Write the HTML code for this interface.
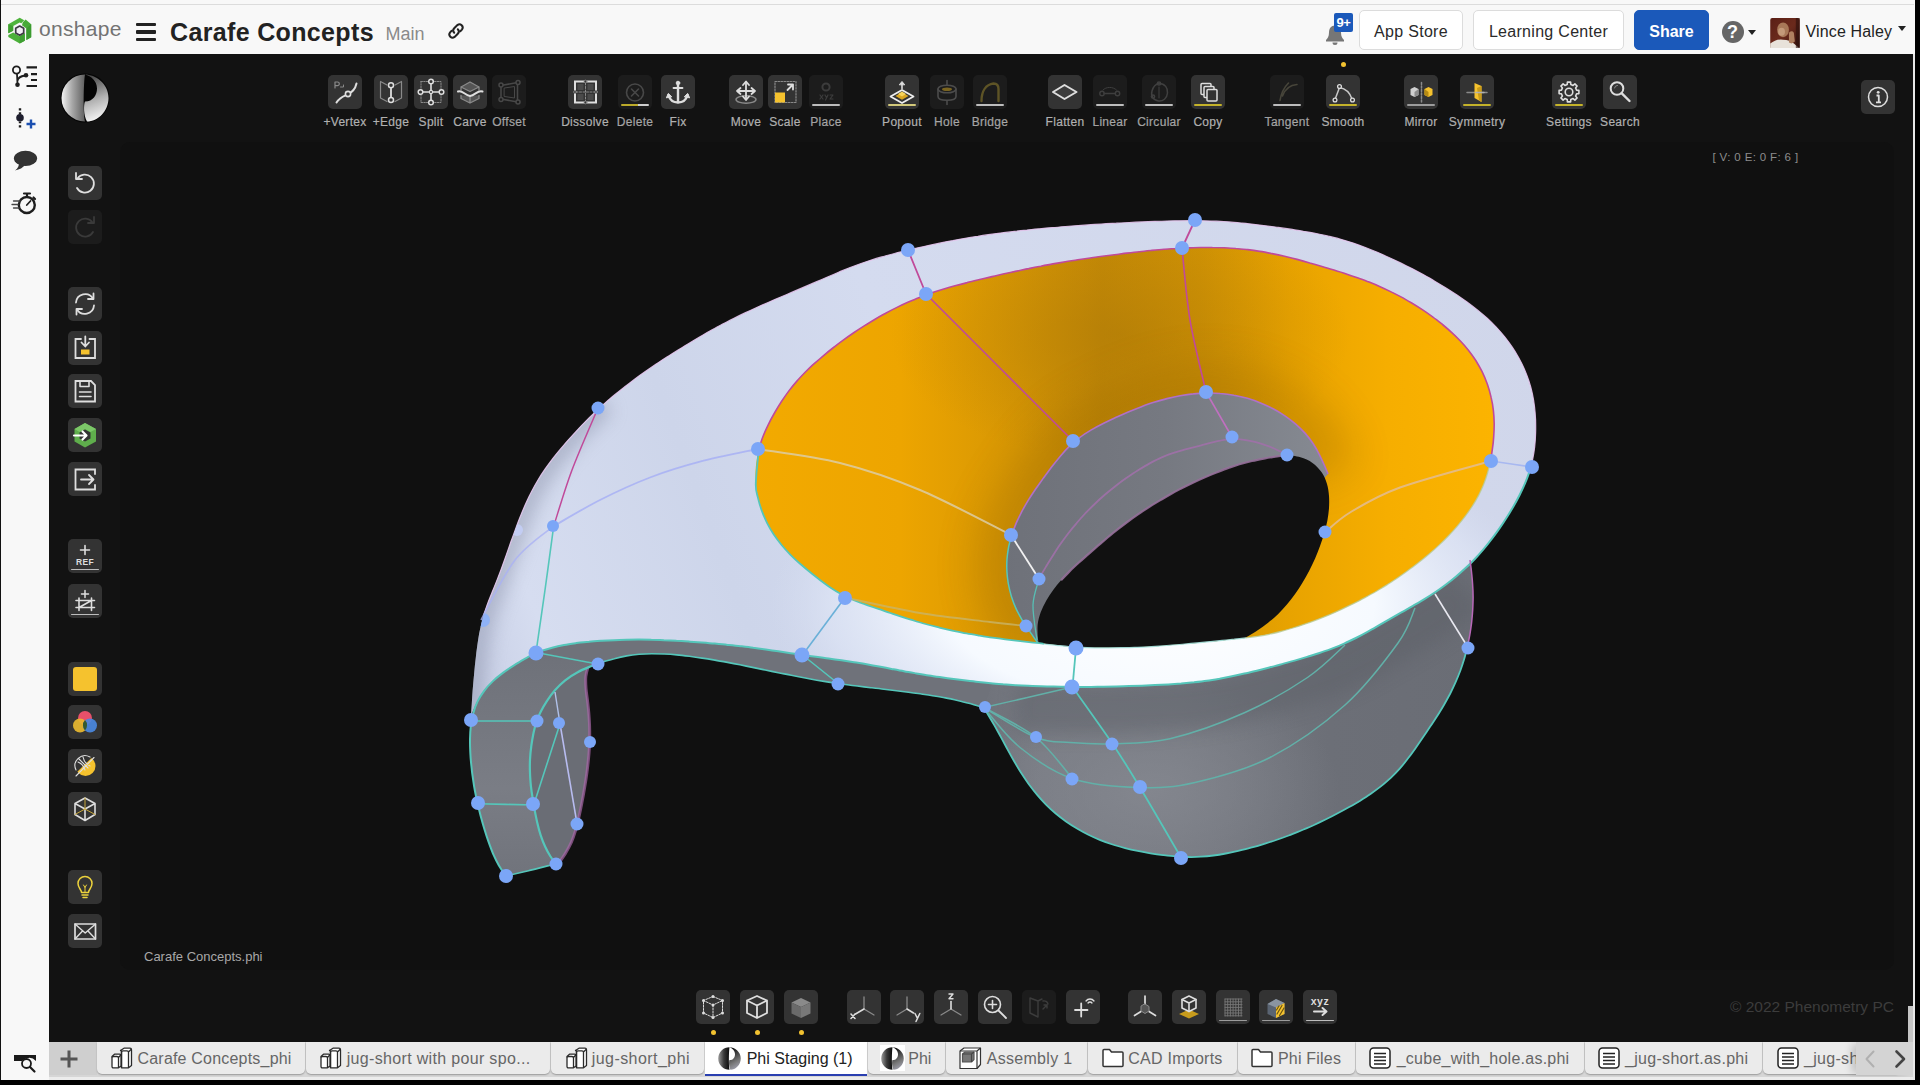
<!DOCTYPE html>
<html lang="en"><head><meta charset="utf-8"><title>Carafe Concepts | Phi Staging (1)</title>
<style>
*{box-sizing:border-box;margin:0;padding:0}
html,body{width:1920px;height:1085px;overflow:hidden;background:#000;font-family:"Liberation Sans",sans-serif}
#app{position:absolute;left:0;top:0;width:1915px;height:1080px;background:#f8f8f8;overflow:hidden}
#header{position:absolute;left:0;top:0;width:1914px;height:54px;background:#f8f8f8}
#header .topline{position:absolute;left:0;top:4px;width:1914px;height:1px;background:#dcdcdc}
#header .abs{position:absolute}
.title{position:absolute;left:170px;top:16.500px;font-weight:bold;font-size:25px;line-height:30px;color:#222;white-space:nowrap;letter-spacing:0.35px}
.branch{position:absolute;left:385.500px;top:21px;font-size:18px;line-height:26px;color:#8a8a8a;white-space:nowrap}
.hbtn{position:absolute;top:10px;height:40px;border:1px solid #dcdcdc;border-radius:5px;background:#fff;color:#2a2a2a;font-size:16px;line-height:42px;text-align:center;white-space:nowrap;letter-spacing:0.3px}
.hbtn.share{background:#1b59ba;border-color:#1b59ba;color:#fff;font-weight:bold;font-size:16px;letter-spacing:0}
.uname{position:absolute;left:1805.500px;top:20px;letter-spacing:0.150px;font-size:16px;line-height:24px;color:#222;white-space:nowrap}
#sidebar{position:absolute;left:0;top:54px;width:49px;height:1026px;background:#f8f8f8}
#canvas{position:absolute;left:49px;top:54px;width:1864px;height:988px;background:#121212;overflow:hidden}
#viewport{position:absolute;left:71px;top:88px;width:1774px;height:828px;background:#101010;border-radius:10px}
#rline{z-index:20;position:absolute;left:1913px;top:54px;width:2px;height:1026px;background:#e8e8e8}
#lline{z-index:20;position:absolute;left:0;top:0;width:1px;height:1080px;background:#111}
#rstrip{z-index:20;position:absolute;left:1908px;top:1006px;width:5px;height:36px;background:#c6c6c6}
.tb{position:absolute;width:34px;height:34px;border-radius:5px;background:#333}
.tb.dim{background:#1c1c1c}
.tb svg{position:absolute;left:0;top:0;width:34px;height:34px;overflow:visible}
.tl{position:absolute;top:61px;font-size:12px;line-height:14px;color:#b0b0b0;-webkit-text-stroke:0.2px #b0b0b0;white-space:nowrap;transform:translateX(-50%);text-align:center;letter-spacing:0.3px}
.ul{position:absolute;height:1.600px;width:28px;border-radius:1px;margin-top:0.400px}
.dot{position:absolute;width:5px;height:5px;border-radius:50%;background:#f2c230}
.vef{position:absolute;left:1663.5px;top:96px;font-size:11.5px;line-height:14px;color:#8c8c8c;white-space:nowrap;letter-spacing:0.36px}
.fname{position:absolute;left:95px;top:896px;font-size:13px;line-height:14px;color:#a8a8a8;white-space:nowrap}
.copy{position:absolute;left:1681px;top:945px;font-size:15.5px;line-height:16px;color:#3c3c3c;white-space:nowrap}
#tabs{position:absolute;left:49px;top:1042px;width:1864px;height:38px;background:#d6d6d6;overflow:hidden}
.addtab{position:absolute;left:0;top:0;width:48px;height:33px;background:#cfcfcf}
.tab{position:absolute;top:0;height:32px;background:#ebebeb;border-radius:0 0 5px 5px;box-shadow:0 1px 1.500px rgba(0,0,0,.28)}
.tab.active{background:#fff;border-radius:0;height:34px;border-bottom:2.500px solid #2a3fb0;box-shadow:none}
.ti{position:absolute;overflow:visible}
.tt{position:absolute;top:6px;font-size:16px;line-height:22px;color:#666;white-space:nowrap}
.tt.act{color:#222}
.tabnav{position:absolute;left:1807px;top:0;width:57px;height:33px;background:#d4d4d4;box-shadow:-6px 0 8px -2px rgba(0,0,0,.18)}
.tabfoot1{position:absolute;left:0;top:33px;width:1864px;height:2px;background:#cdcdcd;display:none}
.tabfoot2{position:absolute;left:0;top:35px;width:1864px;height:3px;background:#ececec}

</style></head>
<body>
<div id="app">
<div id="header">
<div class="topline"></div>
<svg class="abs" style="left:6px;top:15px" width="28" height="30" viewBox="6 15 28 30">
<path d="M8.300 33.300 V24.200 L19.700 17.700 L24.200 20.200 L21.300 23.300 L19.700 22.400 L13.200 26.100 V30.700 Z" fill="#4fb43c"/>
<path d="M8.300 33.300 V24.200 L13.200 26.100 V30.700Z" fill="#3f9f30"/>
<path d="M22.800 22.200 L25.600 19.600 L31.200 24.200 V37.200 L26.400 40 V28.400 L22 25.200 Z" fill="#48aa38"/>
<path d="M26.400 28.400 L31.200 24.200 V37.200 L26.400 40Z" fill="#3c9a30"/>
<path d="M8.300 35 L13.200 32.400 L19.700 36.200 L24.800 33.300 V40.800 L19.700 43.400 L8.300 37 Z" fill="#4cb03a"/>
<path d="M19.700 36.200 L24.800 33.300 V40.800 L19.700 43.400Z" fill="#3f9f32"/>
<path d="M19.700 26 L23.700 28.300 V32.900 L19.700 35.200 L15.700 32.900 V28.300 Z" fill="#f4eef6" stroke="#3e3a44" stroke-width="1.700" stroke-linejoin="round"/>
</svg>
<div class="abs" style="left:39px;top:14px;font-size:21px;line-height:30px;color:#737373;letter-spacing:0.3px;white-space:nowrap">onshape</div>
<div class="abs" style="left:136px;top:23px;width:20px;height:3.400px;background:#222;border-radius:1px"></div>
<div class="abs" style="left:136px;top:30.300px;width:20px;height:3.400px;background:#222;border-radius:1px"></div>
<div class="abs" style="left:136px;top:37.500px;width:20px;height:3.400px;background:#222;border-radius:1px"></div>
<div class="title">Carafe Concepts</div>
<div class="branch">Main</div>
<svg class="abs" style="left:446px;top:21px" width="20" height="20" viewBox="0 0 20 20" fill="none" stroke="#222" stroke-width="2" stroke-linecap="round">
<path d="M8.2 11.8 a3.2 3.2 0 0 1 0 -4.5 l3.2 -3.2 a3.2 3.2 0 0 1 4.5 4.5 l-1.6 1.6"/>
<path d="M11.8 8.2 a3.2 3.2 0 0 1 0 4.5 l-3.2 3.2 a3.2 3.2 0 0 1 -4.5 -4.5 l1.6 -1.6"/>
</svg>
<svg class="abs" style="left:1324px;top:24px" width="24" height="22" viewBox="0 0 24 22"><path d="M11 1.5 c-4 0-6 3-6 7 c0 4-1.5 6-3 7.5 v1.5 h18 v-1.5 c-1.500-1.500-3-3.500-3-7.500 c0-4-2-7-6-7z M8.500 18.500 a2.500 2.500 0 0 0 5 0z" fill="#767676"/></svg>
<div class="abs" style="left:1334px;top:13px;width:19px;height:19px;background:#1b59ba;border-radius:2px;color:#fff;font-weight:bold;font-size:13px;line-height:19px;text-align:center;letter-spacing:-0.5px">9+</div>
<div class="hbtn" style="left:1359px;width:104px">App Store</div>
<div class="hbtn" style="left:1473px;width:151px">Learning Center</div>
<div class="hbtn share" style="left:1634px;width:75px">Share</div>
<div class="abs" style="left:1721.500px;top:21px;width:22px;height:22px;border-radius:50%;background:#666;color:#fff;font-weight:bold;font-size:18px;line-height:22px;text-align:center">?</div>
<div class="abs" style="left:1748px;top:30px;width:0;height:0;border-left:4.5px solid transparent;border-right:4.5px solid transparent;border-top:5px solid #222"></div>
<svg class="abs" style="left:1769.500px;top:17.500px" width="30" height="30.500" viewBox="0 0 30 31">
<defs><linearGradient id="avg" x1="0" y1="0" x2="1" y2="1"><stop offset="0" stop-color="#5a1f16"/><stop offset="0.5" stop-color="#6b2a1c"/><stop offset="1" stop-color="#3a1510"/></linearGradient></defs>
<rect width="30" height="31" rx="2" fill="url(#avg)"/>
<ellipse cx="13" cy="12" rx="6" ry="7.5" fill="#a87858"/>
<ellipse cx="11.500" cy="14" rx="3.500" ry="4" fill="#c49a7a"/>
<path d="M0 31 L0 26 Q6 21 13 22 Q20 22 24 26 L30 31Z" fill="#e8e2da"/>
<path d="M19 15 q3 -3 5 0 l1 9 q-3 3 -6 1z" fill="#b08060"/>
<rect x="26" y="0" width="4" height="31" fill="#2a0f0c" opacity=".6"/>
</svg>
<div class="uname">Vince Haley</div>
<div class="abs" style="left:1898px;top:26px;width:0;height:0;border-left:4.5px solid transparent;border-right:4.5px solid transparent;border-top:5px solid #222"></div>
</div>
<div id="rline"></div><div id="lline"></div><div id="rstrip"></div>

<div id="sidebar">
<svg style="position:absolute;left:0;top:0" width="49" height="180" viewBox="0 54 49 180" fill="none" stroke="#1e1e1e" stroke-linecap="round">
<circle cx="16.500" cy="70" r="3.600" stroke-width="1.800"/>
<path d="M17 74 L17.500 84 M17.500 81 Q18 76.500 25 75.500" stroke-width="1.800"/>
<circle cx="17.500" cy="84.800" r="2.300" fill="#1e1e1e" stroke="none"/>
<circle cx="26" cy="75.300" r="2.300" fill="#1e1e1e" stroke="none"/>
<path d="M26.500 67.300 H37 M31 74.100 H37 M31 80 H37 M26.500 86 H37" stroke-width="2.200" stroke-linecap="butt"/>
<path d="M20 108.300 V110.500 M20 112.200 V114.200 M20 121.400 V123.200 M20 125.200 V127.400" stroke-width="2.400" stroke-linecap="butt"/>
<circle cx="20" cy="117.800" r="3.800" fill="#1e1e2e" stroke="none"/>
<path d="M26.500 124 H35.500 M31 119.500 V128.500" stroke="#1b4fb0" stroke-width="2.400" stroke-linecap="butt"/>
<ellipse cx="25.500" cy="158.300" rx="11.600" ry="7.600" fill="#333" stroke="none"/>
<path d="M19 163 Q19 168 15 170.500 Q22 169 25 165Z" fill="#333" stroke="none"/>
<circle cx="26.800" cy="205" r="8" stroke-width="2.400"/>
<path d="M24 193.500 H30 M27 194 V197 M33.500 197.500 L35 199" stroke-width="2.200"/>
<path d="M26.800 205 L30.500 201" stroke-width="1.800"/>
<path d="M13.500 201 H20 M12 204.500 H18 M13.500 208 H19" stroke-width="1.300" stroke="#444"/>
</svg>
<svg style="position:absolute;left:12px;top:996px" width="28" height="24" viewBox="12 1050 28 24" fill="none" stroke="#1a1a1a">
<path d="M14 1055 H36 V1061 Q30 1054.500 22 1061 H14Z" fill="#1a1a1a" stroke="none"/>
<circle cx="26.500" cy="1063.500" r="4.500" stroke-width="1.800" fill="#f8f8f8"/>
<path d="M30 1067 L34.500 1071.500" stroke-width="2.200" stroke-linecap="round"/>
</svg>
</div>

<div id="canvas">
<div id="viewport"></div>
<svg id="model" style="position:absolute;left:0;top:0" width="1864" height="988" viewBox="49 54 1864 988">
<defs>
<linearGradient id="gRim" gradientUnits="userSpaceOnUse" x1="470" y1="700" x2="1540" y2="300"><stop offset="0" stop-color="#c6cde4"/><stop offset="0.080" stop-color="#d6ddf0"/><stop offset="0.250" stop-color="#cdd5ea"/><stop offset="0.450" stop-color="#d4dbef"/><stop offset="1" stop-color="#d0d6ea"/></linearGradient>
<radialGradient id="gBand" gradientUnits="userSpaceOnUse" cx="1160" cy="605" r="390" gradientTransform="translate(1160 605) scale(1 0.45) translate(-1160 -605)"><stop offset="0" stop-color="#ffffff"/><stop offset="0.550" stop-color="#f6faff"/><stop offset="0.850" stop-color="#dfe6f6" stop-opacity="0.600"/><stop offset="1" stop-color="#d6ddf0" stop-opacity="0"/></radialGradient>
<linearGradient id="gOr" gradientUnits="userSpaceOnUse" x1="750" y1="0" x2="1500" y2="0"><stop offset="0" stop-color="#f3aa00"/><stop offset="0.200" stop-color="#eda500"/><stop offset="0.360" stop-color="#d69604"/><stop offset="0.470" stop-color="#c58a06"/><stop offset="0.600" stop-color="#d19304"/><stop offset="0.720" stop-color="#e8a300"/><stop offset="0.850" stop-color="#f6ae00"/><stop offset="1" stop-color="#fcb400"/></linearGradient>
<radialGradient id="gOrD" gradientUnits="userSpaceOnUse" cx="1120" cy="335" r="230" gradientTransform="translate(1120 335) scale(1 0.55) translate(-1120 -335)"><stop offset="0" stop-color="#a87608" stop-opacity="0.500"/><stop offset="1" stop-color="#b07c08" stop-opacity="0"/></radialGradient>
<linearGradient id="gNeck" gradientUnits="userSpaceOnUse" x1="1000" y1="0" x2="1330" y2="0"><stop offset="0" stop-color="#6e7179"/><stop offset="0.500" stop-color="#767981"/><stop offset="1" stop-color="#868a92"/></linearGradient>
<linearGradient id="gBody" gradientUnits="userSpaceOnUse" x1="980" y1="0" x2="1480" y2="0"><stop offset="0" stop-color="#6f727a"/><stop offset="0.120" stop-color="#787b83"/><stop offset="0.400" stop-color="#767981"/><stop offset="0.700" stop-color="#6c6f77"/><stop offset="1" stop-color="#6a6d75"/></linearGradient>
<linearGradient id="gHand" gradientUnits="userSpaceOnUse" x1="0" y1="650" x2="0" y2="880"><stop offset="0" stop-color="#6e7179"/><stop offset="0.600" stop-color="#7a7d85"/><stop offset="1" stop-color="#70737b"/></linearGradient>
<filter id="blur8" filterUnits="userSpaceOnUse" x="300" y="100" width="1400" height="900"><feGaussianBlur stdDeviation="9"/></filter>
<clipPath id="cRim"><path d="M471.0 716.0 C471.1 713.9 471.5 707.7 471.8 703.5 C472.0 699.4 472.3 695.1 472.6 690.9 C473.0 686.7 473.3 682.5 473.7 678.3 C474.1 674.1 474.5 669.9 474.9 665.6 C475.4 661.4 475.8 657.2 476.3 652.9 C476.9 648.6 477.4 644.2 478.1 639.9 C478.8 635.7 479.5 631.3 480.5 627.2 C481.4 623.0 482.5 618.9 483.7 614.9 C484.9 610.9 486.4 607.0 487.8 603.1 C489.3 599.2 490.9 595.4 492.4 591.5 C494.0 587.6 495.6 583.7 497.2 579.6 C498.8 575.6 500.3 571.5 501.9 567.3 C503.4 563.1 504.9 558.9 506.4 554.6 C507.9 550.4 509.4 546.1 510.9 541.8 C512.5 537.5 514.0 533.2 515.6 528.9 C517.2 524.6 518.8 520.3 520.5 516.1 C522.2 511.9 523.9 507.6 525.8 503.5 C527.6 499.4 529.5 495.4 531.6 491.5 C533.6 487.6 535.7 483.8 538.0 480.0 C540.2 476.3 542.6 472.7 545.0 469.2 C547.4 465.7 550.0 462.3 552.5 458.9 C555.1 455.6 557.7 452.4 560.4 449.2 C563.1 445.9 565.8 442.8 568.6 439.6 C571.4 436.5 574.2 433.4 577.1 430.3 C580.0 427.2 582.9 424.1 585.9 421.1 C588.9 418.1 591.9 415.1 595.0 412.2 C598.1 409.2 601.3 406.4 604.4 403.6 C607.6 400.8 610.8 398.0 614.1 395.3 C617.4 392.6 620.8 389.9 624.2 387.2 C627.6 384.6 631.1 381.9 634.6 379.3 C638.1 376.7 641.7 374.1 645.3 371.6 C648.9 369.1 652.6 366.6 656.2 364.1 C659.9 361.6 663.6 359.2 667.3 356.8 C671.1 354.4 674.8 352.0 678.5 349.7 C682.2 347.4 685.9 345.1 689.6 342.9 C693.2 340.7 696.8 338.6 700.4 336.5 C704.0 334.4 707.5 332.3 711.2 330.3 C714.8 328.3 718.4 326.3 722.2 324.3 C725.9 322.4 729.7 320.4 733.5 318.5 C737.3 316.6 741.2 314.7 745.0 312.9 C748.9 311.1 752.8 309.3 756.7 307.5 C760.7 305.7 764.7 304.0 768.7 302.2 C772.7 300.5 776.8 298.7 780.8 297.0 C784.8 295.3 788.8 293.6 792.8 291.9 C796.7 290.2 800.6 288.6 804.5 286.9 C808.4 285.2 812.2 283.6 816.1 281.9 C819.9 280.3 823.7 278.6 827.5 277.0 C831.3 275.4 835.0 273.8 838.6 272.2 C842.3 270.7 845.9 269.2 849.5 267.8 C853.1 266.4 856.6 265.1 860.3 263.8 C863.9 262.5 867.5 261.3 871.3 260.1 C875.0 258.9 878.8 257.8 882.7 256.7 C886.5 255.5 890.5 254.5 894.5 253.5 C898.4 252.4 902.4 251.5 906.3 250.5 C910.2 249.6 914.1 248.7 917.9 247.8 C921.7 247.0 925.4 246.2 929.2 245.3 C933.1 244.5 936.9 243.7 940.8 242.9 C944.7 242.1 948.8 241.3 952.9 240.6 C956.9 239.8 961.1 239.0 965.3 238.3 C969.5 237.6 973.7 236.9 977.9 236.3 C982.0 235.6 986.1 235.0 990.2 234.4 C994.3 233.9 998.3 233.3 1002.4 232.8 C1006.4 232.3 1010.4 231.9 1014.5 231.4 C1018.6 230.9 1022.7 230.5 1026.9 230.1 C1031.0 229.6 1035.3 229.2 1039.5 228.8 C1043.8 228.4 1048.1 228.0 1052.4 227.6 C1056.6 227.3 1061.0 226.9 1065.3 226.5 C1069.6 226.2 1073.9 225.9 1078.1 225.6 C1082.4 225.3 1086.6 225.0 1090.9 224.7 C1095.1 224.4 1099.3 224.1 1103.5 223.9 C1107.8 223.6 1112.0 223.4 1116.3 223.2 C1120.5 222.9 1124.8 222.7 1129.1 222.5 C1133.4 222.3 1137.7 222.1 1142.0 221.9 C1146.3 221.7 1150.5 221.6 1154.6 221.4 C1158.8 221.3 1162.9 221.2 1166.9 221.0 C1171.0 220.9 1174.9 220.9 1178.9 220.8 C1182.9 220.7 1186.9 220.7 1191.0 220.7 C1195.1 220.7 1199.3 220.7 1203.5 220.8 C1207.8 220.9 1212.1 221.0 1216.4 221.2 C1220.6 221.4 1224.8 221.6 1228.9 221.9 C1233.0 222.2 1237.1 222.6 1241.2 223.0 C1245.2 223.4 1249.3 223.8 1253.4 224.3 C1257.5 224.8 1261.6 225.3 1265.7 225.8 C1269.8 226.3 1274.0 226.9 1278.2 227.4 C1282.3 228.0 1286.5 228.6 1290.7 229.2 C1295.0 229.9 1299.2 230.5 1303.4 231.3 C1307.6 232.0 1311.9 232.7 1316.0 233.5 C1320.2 234.4 1324.3 235.2 1328.4 236.2 C1332.6 237.1 1336.7 238.2 1340.8 239.3 C1344.9 240.5 1349.1 241.8 1353.2 243.1 C1357.3 244.5 1361.4 246.0 1365.4 247.5 C1369.4 249.1 1373.4 250.7 1377.3 252.3 C1381.2 254.0 1385.1 255.7 1388.9 257.5 C1392.7 259.2 1396.6 261.0 1400.4 262.9 C1404.2 264.8 1408.1 266.7 1411.9 268.6 C1415.7 270.6 1419.5 272.6 1423.2 274.6 C1427.0 276.7 1430.6 278.7 1434.3 280.9 C1438.0 283.0 1441.6 285.2 1445.2 287.4 C1448.9 289.7 1452.5 292.0 1456.2 294.4 C1459.8 296.9 1463.5 299.4 1467.0 301.9 C1470.5 304.5 1474.0 307.1 1477.4 309.9 C1480.7 312.6 1484.0 315.4 1487.2 318.2 C1490.3 321.1 1493.3 324.1 1496.2 327.1 C1499.1 330.2 1501.8 333.3 1504.5 336.6 C1507.1 339.9 1509.6 343.2 1511.9 346.7 C1514.3 350.2 1516.5 353.8 1518.6 357.5 C1520.6 361.2 1522.6 365.0 1524.3 368.9 C1526.0 372.8 1527.6 376.9 1528.9 381.0 C1530.3 385.1 1531.4 389.3 1532.3 393.5 C1533.2 397.8 1534.0 402.1 1534.5 406.5 C1535.0 410.9 1535.4 415.4 1535.6 419.8 C1535.7 424.3 1535.8 428.8 1535.6 433.3 C1535.5 437.8 1535.2 442.3 1534.7 446.7 C1534.2 451.1 1533.5 455.5 1532.6 459.7 C1531.7 464.0 1530.6 468.1 1529.3 472.1 C1528.0 476.1 1526.5 480.0 1524.8 483.9 C1523.2 487.7 1521.4 491.4 1519.5 495.2 C1517.6 498.9 1515.6 502.7 1513.4 506.4 C1511.3 510.1 1509.1 513.8 1506.7 517.5 C1504.4 521.2 1501.9 525.0 1499.3 528.6 C1496.8 532.2 1494.1 535.9 1491.4 539.4 C1488.7 542.9 1486.0 546.3 1483.2 549.6 C1480.4 552.9 1477.6 556.1 1474.6 559.2 C1471.7 562.3 1468.7 565.3 1465.6 568.1 C1462.5 571.0 1459.3 573.8 1456.1 576.5 C1452.8 579.3 1449.5 581.9 1446.0 584.5 C1442.6 587.1 1439.1 589.6 1435.5 592.0 C1431.9 594.4 1428.2 596.8 1424.4 599.1 C1420.7 601.4 1416.8 603.6 1413.0 605.8 C1409.1 608.1 1405.2 610.2 1401.4 612.4 C1397.6 614.6 1393.8 616.8 1390.1 618.9 C1386.3 621.1 1382.6 623.3 1378.8 625.4 C1375.0 627.6 1371.3 629.8 1367.5 631.8 C1363.7 633.9 1359.8 636.0 1355.9 638.0 C1352.0 639.9 1348.1 641.8 1344.1 643.6 C1340.1 645.4 1336.0 647.0 1331.9 648.6 C1327.8 650.1 1323.7 651.6 1319.5 653.0 C1315.4 654.4 1311.2 655.6 1307.1 656.9 C1302.9 658.2 1298.8 659.4 1294.6 660.6 C1290.4 661.8 1286.2 663.0 1282.0 664.1 C1277.8 665.3 1273.6 666.4 1269.4 667.5 C1265.2 668.6 1260.9 669.7 1256.8 670.7 C1252.6 671.7 1248.5 672.7 1244.4 673.6 C1240.2 674.6 1236.2 675.5 1232.0 676.3 C1227.9 677.1 1223.8 677.9 1219.6 678.7 C1215.4 679.4 1211.2 680.1 1206.9 680.7 C1202.7 681.3 1198.4 681.8 1194.1 682.3 C1189.8 682.7 1185.5 683.1 1181.2 683.5 C1176.8 683.8 1172.5 684.1 1168.1 684.4 C1163.7 684.6 1159.3 684.9 1154.9 685.1 C1150.5 685.3 1146.1 685.5 1141.8 685.7 C1137.4 685.8 1133.1 686.0 1128.9 686.1 C1124.6 686.3 1120.4 686.4 1116.2 686.5 C1112.0 686.6 1107.8 686.7 1103.6 686.8 C1099.5 686.8 1095.3 686.9 1091.2 686.9 C1087.0 686.9 1082.8 686.9 1078.6 686.9 C1074.5 686.9 1070.2 686.9 1066.0 686.8 C1061.8 686.8 1057.6 686.7 1053.3 686.6 C1049.1 686.5 1044.9 686.4 1040.7 686.3 C1036.4 686.1 1032.3 686.0 1028.1 685.8 C1023.9 685.6 1019.8 685.4 1015.6 685.2 C1011.5 684.9 1007.3 684.6 1003.1 684.3 C999.0 684.0 994.8 683.7 990.7 683.3 C986.5 682.9 982.4 682.5 978.3 682.0 C974.2 681.6 970.1 681.1 966.0 680.6 C961.9 680.1 957.8 679.6 953.7 679.1 C949.5 678.5 945.4 677.9 941.2 677.3 C937.1 676.7 932.9 676.1 928.8 675.4 C924.6 674.8 920.5 674.1 916.3 673.4 C912.2 672.7 908.0 672.0 903.9 671.2 C899.8 670.5 895.7 669.7 891.5 668.9 C887.4 668.2 883.2 667.4 879.1 666.6 C874.9 665.8 870.8 665.1 866.6 664.3 C862.4 663.6 858.2 662.9 854.0 662.3 C849.8 661.6 845.6 661.0 841.4 660.3 C837.1 659.7 832.9 659.1 828.6 658.5 C824.4 658.0 820.1 657.4 815.8 656.8 C811.6 656.2 807.3 655.6 803.1 655.0 C798.9 654.4 794.8 653.8 790.6 653.2 C786.5 652.6 782.4 651.9 778.3 651.3 C774.1 650.7 770.0 650.1 765.8 649.5 C761.7 648.9 757.4 648.3 753.2 647.8 C749.0 647.2 744.7 646.7 740.5 646.2 C736.2 645.7 731.9 645.3 727.7 644.9 C723.4 644.4 719.1 644.0 714.8 643.6 C710.5 643.3 706.2 642.9 701.9 642.5 C697.6 642.2 693.3 641.9 689.0 641.6 C684.8 641.3 680.6 641.0 676.4 640.8 C672.2 640.5 668.1 640.3 663.9 640.2 C659.7 640.0 655.5 639.8 651.3 639.8 C647.2 639.7 643.0 639.6 638.9 639.6 C634.8 639.6 630.8 639.7 626.7 639.8 C622.6 639.9 618.5 640.0 614.4 640.2 C610.2 640.4 606.0 640.6 601.8 640.8 C597.6 641.1 593.3 641.4 589.1 641.8 C584.8 642.1 580.6 642.6 576.4 643.1 C572.3 643.7 568.1 644.3 564.1 645.1 C560.0 645.9 556.0 646.8 552.2 647.8 C548.4 648.8 543.9 650.1 541.2 650.9 C538.5 651.7 536.9 652.2 536.0 652.5 C534.3 653.4 529.7 656.0 526.1 658.1 C522.5 660.2 518.2 662.6 514.3 665.0 C510.4 667.5 506.4 670.1 502.7 672.9 C499.1 675.6 495.7 678.4 492.5 681.5 C489.3 684.5 486.5 687.5 483.8 691.1 C481.1 694.7 478.7 698.9 476.5 703.0 C474.4 707.2 471.9 713.8 471.0 716.0Z"/></clipPath>
<clipPath id="cBody"><path d="M1470.0 560.0 C1470.2 562.0 1471.1 567.8 1471.5 571.9 C1471.9 575.9 1472.4 580.1 1472.6 584.3 C1472.9 588.5 1473.1 592.9 1473.1 597.2 C1473.1 601.5 1472.9 605.8 1472.7 610.0 C1472.4 614.2 1472.1 618.4 1471.6 622.6 C1471.1 626.7 1470.5 630.8 1469.8 634.9 C1469.1 639.0 1468.3 643.0 1467.4 647.0 C1466.5 651.0 1465.4 655.0 1464.2 658.9 C1463.0 662.9 1461.7 666.8 1460.3 670.7 C1458.8 674.6 1457.2 678.6 1455.5 682.4 C1453.8 686.3 1451.9 690.2 1450.0 694.0 C1448.0 697.7 1445.9 701.5 1443.8 705.2 C1441.7 708.8 1439.4 712.4 1437.2 716.0 C1434.9 719.6 1432.5 723.1 1430.2 726.6 C1427.8 730.2 1425.4 733.7 1423.0 737.3 C1420.5 740.9 1418.0 744.6 1415.5 748.2 C1413.0 751.8 1410.4 755.4 1407.7 758.8 C1405.1 762.3 1402.3 765.7 1399.5 768.9 C1396.6 772.1 1393.6 775.2 1390.5 778.1 C1387.4 781.0 1384.1 783.7 1380.8 786.4 C1377.5 789.0 1374.0 791.5 1370.5 793.9 C1367.0 796.3 1363.4 798.6 1359.8 800.9 C1356.1 803.1 1352.4 805.2 1348.7 807.3 C1344.9 809.5 1341.1 811.5 1337.2 813.5 C1333.4 815.6 1329.5 817.6 1325.5 819.5 C1321.5 821.4 1317.5 823.3 1313.5 825.2 C1309.4 827.0 1305.3 828.8 1301.2 830.5 C1297.0 832.2 1292.9 833.9 1288.7 835.5 C1284.5 837.1 1280.4 838.6 1276.2 840.0 C1272.0 841.5 1267.7 842.8 1263.5 844.1 C1259.3 845.4 1255.1 846.6 1250.8 847.7 C1246.6 848.9 1242.4 849.9 1238.2 850.9 C1234.1 851.8 1229.9 852.7 1225.8 853.5 C1221.6 854.3 1217.5 855.0 1213.4 855.5 C1209.2 856.0 1205.1 856.4 1200.9 856.7 C1196.7 857.0 1192.5 857.1 1188.4 857.0 C1184.2 857.0 1180.0 856.7 1175.8 856.4 C1171.6 856.1 1167.4 855.6 1163.1 855.1 C1158.9 854.6 1154.7 854.0 1150.4 853.3 C1146.2 852.6 1142.0 851.8 1137.7 850.9 C1133.5 850.1 1129.3 849.2 1125.1 848.1 C1120.9 847.0 1116.7 845.9 1112.6 844.5 C1108.5 843.2 1104.3 841.7 1100.3 840.1 C1096.3 838.4 1092.3 836.6 1088.4 834.7 C1084.5 832.8 1080.7 830.7 1077.0 828.5 C1073.3 826.3 1069.6 823.9 1066.0 821.4 C1062.5 818.9 1059.0 816.3 1055.7 813.5 C1052.3 810.7 1049.1 807.7 1046.0 804.6 C1043.0 801.5 1040.0 798.3 1037.2 794.9 C1034.4 791.6 1031.7 788.1 1029.0 784.5 C1026.4 780.9 1023.9 777.1 1021.4 773.3 C1019.0 769.5 1016.6 765.5 1014.3 761.5 C1011.9 757.5 1009.7 753.5 1007.5 749.4 C1005.3 745.3 1003.1 741.1 1000.9 737.1 C998.6 733.0 996.4 728.9 994.1 724.9 C991.8 721.0 988.9 716.1 987.2 713.2 C985.5 710.3 984.3 708.5 983.7 707.5 L990 670 L1300 600 Z"/></clipPath>
<radialGradient id="gBodyL" gradientUnits="userSpaceOnUse" cx="1150" cy="790" r="190" gradientTransform="translate(1150 790) scale(1 0.6) translate(-1150 -790)"><stop offset="0" stop-color="#868991" stop-opacity="0.800"/><stop offset="1" stop-color="#868991" stop-opacity="0"/></radialGradient>
<clipPath id="cOr"><path d="M758.8 449.5 C759.7 446.3 761.3 440.9 762.9 436.8 C764.4 432.7 766.3 428.7 768.2 424.8 C770.1 420.8 772.3 416.8 774.5 413.0 C776.7 409.1 779.1 405.2 781.5 401.5 C783.9 397.9 786.4 394.3 788.9 390.9 C791.5 387.5 794.1 384.3 796.9 381.1 C799.6 378.0 802.5 375.0 805.4 372.0 C808.4 369.1 811.4 366.2 814.5 363.4 C817.6 360.7 820.7 358.0 823.9 355.3 C827.0 352.7 830.2 350.1 833.5 347.5 C836.8 344.9 840.2 342.4 843.6 339.9 C847.0 337.4 850.6 334.9 854.1 332.5 C857.6 330.1 861.1 327.8 864.6 325.6 C868.1 323.4 871.6 321.3 875.1 319.2 C878.6 317.1 882.1 315.2 885.7 313.2 C889.2 311.3 892.8 309.4 896.5 307.6 C900.2 305.8 904.0 304.0 907.8 302.3 C911.7 300.6 915.6 298.9 919.5 297.4 C923.4 295.9 927.3 294.4 931.2 293.1 C935.1 291.7 939.0 290.5 943.0 289.3 C946.9 288.1 950.9 286.9 955.0 285.8 C959.0 284.7 963.1 283.6 967.2 282.6 C971.3 281.5 975.5 280.5 979.6 279.5 C983.8 278.5 987.9 277.6 992.0 276.6 C996.1 275.7 1000.2 274.7 1004.2 273.8 C1008.3 272.9 1012.4 272.0 1016.5 271.1 C1020.5 270.3 1024.6 269.4 1028.7 268.6 C1032.7 267.7 1036.7 266.9 1040.8 266.2 C1044.8 265.4 1048.8 264.6 1052.9 263.9 C1057.0 263.2 1061.2 262.5 1065.3 261.8 C1069.4 261.1 1073.7 260.5 1077.8 259.8 C1082.0 259.2 1086.1 258.6 1090.2 258.0 C1094.2 257.4 1098.2 256.9 1102.3 256.3 C1106.4 255.8 1110.4 255.2 1114.5 254.7 C1118.6 254.2 1122.7 253.6 1126.9 253.1 C1131.1 252.6 1135.3 252.1 1139.4 251.7 C1143.6 251.2 1147.8 250.8 1151.9 250.4 C1156.0 250.0 1160.1 249.6 1164.1 249.3 C1168.2 249.0 1172.2 248.7 1176.2 248.5 C1180.3 248.2 1184.3 248.0 1188.4 247.9 C1192.4 247.7 1196.5 247.6 1200.5 247.5 C1204.5 247.5 1208.5 247.4 1212.4 247.5 C1216.3 247.5 1220.2 247.6 1224.1 247.7 C1228.0 247.9 1231.9 248.1 1235.9 248.5 C1239.8 248.8 1243.7 249.2 1247.7 249.6 C1251.7 250.1 1255.7 250.7 1259.8 251.4 C1263.8 252.0 1267.9 252.8 1272.0 253.6 C1276.1 254.4 1280.3 255.3 1284.5 256.3 C1288.6 257.3 1292.9 258.4 1297.1 259.4 C1301.3 260.5 1305.6 261.7 1309.7 262.9 C1313.9 264.0 1318.0 265.2 1322.0 266.4 C1326.1 267.6 1330.0 268.8 1333.9 270.0 C1337.8 271.2 1341.7 272.4 1345.6 273.7 C1349.5 275.0 1353.5 276.4 1357.4 277.8 C1361.3 279.2 1365.3 280.6 1369.1 282.1 C1372.9 283.6 1376.5 285.1 1380.1 286.7 C1383.7 288.3 1387.1 289.9 1390.6 291.6 C1394.0 293.3 1397.5 295.0 1401.0 296.9 C1404.5 298.8 1408.1 300.9 1411.7 303.0 C1415.2 305.1 1418.8 307.4 1422.3 309.7 C1425.8 312.0 1429.2 314.4 1432.6 316.9 C1435.9 319.3 1439.2 321.9 1442.5 324.5 C1445.7 327.1 1448.8 329.9 1451.8 332.6 C1454.9 335.4 1457.8 338.3 1460.6 341.3 C1463.4 344.2 1466.1 347.3 1468.6 350.5 C1471.1 353.7 1473.5 357.0 1475.8 360.5 C1478.0 364.1 1480.1 367.8 1482.1 371.7 C1484.0 375.6 1485.8 379.9 1487.3 384.1 C1488.8 388.4 1490.1 392.9 1491.1 397.4 C1492.2 401.8 1492.9 406.3 1493.4 410.7 C1493.9 415.2 1494.1 419.6 1494.2 423.9 C1494.2 428.2 1494.0 432.4 1493.7 436.6 C1493.5 440.8 1493.0 444.9 1492.4 448.9 C1491.9 453.0 1491.2 457.0 1490.4 461.0 C1489.6 465.0 1488.7 468.9 1487.6 472.8 C1486.5 476.7 1485.2 480.5 1483.7 484.3 C1482.2 488.0 1480.5 491.8 1478.6 495.4 C1476.7 499.1 1474.5 502.8 1472.2 506.3 C1469.9 509.8 1467.4 513.3 1464.9 516.7 C1462.3 520.1 1459.6 523.4 1456.9 526.6 C1454.1 529.8 1451.3 532.9 1448.3 536.0 C1445.4 539.1 1442.3 542.1 1439.1 545.1 C1435.9 548.1 1432.5 551.1 1429.1 554.0 C1425.7 556.9 1422.1 559.8 1418.6 562.5 C1415.1 565.3 1411.5 567.9 1408.0 570.5 C1404.5 573.1 1400.9 575.6 1397.4 578.0 C1393.8 580.4 1390.2 582.8 1386.6 585.1 C1382.9 587.4 1379.2 589.6 1375.6 591.8 C1371.9 593.9 1368.2 595.9 1364.5 597.9 C1360.8 599.9 1357.1 601.8 1353.4 603.7 C1349.6 605.6 1345.8 607.4 1342.0 609.2 C1338.1 611.0 1334.3 612.7 1330.3 614.4 C1326.3 616.1 1322.2 617.7 1318.0 619.3 C1313.9 620.9 1309.6 622.5 1305.4 623.9 C1301.2 625.4 1297.0 626.8 1292.9 628.0 C1288.7 629.3 1284.7 630.5 1280.7 631.5 C1276.7 632.6 1272.9 633.5 1269.0 634.3 C1265.1 635.1 1261.3 635.7 1257.5 636.3 C1253.7 636.9 1249.8 637.4 1246.0 637.9 C1242.1 638.3 1238.2 638.7 1234.2 639.2 C1230.3 639.6 1226.2 640.0 1222.2 640.4 C1218.1 640.8 1213.9 641.3 1209.7 641.7 C1205.5 642.1 1201.3 642.5 1197.1 642.9 C1193.0 643.3 1188.8 643.6 1184.7 644.0 C1180.5 644.4 1176.4 644.7 1172.3 645.0 C1168.1 645.4 1164.1 645.7 1159.9 646.0 C1155.8 646.3 1151.7 646.5 1147.5 646.8 C1143.3 647.0 1139.1 647.2 1134.8 647.3 C1130.5 647.5 1126.1 647.6 1121.7 647.7 C1117.2 647.8 1112.7 647.8 1108.3 647.8 C1103.8 647.9 1099.3 647.8 1094.9 647.8 C1090.5 647.7 1086.1 647.6 1081.7 647.4 C1077.4 647.2 1073.1 646.9 1068.8 646.5 C1064.5 646.2 1060.3 645.7 1056.2 645.3 C1052.0 644.8 1047.9 644.3 1043.8 643.8 C1039.6 643.3 1035.4 642.8 1031.1 642.3 C1026.9 641.8 1022.5 641.3 1018.1 640.8 C1013.8 640.3 1009.5 639.8 1005.2 639.3 C1000.9 638.7 996.7 638.2 992.4 637.6 C988.1 637.0 983.8 636.3 979.5 635.6 C975.2 634.9 970.8 634.2 966.5 633.4 C962.1 632.6 957.7 631.7 953.3 630.8 C948.9 629.8 944.5 628.8 940.2 627.8 C935.8 626.7 931.5 625.7 927.3 624.5 C923.1 623.4 919.0 622.3 915.0 621.0 C910.9 619.8 906.8 618.5 902.7 617.2 C898.6 615.8 894.5 614.4 890.4 613.0 C886.2 611.6 881.9 610.1 877.6 608.7 C873.3 607.2 868.8 605.8 864.5 604.2 C860.2 602.6 855.8 601.0 851.8 599.2 C847.7 597.4 843.8 595.5 840.1 593.5 C836.4 591.4 833.0 589.2 829.5 586.9 C826.1 584.6 822.9 582.2 819.6 579.7 C816.4 577.2 813.1 574.7 809.9 572.0 C806.6 569.4 803.3 566.6 800.1 563.8 C796.8 560.9 793.6 557.9 790.5 554.8 C787.4 551.6 784.4 548.4 781.6 545.0 C778.8 541.5 776.1 538.0 773.6 534.3 C771.2 530.6 769.0 526.7 767.0 522.8 C765.0 518.8 763.2 514.7 761.7 510.5 C760.2 506.3 758.9 502.0 757.9 497.6 C756.9 493.1 756.2 488.6 755.8 484.0 C755.4 479.4 755.3 474.6 755.6 470.0 C755.8 465.4 756.8 459.5 757.3 456.1 C757.8 452.7 757.8 452.8 758.8 449.5Z"/></clipPath>
<filter id="blur18" filterUnits="userSpaceOnUse" x="300" y="100" width="1400" height="900"><feGaussianBlur stdDeviation="20"/></filter>
</defs>
<path d="M1470.0 560.0 C1470.2 562.0 1471.1 567.8 1471.5 571.9 C1471.9 575.9 1472.4 580.1 1472.6 584.3 C1472.9 588.5 1473.1 592.9 1473.1 597.2 C1473.1 601.5 1472.9 605.8 1472.7 610.0 C1472.4 614.2 1472.1 618.4 1471.6 622.6 C1471.1 626.7 1470.5 630.8 1469.8 634.9 C1469.1 639.0 1468.3 643.0 1467.4 647.0 C1466.5 651.0 1465.4 655.0 1464.2 658.9 C1463.0 662.9 1461.7 666.8 1460.3 670.7 C1458.8 674.6 1457.2 678.6 1455.5 682.4 C1453.8 686.3 1451.9 690.2 1450.0 694.0 C1448.0 697.7 1445.9 701.5 1443.8 705.2 C1441.7 708.8 1439.4 712.4 1437.2 716.0 C1434.9 719.6 1432.5 723.1 1430.2 726.6 C1427.8 730.2 1425.4 733.7 1423.0 737.3 C1420.5 740.9 1418.0 744.6 1415.5 748.2 C1413.0 751.8 1410.4 755.4 1407.7 758.8 C1405.1 762.3 1402.3 765.7 1399.5 768.9 C1396.6 772.1 1393.6 775.2 1390.5 778.1 C1387.4 781.0 1384.1 783.7 1380.8 786.4 C1377.5 789.0 1374.0 791.5 1370.5 793.9 C1367.0 796.3 1363.4 798.6 1359.8 800.9 C1356.1 803.1 1352.4 805.2 1348.7 807.3 C1344.9 809.5 1341.1 811.5 1337.2 813.5 C1333.4 815.6 1329.5 817.6 1325.5 819.5 C1321.5 821.4 1317.5 823.3 1313.5 825.2 C1309.4 827.0 1305.3 828.8 1301.2 830.5 C1297.0 832.2 1292.9 833.9 1288.7 835.5 C1284.5 837.1 1280.4 838.6 1276.2 840.0 C1272.0 841.5 1267.7 842.8 1263.5 844.1 C1259.3 845.4 1255.1 846.6 1250.8 847.7 C1246.6 848.9 1242.4 849.9 1238.2 850.9 C1234.1 851.8 1229.9 852.7 1225.8 853.5 C1221.6 854.3 1217.5 855.0 1213.4 855.5 C1209.2 856.0 1205.1 856.4 1200.9 856.7 C1196.7 857.0 1192.5 857.1 1188.4 857.0 C1184.2 857.0 1180.0 856.7 1175.8 856.4 C1171.6 856.1 1167.4 855.6 1163.1 855.1 C1158.9 854.6 1154.7 854.0 1150.4 853.3 C1146.2 852.6 1142.0 851.8 1137.7 850.9 C1133.5 850.1 1129.3 849.2 1125.1 848.1 C1120.9 847.0 1116.7 845.9 1112.6 844.5 C1108.5 843.2 1104.3 841.7 1100.3 840.1 C1096.3 838.4 1092.3 836.6 1088.4 834.7 C1084.5 832.8 1080.7 830.7 1077.0 828.5 C1073.3 826.3 1069.6 823.9 1066.0 821.4 C1062.5 818.9 1059.0 816.3 1055.7 813.5 C1052.3 810.7 1049.1 807.7 1046.0 804.6 C1043.0 801.5 1040.0 798.3 1037.2 794.9 C1034.4 791.6 1031.7 788.1 1029.0 784.5 C1026.4 780.9 1023.9 777.1 1021.4 773.3 C1019.0 769.5 1016.6 765.5 1014.3 761.5 C1011.9 757.5 1009.7 753.5 1007.5 749.4 C1005.3 745.3 1003.1 741.1 1000.9 737.1 C998.6 733.0 996.4 728.9 994.1 724.9 C991.8 721.0 988.9 716.1 987.2 713.2 C985.5 710.3 984.3 708.5 983.7 707.5 L990 670 L1300 600 Z" fill="url(#gBody)"/>
<path d="M1470.0 560.0 C1470.2 562.0 1471.1 567.8 1471.5 571.9 C1471.9 575.9 1472.4 580.1 1472.6 584.3 C1472.9 588.5 1473.1 592.9 1473.1 597.2 C1473.1 601.5 1472.9 605.8 1472.7 610.0 C1472.4 614.2 1472.1 618.4 1471.6 622.6 C1471.1 626.7 1470.5 630.8 1469.8 634.9 C1469.1 639.0 1468.3 643.0 1467.4 647.0 C1466.5 651.0 1465.4 655.0 1464.2 658.9 C1463.0 662.9 1461.7 666.8 1460.3 670.7 C1458.8 674.6 1457.2 678.6 1455.5 682.4 C1453.8 686.3 1451.9 690.2 1450.0 694.0 C1448.0 697.7 1445.9 701.5 1443.8 705.2 C1441.7 708.8 1439.4 712.4 1437.2 716.0 C1434.9 719.6 1432.5 723.1 1430.2 726.6 C1427.8 730.2 1425.4 733.7 1423.0 737.3 C1420.5 740.9 1418.0 744.6 1415.5 748.2 C1413.0 751.8 1410.4 755.4 1407.7 758.8 C1405.1 762.3 1402.3 765.7 1399.5 768.9 C1396.6 772.1 1393.6 775.2 1390.5 778.1 C1387.4 781.0 1384.1 783.7 1380.8 786.4 C1377.5 789.0 1374.0 791.5 1370.5 793.9 C1367.0 796.3 1363.4 798.6 1359.8 800.9 C1356.1 803.1 1352.4 805.2 1348.7 807.3 C1344.9 809.5 1341.1 811.5 1337.2 813.5 C1333.4 815.6 1329.5 817.6 1325.5 819.5 C1321.5 821.4 1317.5 823.3 1313.5 825.2 C1309.4 827.0 1305.3 828.8 1301.2 830.5 C1297.0 832.2 1292.9 833.9 1288.7 835.5 C1284.5 837.1 1280.4 838.6 1276.2 840.0 C1272.0 841.5 1267.7 842.8 1263.5 844.1 C1259.3 845.4 1255.1 846.6 1250.8 847.7 C1246.6 848.9 1242.4 849.9 1238.2 850.9 C1234.1 851.8 1229.9 852.7 1225.8 853.5 C1221.6 854.3 1217.5 855.0 1213.4 855.5 C1209.2 856.0 1205.1 856.4 1200.9 856.7 C1196.7 857.0 1192.5 857.1 1188.4 857.0 C1184.2 857.0 1180.0 856.7 1175.8 856.4 C1171.6 856.1 1167.4 855.6 1163.1 855.1 C1158.9 854.6 1154.7 854.0 1150.4 853.3 C1146.2 852.6 1142.0 851.8 1137.7 850.9 C1133.5 850.1 1129.3 849.2 1125.1 848.1 C1120.9 847.0 1116.7 845.9 1112.6 844.5 C1108.5 843.2 1104.3 841.7 1100.3 840.1 C1096.3 838.4 1092.3 836.6 1088.4 834.7 C1084.5 832.8 1080.7 830.7 1077.0 828.5 C1073.3 826.3 1069.6 823.9 1066.0 821.4 C1062.5 818.9 1059.0 816.3 1055.7 813.5 C1052.3 810.7 1049.1 807.7 1046.0 804.6 C1043.0 801.5 1040.0 798.3 1037.2 794.9 C1034.4 791.6 1031.7 788.1 1029.0 784.5 C1026.4 780.9 1023.9 777.1 1021.4 773.3 C1019.0 769.5 1016.6 765.5 1014.3 761.5 C1011.9 757.5 1009.7 753.5 1007.5 749.4 C1005.3 745.3 1003.1 741.1 1000.9 737.1 C998.6 733.0 996.4 728.9 994.1 724.9 C991.8 721.0 988.9 716.1 987.2 713.2 C985.5 710.3 984.3 708.5 983.7 707.5 L990 670 L1300 600 Z" fill="url(#gBodyL)"/>
<g clip-path="url(#cBody)"><path d="M1465.6 568.1 C1464.0 569.5 1459.3 573.8 1456.1 576.5 C1452.8 579.3 1449.5 581.9 1446.0 584.5 C1442.6 587.1 1439.1 589.6 1435.5 592.0 C1431.9 594.4 1428.2 596.8 1424.4 599.1 C1420.7 601.4 1416.8 603.6 1413.0 605.8 C1409.1 608.1 1405.2 610.2 1401.4 612.4 C1397.6 614.6 1393.8 616.8 1390.1 618.9 C1386.3 621.1 1382.6 623.3 1378.8 625.4 C1375.0 627.6 1371.3 629.8 1367.5 631.8 C1363.7 633.9 1359.8 636.0 1355.9 638.0 C1352.0 639.9 1348.1 641.8 1344.1 643.6 C1340.1 645.4 1336.0 647.0 1331.9 648.6 C1327.8 650.1 1323.7 651.6 1319.5 653.0 C1315.4 654.4 1311.2 655.6 1307.1 656.9 C1302.9 658.2 1298.8 659.4 1294.6 660.6 C1290.4 661.8 1286.2 663.0 1282.0 664.1 C1277.8 665.3 1273.6 666.4 1269.4 667.5 C1265.2 668.6 1260.9 669.7 1256.8 670.7 C1252.6 671.7 1248.5 672.7 1244.4 673.6 C1240.2 674.6 1236.2 675.5 1232.0 676.3 C1227.9 677.1 1223.8 677.9 1219.6 678.7 C1215.4 679.4 1211.2 680.1 1206.9 680.7 C1202.7 681.3 1198.4 681.8 1194.1 682.3 C1189.8 682.7 1185.5 683.1 1181.2 683.5 C1176.8 683.8 1172.5 684.1 1168.1 684.4 C1163.7 684.6 1159.3 684.9 1154.9 685.1 C1150.5 685.3 1146.1 685.5 1141.8 685.7 C1137.4 685.8 1133.1 686.0 1128.9 686.1 C1124.6 686.3 1120.4 686.4 1116.2 686.5 C1112.0 686.6 1107.8 686.7 1103.6 686.8 C1099.5 686.8 1095.3 686.9 1091.2 686.9 C1087.0 686.9 1082.8 686.9 1078.6 686.9 C1074.5 686.9 1070.2 686.9 1066.0 686.8 C1061.8 686.8 1057.6 686.7 1053.3 686.6 C1049.1 686.5 1044.9 686.4 1040.7 686.3 C1036.4 686.1 1032.3 686.0 1028.1 685.8 C1023.9 685.6 1017.7 685.3 1015.6 685.2" stroke="#5c5f66" stroke-width="50" fill="none" opacity="0.450" filter="url(#blur8)" transform="translate(0 22)"/></g>
<path d="M536.0 652.5 C540.8 651.1 551.8 646.1 565.0 644.0 C578.2 641.9 598.3 640.7 615.0 640.0 C631.7 639.3 644.2 639.0 665.0 640.0 C685.8 641.0 717.1 643.5 740.0 646.0 C762.9 648.5 782.5 652.2 802.5 655.0 C822.5 657.8 842.1 660.1 860.0 663.0 C877.9 665.9 893.3 669.7 910.0 672.5 C926.7 675.3 946.3 678.2 960.0 680.0 C973.7 681.8 986.7 682.9 992.0 683.5 L983.7 707.5 C981.7 706.9 975.7 705.1 971.6 704.0 C967.4 702.9 962.9 701.7 958.6 700.7 C954.2 699.7 949.8 698.7 945.4 697.9 C941.1 697.1 936.8 696.4 932.6 695.7 C928.5 695.0 924.3 694.4 920.3 693.8 C916.3 693.3 912.4 692.8 908.5 692.2 C904.5 691.7 900.6 691.3 896.5 690.8 C892.4 690.3 888.2 689.8 884.0 689.3 C879.7 688.7 875.2 688.2 870.8 687.7 C866.3 687.1 861.8 686.6 857.3 686.0 C852.8 685.5 848.4 684.9 843.9 684.3 C839.4 683.7 834.8 683.1 830.3 682.4 C825.8 681.7 821.2 680.9 816.8 680.2 C812.4 679.4 808.3 678.6 804.0 677.8 C799.7 677.0 795.6 676.2 791.3 675.3 C787.0 674.4 782.6 673.6 778.2 672.7 C773.9 671.8 769.5 670.9 765.2 670.0 C761.0 669.1 756.8 668.3 752.5 667.4 C748.3 666.5 744.2 665.7 740.0 664.8 C735.8 664.0 731.7 663.2 727.5 662.4 C723.3 661.6 719.1 660.8 714.9 660.1 C710.7 659.4 706.4 658.7 702.1 658.1 C697.9 657.5 693.6 656.9 689.4 656.3 C685.2 655.8 681.0 655.3 676.8 654.9 C672.6 654.5 668.5 654.2 664.3 654.0 C660.1 653.8 655.8 653.7 651.7 653.7 C647.5 653.7 643.3 653.9 639.2 654.2 C635.0 654.6 630.9 655.1 626.7 655.9 C622.6 656.6 618.3 657.6 614.3 658.7 C610.3 659.7 605.6 661.2 602.8 662.0 C600.0 662.8 598.4 663.4 597.5 663.7 Z" fill="#6f727a"/>
<path d="M556.0 863.7 C555.1 862.5 552.3 859.3 550.5 856.5 C548.7 853.7 546.8 850.4 545.2 846.8 C543.6 843.3 542.0 839.2 540.7 835.3 C539.4 831.3 538.3 827.2 537.4 823.2 C536.4 819.1 535.6 815.0 534.8 810.9 C534.0 806.8 533.3 802.7 532.7 798.6 C532.0 794.4 531.4 790.3 530.9 786.1 C530.5 781.8 530.1 777.5 530.0 773.1 C529.8 768.7 529.8 764.2 530.0 759.6 C530.2 755.1 530.7 750.4 531.3 746.0 C531.9 741.6 532.7 737.0 533.5 733.0 C534.4 729.0 535.3 725.3 536.5 721.7 C537.7 718.2 539.0 715.2 540.7 711.8 C542.4 708.4 544.3 704.9 546.7 701.3 C549.1 697.7 551.8 693.8 554.9 690.3 C558.0 686.7 561.4 683.3 565.2 680.3 C569.0 677.2 573.4 674.5 577.7 672.2 C582.0 669.8 587.7 667.6 591.0 666.2 C594.3 664.8 596.4 664.1 597.5 663.7 L588.0 667.0 C587.6 668.6 586.2 673.1 585.8 676.6 C585.5 680.2 585.7 684.2 586.0 688.4 C586.3 692.5 587.1 697.1 587.6 701.4 C588.1 705.8 588.6 710.0 588.9 714.3 C589.2 718.6 589.5 722.7 589.6 727.0 C589.7 731.3 589.8 735.6 589.7 740.0 C589.6 744.3 589.4 748.7 589.0 753.1 C588.7 757.5 588.2 761.9 587.7 766.4 C587.2 770.8 586.6 775.3 585.9 779.7 C585.2 784.1 584.5 788.5 583.7 792.9 C583.0 797.2 582.1 801.6 581.3 805.8 C580.4 810.1 579.6 814.2 578.6 818.3 C577.6 822.5 576.7 826.6 575.5 830.6 C574.3 834.6 573.0 838.6 571.3 842.4 C569.6 846.2 567.5 850.0 565.3 853.6 C563.1 857.2 559.2 862.3 558.0 864.0 Z" fill="#6a6d75"/>
<path d="M588.0 667.0 C587.6 668.6 586.2 673.1 585.8 676.6 C585.5 680.2 585.7 684.2 586.0 688.4 C586.3 692.5 587.1 697.1 587.6 701.4 C588.1 705.8 588.6 710.0 588.9 714.3 C589.2 718.6 589.5 722.7 589.6 727.0 C589.7 731.3 589.8 735.6 589.7 740.0 C589.6 744.3 589.4 748.7 589.0 753.1 C588.7 757.5 588.2 761.9 587.7 766.4 C587.2 770.8 586.6 775.3 585.9 779.7 C585.2 784.1 584.5 788.5 583.7 792.9 C583.0 797.2 582.1 801.6 581.3 805.8 C580.4 810.1 579.6 814.2 578.6 818.3 C577.6 822.5 576.7 826.6 575.5 830.6 C574.3 834.6 573.0 838.6 571.3 842.4 C569.6 846.2 567.5 850.0 565.3 853.6 C563.1 857.2 559.2 862.3 558.0 864.0" stroke="#a868a8" stroke-width="3" fill="none" opacity="0.700"/>
<path d="M536.0 652.5 C534.3 653.5 529.4 656.2 525.8 658.3 C522.2 660.4 518.2 662.7 514.4 665.1 C510.5 667.6 506.5 670.2 502.9 672.9 C499.3 675.6 495.8 678.4 492.7 681.4 C489.6 684.4 486.7 687.4 484.2 690.8 C481.7 694.1 479.4 697.7 477.6 701.4 C475.7 705.2 474.3 709.3 473.2 713.5 C472.0 717.6 471.3 721.9 470.8 726.2 C470.3 730.5 470.1 734.9 470.0 739.3 C469.9 743.7 470.1 748.1 470.3 752.6 C470.5 757.0 470.9 761.6 471.4 766.0 C471.8 770.4 472.3 774.7 473.0 778.9 C473.6 783.2 474.2 787.2 475.0 791.3 C475.8 795.4 476.6 799.4 477.6 803.4 C478.5 807.5 479.5 811.6 480.6 815.8 C481.7 819.9 482.9 824.2 484.2 828.5 C485.5 832.8 486.9 837.2 488.4 841.4 C489.9 845.6 491.4 849.8 493.1 853.8 C494.9 857.8 496.8 861.7 498.9 865.4 C501.1 869.1 504.8 874.2 506.0 876.0 C509.6 875.2 519.2 873.0 527.5 871.0 C535.8 869.0 551.2 864.9 556.0 863.7 C555.1 862.5 552.3 859.3 550.5 856.5 C548.7 853.7 546.8 850.4 545.2 846.8 C543.6 843.3 542.0 839.2 540.7 835.3 C539.4 831.3 538.3 827.2 537.4 823.2 C536.4 819.1 535.6 815.0 534.8 810.9 C534.0 806.8 533.3 802.7 532.7 798.6 C532.0 794.4 531.4 790.3 530.9 786.1 C530.5 781.8 530.1 777.5 530.0 773.1 C529.8 768.7 529.8 764.2 530.0 759.6 C530.2 755.1 530.7 750.4 531.3 746.0 C531.9 741.6 532.7 737.0 533.5 733.0 C534.4 729.0 535.3 725.3 536.5 721.7 C537.7 718.2 539.0 715.2 540.7 711.8 C542.4 708.4 544.3 704.9 546.7 701.3 C549.1 697.7 551.8 693.8 554.9 690.3 C558.0 686.7 561.4 683.3 565.2 680.3 C569.0 677.2 573.4 674.5 577.7 672.2 C582.0 669.8 587.7 667.6 591.0 666.2 C594.3 664.8 596.4 664.1 597.5 663.7Z" fill="url(#gHand)"/>
<path d="M471.0 716.0 C471.1 713.9 471.5 707.7 471.8 703.5 C472.0 699.4 472.3 695.1 472.6 690.9 C473.0 686.7 473.3 682.5 473.7 678.3 C474.1 674.1 474.5 669.9 474.9 665.6 C475.4 661.4 475.8 657.2 476.3 652.9 C476.9 648.6 477.4 644.2 478.1 639.9 C478.8 635.7 479.5 631.3 480.5 627.2 C481.4 623.0 482.5 618.9 483.7 614.9 C484.9 610.9 486.4 607.0 487.8 603.1 C489.3 599.2 490.9 595.4 492.4 591.5 C494.0 587.6 495.6 583.7 497.2 579.6 C498.8 575.6 500.3 571.5 501.9 567.3 C503.4 563.1 504.9 558.9 506.4 554.6 C507.9 550.4 509.4 546.1 510.9 541.8 C512.5 537.5 514.0 533.2 515.6 528.9 C517.2 524.6 518.8 520.3 520.5 516.1 C522.2 511.9 523.9 507.6 525.8 503.5 C527.6 499.4 529.5 495.4 531.6 491.5 C533.6 487.6 535.7 483.8 538.0 480.0 C540.2 476.3 542.6 472.7 545.0 469.2 C547.4 465.7 550.0 462.3 552.5 458.9 C555.1 455.6 557.7 452.4 560.4 449.2 C563.1 445.9 565.8 442.8 568.6 439.6 C571.4 436.5 574.2 433.4 577.1 430.3 C580.0 427.2 582.9 424.1 585.9 421.1 C588.9 418.1 591.9 415.1 595.0 412.2 C598.1 409.2 601.3 406.4 604.4 403.6 C607.6 400.8 610.8 398.0 614.1 395.3 C617.4 392.6 620.8 389.9 624.2 387.2 C627.6 384.6 631.1 381.9 634.6 379.3 C638.1 376.7 641.7 374.1 645.3 371.6 C648.9 369.1 652.6 366.6 656.2 364.1 C659.9 361.6 663.6 359.2 667.3 356.8 C671.1 354.4 674.8 352.0 678.5 349.7 C682.2 347.4 685.9 345.1 689.6 342.9 C693.2 340.7 696.8 338.6 700.4 336.5 C704.0 334.4 707.5 332.3 711.2 330.3 C714.8 328.3 718.4 326.3 722.2 324.3 C725.9 322.4 729.7 320.4 733.5 318.5 C737.3 316.6 741.2 314.7 745.0 312.9 C748.9 311.1 752.8 309.3 756.7 307.5 C760.7 305.7 764.7 304.0 768.7 302.2 C772.7 300.5 776.8 298.7 780.8 297.0 C784.8 295.3 788.8 293.6 792.8 291.9 C796.7 290.2 800.6 288.6 804.5 286.9 C808.4 285.2 812.2 283.6 816.1 281.9 C819.9 280.3 823.7 278.6 827.5 277.0 C831.3 275.4 835.0 273.8 838.6 272.2 C842.3 270.7 845.9 269.2 849.5 267.8 C853.1 266.4 856.6 265.1 860.3 263.8 C863.9 262.5 867.5 261.3 871.3 260.1 C875.0 258.9 878.8 257.8 882.7 256.7 C886.5 255.5 890.5 254.5 894.5 253.5 C898.4 252.4 902.4 251.5 906.3 250.5 C910.2 249.6 914.1 248.7 917.9 247.8 C921.7 247.0 925.4 246.2 929.2 245.3 C933.1 244.5 936.9 243.7 940.8 242.9 C944.7 242.1 948.8 241.3 952.9 240.6 C956.9 239.8 961.1 239.0 965.3 238.3 C969.5 237.6 973.7 236.9 977.9 236.3 C982.0 235.6 986.1 235.0 990.2 234.4 C994.3 233.9 998.3 233.3 1002.4 232.8 C1006.4 232.3 1010.4 231.9 1014.5 231.4 C1018.6 230.9 1022.7 230.5 1026.9 230.1 C1031.0 229.6 1035.3 229.2 1039.5 228.8 C1043.8 228.4 1048.1 228.0 1052.4 227.6 C1056.6 227.3 1061.0 226.9 1065.3 226.5 C1069.6 226.2 1073.9 225.9 1078.1 225.6 C1082.4 225.3 1086.6 225.0 1090.9 224.7 C1095.1 224.4 1099.3 224.1 1103.5 223.9 C1107.8 223.6 1112.0 223.4 1116.3 223.2 C1120.5 222.9 1124.8 222.7 1129.1 222.5 C1133.4 222.3 1137.7 222.1 1142.0 221.9 C1146.3 221.7 1150.5 221.6 1154.6 221.4 C1158.8 221.3 1162.9 221.2 1166.9 221.0 C1171.0 220.9 1174.9 220.9 1178.9 220.8 C1182.9 220.7 1186.9 220.7 1191.0 220.7 C1195.1 220.7 1199.3 220.7 1203.5 220.8 C1207.8 220.9 1212.1 221.0 1216.4 221.2 C1220.6 221.4 1224.8 221.6 1228.9 221.9 C1233.0 222.2 1237.1 222.6 1241.2 223.0 C1245.2 223.4 1249.3 223.8 1253.4 224.3 C1257.5 224.8 1261.6 225.3 1265.7 225.8 C1269.8 226.3 1274.0 226.9 1278.2 227.4 C1282.3 228.0 1286.5 228.6 1290.7 229.2 C1295.0 229.9 1299.2 230.5 1303.4 231.3 C1307.6 232.0 1311.9 232.7 1316.0 233.5 C1320.2 234.4 1324.3 235.2 1328.4 236.2 C1332.6 237.1 1336.7 238.2 1340.8 239.3 C1344.9 240.5 1349.1 241.8 1353.2 243.1 C1357.3 244.5 1361.4 246.0 1365.4 247.5 C1369.4 249.1 1373.4 250.7 1377.3 252.3 C1381.2 254.0 1385.1 255.7 1388.9 257.5 C1392.7 259.2 1396.6 261.0 1400.4 262.9 C1404.2 264.8 1408.1 266.7 1411.9 268.6 C1415.7 270.6 1419.5 272.6 1423.2 274.6 C1427.0 276.7 1430.6 278.7 1434.3 280.9 C1438.0 283.0 1441.6 285.2 1445.2 287.4 C1448.9 289.7 1452.5 292.0 1456.2 294.4 C1459.8 296.9 1463.5 299.4 1467.0 301.9 C1470.5 304.5 1474.0 307.1 1477.4 309.9 C1480.7 312.6 1484.0 315.4 1487.2 318.2 C1490.3 321.1 1493.3 324.1 1496.2 327.1 C1499.1 330.2 1501.8 333.3 1504.5 336.6 C1507.1 339.9 1509.6 343.2 1511.9 346.7 C1514.3 350.2 1516.5 353.8 1518.6 357.5 C1520.6 361.2 1522.6 365.0 1524.3 368.9 C1526.0 372.8 1527.6 376.9 1528.9 381.0 C1530.3 385.1 1531.4 389.3 1532.3 393.5 C1533.2 397.8 1534.0 402.1 1534.5 406.5 C1535.0 410.9 1535.4 415.4 1535.6 419.8 C1535.7 424.3 1535.8 428.8 1535.6 433.3 C1535.5 437.8 1535.2 442.3 1534.7 446.7 C1534.2 451.1 1533.5 455.5 1532.6 459.7 C1531.7 464.0 1530.6 468.1 1529.3 472.1 C1528.0 476.1 1526.5 480.0 1524.8 483.9 C1523.2 487.7 1521.4 491.4 1519.5 495.2 C1517.6 498.9 1515.6 502.7 1513.4 506.4 C1511.3 510.1 1509.1 513.8 1506.7 517.5 C1504.4 521.2 1501.9 525.0 1499.3 528.6 C1496.8 532.2 1494.1 535.9 1491.4 539.4 C1488.7 542.9 1486.0 546.3 1483.2 549.6 C1480.4 552.9 1477.6 556.1 1474.6 559.2 C1471.7 562.3 1468.7 565.3 1465.6 568.1 C1462.5 571.0 1459.3 573.8 1456.1 576.5 C1452.8 579.3 1449.5 581.9 1446.0 584.5 C1442.6 587.1 1439.1 589.6 1435.5 592.0 C1431.9 594.4 1428.2 596.8 1424.4 599.1 C1420.7 601.4 1416.8 603.6 1413.0 605.8 C1409.1 608.1 1405.2 610.2 1401.4 612.4 C1397.6 614.6 1393.8 616.8 1390.1 618.9 C1386.3 621.1 1382.6 623.3 1378.8 625.4 C1375.0 627.6 1371.3 629.8 1367.5 631.8 C1363.7 633.9 1359.8 636.0 1355.9 638.0 C1352.0 639.9 1348.1 641.8 1344.1 643.6 C1340.1 645.4 1336.0 647.0 1331.9 648.6 C1327.8 650.1 1323.7 651.6 1319.5 653.0 C1315.4 654.4 1311.2 655.6 1307.1 656.9 C1302.9 658.2 1298.8 659.4 1294.6 660.6 C1290.4 661.8 1286.2 663.0 1282.0 664.1 C1277.8 665.3 1273.6 666.4 1269.4 667.5 C1265.2 668.6 1260.9 669.7 1256.8 670.7 C1252.6 671.7 1248.5 672.7 1244.4 673.6 C1240.2 674.6 1236.2 675.5 1232.0 676.3 C1227.9 677.1 1223.8 677.9 1219.6 678.7 C1215.4 679.4 1211.2 680.1 1206.9 680.7 C1202.7 681.3 1198.4 681.8 1194.1 682.3 C1189.8 682.7 1185.5 683.1 1181.2 683.5 C1176.8 683.8 1172.5 684.1 1168.1 684.4 C1163.7 684.6 1159.3 684.9 1154.9 685.1 C1150.5 685.3 1146.1 685.5 1141.8 685.7 C1137.4 685.8 1133.1 686.0 1128.9 686.1 C1124.6 686.3 1120.4 686.4 1116.2 686.5 C1112.0 686.6 1107.8 686.7 1103.6 686.8 C1099.5 686.8 1095.3 686.9 1091.2 686.9 C1087.0 686.9 1082.8 686.9 1078.6 686.9 C1074.5 686.9 1070.2 686.9 1066.0 686.8 C1061.8 686.8 1057.6 686.7 1053.3 686.6 C1049.1 686.5 1044.9 686.4 1040.7 686.3 C1036.4 686.1 1032.3 686.0 1028.1 685.8 C1023.9 685.6 1019.8 685.4 1015.6 685.2 C1011.5 684.9 1007.3 684.6 1003.1 684.3 C999.0 684.0 994.8 683.7 990.7 683.3 C986.5 682.9 982.4 682.5 978.3 682.0 C974.2 681.6 970.1 681.1 966.0 680.6 C961.9 680.1 957.8 679.6 953.7 679.1 C949.5 678.5 945.4 677.9 941.2 677.3 C937.1 676.7 932.9 676.1 928.8 675.4 C924.6 674.8 920.5 674.1 916.3 673.4 C912.2 672.7 908.0 672.0 903.9 671.2 C899.8 670.5 895.7 669.7 891.5 668.9 C887.4 668.2 883.2 667.4 879.1 666.6 C874.9 665.8 870.8 665.1 866.6 664.3 C862.4 663.6 858.2 662.9 854.0 662.3 C849.8 661.6 845.6 661.0 841.4 660.3 C837.1 659.7 832.9 659.1 828.6 658.5 C824.4 658.0 820.1 657.4 815.8 656.8 C811.6 656.2 807.3 655.6 803.1 655.0 C798.9 654.4 794.8 653.8 790.6 653.2 C786.5 652.6 782.4 651.9 778.3 651.3 C774.1 650.7 770.0 650.1 765.8 649.5 C761.7 648.9 757.4 648.3 753.2 647.8 C749.0 647.2 744.7 646.7 740.5 646.2 C736.2 645.7 731.9 645.3 727.7 644.9 C723.4 644.4 719.1 644.0 714.8 643.6 C710.5 643.3 706.2 642.9 701.9 642.5 C697.6 642.2 693.3 641.9 689.0 641.6 C684.8 641.3 680.6 641.0 676.4 640.8 C672.2 640.5 668.1 640.3 663.9 640.2 C659.7 640.0 655.5 639.8 651.3 639.8 C647.2 639.7 643.0 639.6 638.9 639.6 C634.8 639.6 630.8 639.7 626.7 639.8 C622.6 639.9 618.5 640.0 614.4 640.2 C610.2 640.4 606.0 640.6 601.8 640.8 C597.6 641.1 593.3 641.4 589.1 641.8 C584.8 642.1 580.6 642.6 576.4 643.1 C572.3 643.7 568.1 644.3 564.1 645.1 C560.0 645.9 556.0 646.8 552.2 647.8 C548.4 648.8 543.9 650.1 541.2 650.9 C538.5 651.7 536.9 652.2 536.0 652.5 C534.3 653.4 529.7 656.0 526.1 658.1 C522.5 660.2 518.2 662.6 514.3 665.0 C510.4 667.5 506.4 670.1 502.7 672.9 C499.1 675.6 495.7 678.4 492.5 681.5 C489.3 684.5 486.5 687.5 483.8 691.1 C481.1 694.7 478.7 698.9 476.5 703.0 C474.4 707.2 471.9 713.8 471.0 716.0Z" fill="url(#gRim)"/>
<path d="M471.0 716.0 C471.1 713.9 471.5 707.7 471.8 703.5 C472.0 699.4 472.3 695.1 472.6 690.9 C473.0 686.7 473.3 682.5 473.7 678.3 C474.1 674.1 474.5 669.9 474.9 665.6 C475.4 661.4 475.8 657.2 476.3 652.9 C476.9 648.6 477.4 644.2 478.1 639.9 C478.8 635.7 479.5 631.3 480.5 627.2 C481.4 623.0 482.5 618.9 483.7 614.9 C484.9 610.9 486.4 607.0 487.8 603.1 C489.3 599.2 490.9 595.4 492.4 591.5 C494.0 587.6 495.6 583.7 497.2 579.6 C498.8 575.6 500.3 571.5 501.9 567.3 C503.4 563.1 504.9 558.9 506.4 554.6 C507.9 550.4 509.4 546.1 510.9 541.8 C512.5 537.5 514.0 533.2 515.6 528.9 C517.2 524.6 518.8 520.3 520.5 516.1 C522.2 511.9 523.9 507.6 525.8 503.5 C527.6 499.4 529.5 495.4 531.6 491.5 C533.6 487.6 535.7 483.8 538.0 480.0 C540.2 476.3 542.6 472.7 545.0 469.2 C547.4 465.7 550.0 462.3 552.5 458.9 C555.1 455.6 557.7 452.4 560.4 449.2 C563.1 445.9 565.8 442.8 568.6 439.6 C571.4 436.5 574.2 433.4 577.1 430.3 C580.0 427.2 582.9 424.1 585.9 421.1 C588.9 418.1 591.9 415.1 595.0 412.2 C598.1 409.2 601.3 406.4 604.4 403.6 C607.6 400.8 610.8 398.0 614.1 395.3 C617.4 392.6 620.8 389.9 624.2 387.2 C627.6 384.6 631.1 381.9 634.6 379.3 C638.1 376.7 641.7 374.1 645.3 371.6 C648.9 369.1 652.6 366.6 656.2 364.1 C659.9 361.6 663.6 359.2 667.3 356.8 C671.1 354.4 674.8 352.0 678.5 349.7 C682.2 347.4 685.9 345.1 689.6 342.9 C693.2 340.7 696.8 338.6 700.4 336.5 C704.0 334.4 707.5 332.3 711.2 330.3 C714.8 328.3 718.4 326.3 722.2 324.3 C725.9 322.4 729.7 320.4 733.5 318.5 C737.3 316.6 741.2 314.7 745.0 312.9 C748.9 311.1 752.8 309.3 756.7 307.5 C760.7 305.7 764.7 304.0 768.7 302.2 C772.7 300.5 776.8 298.7 780.8 297.0 C784.8 295.3 788.8 293.6 792.8 291.9 C796.7 290.2 800.6 288.6 804.5 286.9 C808.4 285.2 812.2 283.6 816.1 281.9 C819.9 280.3 823.7 278.6 827.5 277.0 C831.3 275.4 835.0 273.8 838.6 272.2 C842.3 270.7 845.9 269.2 849.5 267.8 C853.1 266.4 856.6 265.1 860.3 263.8 C863.9 262.5 867.5 261.3 871.3 260.1 C875.0 258.9 878.8 257.8 882.7 256.7 C886.5 255.5 890.5 254.5 894.5 253.5 C898.4 252.4 902.4 251.5 906.3 250.5 C910.2 249.6 914.1 248.7 917.9 247.8 C921.7 247.0 925.4 246.2 929.2 245.3 C933.1 244.5 936.9 243.7 940.8 242.9 C944.7 242.1 948.8 241.3 952.9 240.6 C956.9 239.8 961.1 239.0 965.3 238.3 C969.5 237.6 973.7 236.9 977.9 236.3 C982.0 235.6 986.1 235.0 990.2 234.4 C994.3 233.9 998.3 233.3 1002.4 232.8 C1006.4 232.3 1010.4 231.9 1014.5 231.4 C1018.6 230.9 1022.7 230.5 1026.9 230.1 C1031.0 229.6 1035.3 229.2 1039.5 228.8 C1043.8 228.4 1048.1 228.0 1052.4 227.6 C1056.6 227.3 1061.0 226.9 1065.3 226.5 C1069.6 226.2 1073.9 225.9 1078.1 225.6 C1082.4 225.3 1086.6 225.0 1090.9 224.7 C1095.1 224.4 1099.3 224.1 1103.5 223.9 C1107.8 223.6 1112.0 223.4 1116.3 223.2 C1120.5 222.9 1124.8 222.7 1129.1 222.5 C1133.4 222.3 1137.7 222.1 1142.0 221.9 C1146.3 221.7 1150.5 221.6 1154.6 221.4 C1158.8 221.3 1162.9 221.2 1166.9 221.0 C1171.0 220.9 1174.9 220.9 1178.9 220.8 C1182.9 220.7 1186.9 220.7 1191.0 220.7 C1195.1 220.7 1199.3 220.7 1203.5 220.8 C1207.8 220.9 1212.1 221.0 1216.4 221.2 C1220.6 221.4 1224.8 221.6 1228.9 221.9 C1233.0 222.2 1237.1 222.6 1241.2 223.0 C1245.2 223.4 1249.3 223.8 1253.4 224.3 C1257.5 224.8 1261.6 225.3 1265.7 225.8 C1269.8 226.3 1274.0 226.9 1278.2 227.4 C1282.3 228.0 1286.5 228.6 1290.7 229.2 C1295.0 229.9 1299.2 230.5 1303.4 231.3 C1307.6 232.0 1311.9 232.7 1316.0 233.5 C1320.2 234.4 1324.3 235.2 1328.4 236.2 C1332.6 237.1 1336.7 238.2 1340.8 239.3 C1344.9 240.5 1349.1 241.8 1353.2 243.1 C1357.3 244.5 1361.4 246.0 1365.4 247.5 C1369.4 249.1 1373.4 250.7 1377.3 252.3 C1381.2 254.0 1385.1 255.7 1388.9 257.5 C1392.7 259.2 1396.6 261.0 1400.4 262.9 C1404.2 264.8 1408.1 266.7 1411.9 268.6 C1415.7 270.6 1419.5 272.6 1423.2 274.6 C1427.0 276.7 1430.6 278.7 1434.3 280.9 C1438.0 283.0 1441.6 285.2 1445.2 287.4 C1448.9 289.7 1452.5 292.0 1456.2 294.4 C1459.8 296.9 1463.5 299.4 1467.0 301.9 C1470.5 304.5 1474.0 307.1 1477.4 309.9 C1480.7 312.6 1484.0 315.4 1487.2 318.2 C1490.3 321.1 1493.3 324.1 1496.2 327.1 C1499.1 330.2 1501.8 333.3 1504.5 336.6 C1507.1 339.9 1509.6 343.2 1511.9 346.7 C1514.3 350.2 1516.5 353.8 1518.6 357.5 C1520.6 361.2 1522.6 365.0 1524.3 368.9 C1526.0 372.8 1527.6 376.9 1528.9 381.0 C1530.3 385.1 1531.4 389.3 1532.3 393.5 C1533.2 397.8 1534.0 402.1 1534.5 406.5 C1535.0 410.9 1535.4 415.4 1535.6 419.8 C1535.7 424.3 1535.8 428.8 1535.6 433.3 C1535.5 437.8 1535.2 442.3 1534.7 446.7 C1534.2 451.1 1533.5 455.5 1532.6 459.7 C1531.7 464.0 1530.6 468.1 1529.3 472.1 C1528.0 476.1 1526.5 480.0 1524.8 483.9 C1523.2 487.7 1521.4 491.4 1519.5 495.2 C1517.6 498.9 1515.6 502.7 1513.4 506.4 C1511.3 510.1 1509.1 513.8 1506.7 517.5 C1504.4 521.2 1501.9 525.0 1499.3 528.6 C1496.8 532.2 1494.1 535.9 1491.4 539.4 C1488.7 542.9 1486.0 546.3 1483.2 549.6 C1480.4 552.9 1477.6 556.1 1474.6 559.2 C1471.7 562.3 1468.7 565.3 1465.6 568.1 C1462.5 571.0 1459.3 573.8 1456.1 576.5 C1452.8 579.3 1449.5 581.9 1446.0 584.5 C1442.6 587.1 1439.1 589.6 1435.5 592.0 C1431.9 594.4 1428.2 596.8 1424.4 599.1 C1420.7 601.4 1416.8 603.6 1413.0 605.8 C1409.1 608.1 1405.2 610.2 1401.4 612.4 C1397.6 614.6 1393.8 616.8 1390.1 618.9 C1386.3 621.1 1382.6 623.3 1378.8 625.4 C1375.0 627.6 1371.3 629.8 1367.5 631.8 C1363.7 633.9 1359.8 636.0 1355.9 638.0 C1352.0 639.9 1348.1 641.8 1344.1 643.6 C1340.1 645.4 1336.0 647.0 1331.9 648.6 C1327.8 650.1 1323.7 651.6 1319.5 653.0 C1315.4 654.4 1311.2 655.6 1307.1 656.9 C1302.9 658.2 1298.8 659.4 1294.6 660.6 C1290.4 661.8 1286.2 663.0 1282.0 664.1 C1277.8 665.3 1273.6 666.4 1269.4 667.5 C1265.2 668.6 1260.9 669.7 1256.8 670.7 C1252.6 671.7 1248.5 672.7 1244.4 673.6 C1240.2 674.6 1236.2 675.5 1232.0 676.3 C1227.9 677.1 1223.8 677.9 1219.6 678.7 C1215.4 679.4 1211.2 680.1 1206.9 680.7 C1202.7 681.3 1198.4 681.8 1194.1 682.3 C1189.8 682.7 1185.5 683.1 1181.2 683.5 C1176.8 683.8 1172.5 684.1 1168.1 684.4 C1163.7 684.6 1159.3 684.9 1154.9 685.1 C1150.5 685.3 1146.1 685.5 1141.8 685.7 C1137.4 685.8 1133.1 686.0 1128.9 686.1 C1124.6 686.3 1120.4 686.4 1116.2 686.5 C1112.0 686.6 1107.8 686.7 1103.6 686.8 C1099.5 686.8 1095.3 686.9 1091.2 686.9 C1087.0 686.9 1082.8 686.9 1078.6 686.9 C1074.5 686.9 1070.2 686.9 1066.0 686.8 C1061.8 686.8 1057.6 686.7 1053.3 686.6 C1049.1 686.5 1044.9 686.4 1040.7 686.3 C1036.4 686.1 1032.3 686.0 1028.1 685.8 C1023.9 685.6 1019.8 685.4 1015.6 685.2 C1011.5 684.9 1007.3 684.6 1003.1 684.3 C999.0 684.0 994.8 683.7 990.7 683.3 C986.5 682.9 982.4 682.5 978.3 682.0 C974.2 681.6 970.1 681.1 966.0 680.6 C961.9 680.1 957.8 679.6 953.7 679.1 C949.5 678.5 945.4 677.9 941.2 677.3 C937.1 676.7 932.9 676.1 928.8 675.4 C924.6 674.8 920.5 674.1 916.3 673.4 C912.2 672.7 908.0 672.0 903.9 671.2 C899.8 670.5 895.7 669.7 891.5 668.9 C887.4 668.2 883.2 667.4 879.1 666.6 C874.9 665.8 870.8 665.1 866.6 664.3 C862.4 663.6 858.2 662.9 854.0 662.3 C849.8 661.6 845.6 661.0 841.4 660.3 C837.1 659.7 832.9 659.1 828.6 658.5 C824.4 658.0 820.1 657.4 815.8 656.8 C811.6 656.2 807.3 655.6 803.1 655.0 C798.9 654.4 794.8 653.8 790.6 653.2 C786.5 652.6 782.4 651.9 778.3 651.3 C774.1 650.7 770.0 650.1 765.8 649.5 C761.7 648.9 757.4 648.3 753.2 647.8 C749.0 647.2 744.7 646.7 740.5 646.2 C736.2 645.7 731.9 645.3 727.7 644.9 C723.4 644.4 719.1 644.0 714.8 643.6 C710.5 643.3 706.2 642.9 701.9 642.5 C697.6 642.2 693.3 641.9 689.0 641.6 C684.8 641.3 680.6 641.0 676.4 640.8 C672.2 640.5 668.1 640.3 663.9 640.2 C659.7 640.0 655.5 639.8 651.3 639.8 C647.2 639.7 643.0 639.6 638.9 639.6 C634.8 639.6 630.8 639.7 626.7 639.8 C622.6 639.9 618.5 640.0 614.4 640.2 C610.2 640.4 606.0 640.6 601.8 640.8 C597.6 641.1 593.3 641.4 589.1 641.8 C584.8 642.1 580.6 642.6 576.4 643.1 C572.3 643.7 568.1 644.3 564.1 645.1 C560.0 645.9 556.0 646.8 552.2 647.8 C548.4 648.8 543.9 650.1 541.2 650.9 C538.5 651.7 536.9 652.2 536.0 652.5 C534.3 653.4 529.7 656.0 526.1 658.1 C522.5 660.2 518.2 662.6 514.3 665.0 C510.4 667.5 506.4 670.1 502.7 672.9 C499.1 675.6 495.7 678.4 492.5 681.5 C489.3 684.5 486.5 687.5 483.8 691.1 C481.1 694.7 478.7 698.9 476.5 703.0 C474.4 707.2 471.9 713.8 471.0 716.0Z" fill="url(#gBand)"/>
<g clip-path="url(#cRim)"><path d="M471.0 716.0 C471.1 713.9 471.5 707.7 471.8 703.5 C472.0 699.4 472.3 695.1 472.6 690.9 C473.0 686.7 473.3 682.5 473.7 678.3 C474.1 674.1 474.5 669.9 474.9 665.6 C475.4 661.4 475.8 657.2 476.3 652.9 C476.9 648.6 477.4 644.2 478.1 639.9 C478.8 635.7 479.5 631.3 480.5 627.2 C481.4 623.0 482.5 618.9 483.7 614.9 C484.9 610.9 486.4 607.0 487.8 603.1 C489.3 599.2 490.9 595.4 492.4 591.5 C494.0 587.6 495.6 583.7 497.2 579.6 C498.8 575.6 500.3 571.5 501.9 567.3 C503.4 563.1 504.9 558.9 506.4 554.6 C507.9 550.4 509.4 546.1 510.9 541.8 C512.5 537.5 514.0 533.2 515.6 528.9 C517.2 524.6 518.8 520.3 520.5 516.1 C522.2 511.9 523.9 507.6 525.8 503.5 C527.6 499.4 529.5 495.4 531.6 491.5 C533.6 487.6 535.7 483.8 538.0 480.0 C540.2 476.3 542.6 472.7 545.0 469.2 C547.4 465.7 550.0 462.3 552.5 458.9 C555.1 455.6 557.7 452.4 560.4 449.2 C563.1 445.9 565.8 442.8 568.6 439.6 C571.4 436.5 574.2 433.4 577.1 430.3 C580.0 427.2 582.9 424.1 585.9 421.1 C588.9 418.1 591.9 415.1 595.0 412.2 C598.1 409.2 602.9 405.0 604.4 403.6" stroke="#8e94ac" stroke-width="22" fill="none" opacity="0.550" filter="url(#blur8)"/></g>
<path d="M758.8 449.5 C759.7 446.3 761.3 440.9 762.9 436.8 C764.4 432.7 766.3 428.7 768.2 424.8 C770.1 420.8 772.3 416.8 774.5 413.0 C776.7 409.1 779.1 405.2 781.5 401.5 C783.9 397.9 786.4 394.3 788.9 390.9 C791.5 387.5 794.1 384.3 796.9 381.1 C799.6 378.0 802.5 375.0 805.4 372.0 C808.4 369.1 811.4 366.2 814.5 363.4 C817.6 360.7 820.7 358.0 823.9 355.3 C827.0 352.7 830.2 350.1 833.5 347.5 C836.8 344.9 840.2 342.4 843.6 339.9 C847.0 337.4 850.6 334.9 854.1 332.5 C857.6 330.1 861.1 327.8 864.6 325.6 C868.1 323.4 871.6 321.3 875.1 319.2 C878.6 317.1 882.1 315.2 885.7 313.2 C889.2 311.3 892.8 309.4 896.5 307.6 C900.2 305.8 904.0 304.0 907.8 302.3 C911.7 300.6 915.6 298.9 919.5 297.4 C923.4 295.9 927.3 294.4 931.2 293.1 C935.1 291.7 939.0 290.5 943.0 289.3 C946.9 288.1 950.9 286.9 955.0 285.8 C959.0 284.7 963.1 283.6 967.2 282.6 C971.3 281.5 975.5 280.5 979.6 279.5 C983.8 278.5 987.9 277.6 992.0 276.6 C996.1 275.7 1000.2 274.7 1004.2 273.8 C1008.3 272.9 1012.4 272.0 1016.5 271.1 C1020.5 270.3 1024.6 269.4 1028.7 268.6 C1032.7 267.7 1036.7 266.9 1040.8 266.2 C1044.8 265.4 1048.8 264.6 1052.9 263.9 C1057.0 263.2 1061.2 262.5 1065.3 261.8 C1069.4 261.1 1073.7 260.5 1077.8 259.8 C1082.0 259.2 1086.1 258.6 1090.2 258.0 C1094.2 257.4 1098.2 256.9 1102.3 256.3 C1106.4 255.8 1110.4 255.2 1114.5 254.7 C1118.6 254.2 1122.7 253.6 1126.9 253.1 C1131.1 252.6 1135.3 252.1 1139.4 251.7 C1143.6 251.2 1147.8 250.8 1151.9 250.4 C1156.0 250.0 1160.1 249.6 1164.1 249.3 C1168.2 249.0 1172.2 248.7 1176.2 248.5 C1180.3 248.2 1184.3 248.0 1188.4 247.9 C1192.4 247.7 1196.5 247.6 1200.5 247.5 C1204.5 247.5 1208.5 247.4 1212.4 247.5 C1216.3 247.5 1220.2 247.6 1224.1 247.7 C1228.0 247.9 1231.9 248.1 1235.9 248.5 C1239.8 248.8 1243.7 249.2 1247.7 249.6 C1251.7 250.1 1255.7 250.7 1259.8 251.4 C1263.8 252.0 1267.9 252.8 1272.0 253.6 C1276.1 254.4 1280.3 255.3 1284.5 256.3 C1288.6 257.3 1292.9 258.4 1297.1 259.4 C1301.3 260.5 1305.6 261.7 1309.7 262.9 C1313.9 264.0 1318.0 265.2 1322.0 266.4 C1326.1 267.6 1330.0 268.8 1333.9 270.0 C1337.8 271.2 1341.7 272.4 1345.6 273.7 C1349.5 275.0 1353.5 276.4 1357.4 277.8 C1361.3 279.2 1365.3 280.6 1369.1 282.1 C1372.9 283.6 1376.5 285.1 1380.1 286.7 C1383.7 288.3 1387.1 289.9 1390.6 291.6 C1394.0 293.3 1397.5 295.0 1401.0 296.9 C1404.5 298.8 1408.1 300.9 1411.7 303.0 C1415.2 305.1 1418.8 307.4 1422.3 309.7 C1425.8 312.0 1429.2 314.4 1432.6 316.9 C1435.9 319.3 1439.2 321.9 1442.5 324.5 C1445.7 327.1 1448.8 329.9 1451.8 332.6 C1454.9 335.4 1457.8 338.3 1460.6 341.3 C1463.4 344.2 1466.1 347.3 1468.6 350.5 C1471.1 353.7 1473.5 357.0 1475.8 360.5 C1478.0 364.1 1480.1 367.8 1482.1 371.7 C1484.0 375.6 1485.8 379.9 1487.3 384.1 C1488.8 388.4 1490.1 392.9 1491.1 397.4 C1492.2 401.8 1492.9 406.3 1493.4 410.7 C1493.9 415.2 1494.1 419.6 1494.2 423.9 C1494.2 428.2 1494.0 432.4 1493.7 436.6 C1493.5 440.8 1493.0 444.9 1492.4 448.9 C1491.9 453.0 1491.2 457.0 1490.4 461.0 C1489.6 465.0 1488.7 468.9 1487.6 472.8 C1486.5 476.7 1485.2 480.5 1483.7 484.3 C1482.2 488.0 1480.5 491.8 1478.6 495.4 C1476.7 499.1 1474.5 502.8 1472.2 506.3 C1469.9 509.8 1467.4 513.3 1464.9 516.7 C1462.3 520.1 1459.6 523.4 1456.9 526.6 C1454.1 529.8 1451.3 532.9 1448.3 536.0 C1445.4 539.1 1442.3 542.1 1439.1 545.1 C1435.9 548.1 1432.5 551.1 1429.1 554.0 C1425.7 556.9 1422.1 559.8 1418.6 562.5 C1415.1 565.3 1411.5 567.9 1408.0 570.5 C1404.5 573.1 1400.9 575.6 1397.4 578.0 C1393.8 580.4 1390.2 582.8 1386.6 585.1 C1382.9 587.4 1379.2 589.6 1375.6 591.8 C1371.9 593.9 1368.2 595.9 1364.5 597.9 C1360.8 599.9 1357.1 601.8 1353.4 603.7 C1349.6 605.6 1345.8 607.4 1342.0 609.2 C1338.1 611.0 1334.3 612.7 1330.3 614.4 C1326.3 616.1 1322.2 617.7 1318.0 619.3 C1313.9 620.9 1309.6 622.5 1305.4 623.9 C1301.2 625.4 1297.0 626.8 1292.9 628.0 C1288.7 629.3 1284.7 630.5 1280.7 631.5 C1276.7 632.6 1272.9 633.5 1269.0 634.3 C1265.1 635.1 1261.3 635.7 1257.5 636.3 C1253.7 636.9 1249.8 637.4 1246.0 637.9 C1242.1 638.3 1238.2 638.7 1234.2 639.2 C1230.3 639.6 1226.2 640.0 1222.2 640.4 C1218.1 640.8 1213.9 641.3 1209.7 641.7 C1205.5 642.1 1201.3 642.5 1197.1 642.9 C1193.0 643.3 1188.8 643.6 1184.7 644.0 C1180.5 644.4 1176.4 644.7 1172.3 645.0 C1168.1 645.4 1164.1 645.7 1159.9 646.0 C1155.8 646.3 1151.7 646.5 1147.5 646.8 C1143.3 647.0 1139.1 647.2 1134.8 647.3 C1130.5 647.5 1126.1 647.6 1121.7 647.7 C1117.2 647.8 1112.7 647.8 1108.3 647.8 C1103.8 647.9 1099.3 647.8 1094.9 647.8 C1090.5 647.7 1086.1 647.6 1081.7 647.4 C1077.4 647.2 1073.1 646.9 1068.8 646.5 C1064.5 646.2 1060.3 645.7 1056.2 645.3 C1052.0 644.8 1047.9 644.3 1043.8 643.8 C1039.6 643.3 1035.4 642.8 1031.1 642.3 C1026.9 641.8 1022.5 641.3 1018.1 640.8 C1013.8 640.3 1009.5 639.8 1005.2 639.3 C1000.9 638.7 996.7 638.2 992.4 637.6 C988.1 637.0 983.8 636.3 979.5 635.6 C975.2 634.9 970.8 634.2 966.5 633.4 C962.1 632.6 957.7 631.7 953.3 630.8 C948.9 629.8 944.5 628.8 940.2 627.8 C935.8 626.7 931.5 625.7 927.3 624.5 C923.1 623.4 919.0 622.3 915.0 621.0 C910.9 619.8 906.8 618.5 902.7 617.2 C898.6 615.8 894.5 614.4 890.4 613.0 C886.2 611.6 881.9 610.1 877.6 608.7 C873.3 607.2 868.8 605.8 864.5 604.2 C860.2 602.6 855.8 601.0 851.8 599.2 C847.7 597.4 843.8 595.5 840.1 593.5 C836.4 591.4 833.0 589.2 829.5 586.9 C826.1 584.6 822.9 582.2 819.6 579.7 C816.4 577.2 813.1 574.7 809.9 572.0 C806.6 569.4 803.3 566.6 800.1 563.8 C796.8 560.9 793.6 557.9 790.5 554.8 C787.4 551.6 784.4 548.4 781.6 545.0 C778.8 541.5 776.1 538.0 773.6 534.3 C771.2 530.6 769.0 526.7 767.0 522.8 C765.0 518.8 763.2 514.7 761.7 510.5 C760.2 506.3 758.9 502.0 757.9 497.6 C756.9 493.1 756.2 488.6 755.8 484.0 C755.4 479.4 755.3 474.6 755.6 470.0 C755.8 465.4 756.8 459.5 757.3 456.1 C757.8 452.7 757.8 452.8 758.8 449.5Z" fill="url(#gOr)"/>
<path d="M758.8 449.5 C759.7 446.3 761.3 440.9 762.9 436.8 C764.4 432.7 766.3 428.7 768.2 424.8 C770.1 420.8 772.3 416.8 774.5 413.0 C776.7 409.1 779.1 405.2 781.5 401.5 C783.9 397.9 786.4 394.3 788.9 390.9 C791.5 387.5 794.1 384.3 796.9 381.1 C799.6 378.0 802.5 375.0 805.4 372.0 C808.4 369.1 811.4 366.2 814.5 363.4 C817.6 360.7 820.7 358.0 823.9 355.3 C827.0 352.7 830.2 350.1 833.5 347.5 C836.8 344.9 840.2 342.4 843.6 339.9 C847.0 337.4 850.6 334.9 854.1 332.5 C857.6 330.1 861.1 327.8 864.6 325.6 C868.1 323.4 871.6 321.3 875.1 319.2 C878.6 317.1 882.1 315.2 885.7 313.2 C889.2 311.3 892.8 309.4 896.5 307.6 C900.2 305.8 904.0 304.0 907.8 302.3 C911.7 300.6 915.6 298.9 919.5 297.4 C923.4 295.9 927.3 294.4 931.2 293.1 C935.1 291.7 939.0 290.5 943.0 289.3 C946.9 288.1 950.9 286.9 955.0 285.8 C959.0 284.7 963.1 283.6 967.2 282.6 C971.3 281.5 975.5 280.5 979.6 279.5 C983.8 278.5 987.9 277.6 992.0 276.6 C996.1 275.7 1000.2 274.7 1004.2 273.8 C1008.3 272.9 1012.4 272.0 1016.5 271.1 C1020.5 270.3 1024.6 269.4 1028.7 268.6 C1032.7 267.7 1036.7 266.9 1040.8 266.2 C1044.8 265.4 1048.8 264.6 1052.9 263.9 C1057.0 263.2 1061.2 262.5 1065.3 261.8 C1069.4 261.1 1073.7 260.5 1077.8 259.8 C1082.0 259.2 1086.1 258.6 1090.2 258.0 C1094.2 257.4 1098.2 256.9 1102.3 256.3 C1106.4 255.8 1110.4 255.2 1114.5 254.7 C1118.6 254.2 1122.7 253.6 1126.9 253.1 C1131.1 252.6 1135.3 252.1 1139.4 251.7 C1143.6 251.2 1147.8 250.8 1151.9 250.4 C1156.0 250.0 1160.1 249.6 1164.1 249.3 C1168.2 249.0 1172.2 248.7 1176.2 248.5 C1180.3 248.2 1184.3 248.0 1188.4 247.9 C1192.4 247.7 1196.5 247.6 1200.5 247.5 C1204.5 247.5 1208.5 247.4 1212.4 247.5 C1216.3 247.5 1220.2 247.6 1224.1 247.7 C1228.0 247.9 1231.9 248.1 1235.9 248.5 C1239.8 248.8 1243.7 249.2 1247.7 249.6 C1251.7 250.1 1255.7 250.7 1259.8 251.4 C1263.8 252.0 1267.9 252.8 1272.0 253.6 C1276.1 254.4 1280.3 255.3 1284.5 256.3 C1288.6 257.3 1292.9 258.4 1297.1 259.4 C1301.3 260.5 1305.6 261.7 1309.7 262.9 C1313.9 264.0 1318.0 265.2 1322.0 266.4 C1326.1 267.6 1330.0 268.8 1333.9 270.0 C1337.8 271.2 1341.7 272.4 1345.6 273.7 C1349.5 275.0 1353.5 276.4 1357.4 277.8 C1361.3 279.2 1365.3 280.6 1369.1 282.1 C1372.9 283.6 1376.5 285.1 1380.1 286.7 C1383.7 288.3 1387.1 289.9 1390.6 291.6 C1394.0 293.3 1397.5 295.0 1401.0 296.9 C1404.5 298.8 1408.1 300.9 1411.7 303.0 C1415.2 305.1 1418.8 307.4 1422.3 309.7 C1425.8 312.0 1429.2 314.4 1432.6 316.9 C1435.9 319.3 1439.2 321.9 1442.5 324.5 C1445.7 327.1 1448.8 329.9 1451.8 332.6 C1454.9 335.4 1457.8 338.3 1460.6 341.3 C1463.4 344.2 1466.1 347.3 1468.6 350.5 C1471.1 353.7 1473.5 357.0 1475.8 360.5 C1478.0 364.1 1480.1 367.8 1482.1 371.7 C1484.0 375.6 1485.8 379.9 1487.3 384.1 C1488.8 388.4 1490.1 392.9 1491.1 397.4 C1492.2 401.8 1492.9 406.3 1493.4 410.7 C1493.9 415.2 1494.1 419.6 1494.2 423.9 C1494.2 428.2 1494.0 432.4 1493.7 436.6 C1493.5 440.8 1493.0 444.9 1492.4 448.9 C1491.9 453.0 1491.2 457.0 1490.4 461.0 C1489.6 465.0 1488.7 468.9 1487.6 472.8 C1486.5 476.7 1485.2 480.5 1483.7 484.3 C1482.2 488.0 1480.5 491.8 1478.6 495.4 C1476.7 499.1 1474.5 502.8 1472.2 506.3 C1469.9 509.8 1467.4 513.3 1464.9 516.7 C1462.3 520.1 1459.6 523.4 1456.9 526.6 C1454.1 529.8 1451.3 532.9 1448.3 536.0 C1445.4 539.1 1442.3 542.1 1439.1 545.1 C1435.9 548.1 1432.5 551.1 1429.1 554.0 C1425.7 556.9 1422.1 559.8 1418.6 562.5 C1415.1 565.3 1411.5 567.9 1408.0 570.5 C1404.5 573.1 1400.9 575.6 1397.4 578.0 C1393.8 580.4 1390.2 582.8 1386.6 585.1 C1382.9 587.4 1379.2 589.6 1375.6 591.8 C1371.9 593.9 1368.2 595.9 1364.5 597.9 C1360.8 599.9 1357.1 601.8 1353.4 603.7 C1349.6 605.6 1345.8 607.4 1342.0 609.2 C1338.1 611.0 1334.3 612.7 1330.3 614.4 C1326.3 616.1 1322.2 617.7 1318.0 619.3 C1313.9 620.9 1309.6 622.5 1305.4 623.9 C1301.2 625.4 1297.0 626.8 1292.9 628.0 C1288.7 629.3 1284.7 630.5 1280.7 631.5 C1276.7 632.6 1272.9 633.5 1269.0 634.3 C1265.1 635.1 1261.3 635.7 1257.5 636.3 C1253.7 636.9 1249.8 637.4 1246.0 637.9 C1242.1 638.3 1238.2 638.7 1234.2 639.2 C1230.3 639.6 1226.2 640.0 1222.2 640.4 C1218.1 640.8 1213.9 641.3 1209.7 641.7 C1205.5 642.1 1201.3 642.5 1197.1 642.9 C1193.0 643.3 1188.8 643.6 1184.7 644.0 C1180.5 644.4 1176.4 644.7 1172.3 645.0 C1168.1 645.4 1164.1 645.7 1159.9 646.0 C1155.8 646.3 1151.7 646.5 1147.5 646.8 C1143.3 647.0 1139.1 647.2 1134.8 647.3 C1130.5 647.5 1126.1 647.6 1121.7 647.7 C1117.2 647.8 1112.7 647.8 1108.3 647.8 C1103.8 647.9 1099.3 647.8 1094.9 647.8 C1090.5 647.7 1086.1 647.6 1081.7 647.4 C1077.4 647.2 1073.1 646.9 1068.8 646.5 C1064.5 646.2 1060.3 645.7 1056.2 645.3 C1052.0 644.8 1047.9 644.3 1043.8 643.8 C1039.6 643.3 1035.4 642.8 1031.1 642.3 C1026.9 641.8 1022.5 641.3 1018.1 640.8 C1013.8 640.3 1009.5 639.8 1005.2 639.3 C1000.9 638.7 996.7 638.2 992.4 637.6 C988.1 637.0 983.8 636.3 979.5 635.6 C975.2 634.9 970.8 634.2 966.5 633.4 C962.1 632.6 957.7 631.7 953.3 630.8 C948.9 629.8 944.5 628.8 940.2 627.8 C935.8 626.7 931.5 625.7 927.3 624.5 C923.1 623.4 919.0 622.3 915.0 621.0 C910.9 619.8 906.8 618.5 902.7 617.2 C898.6 615.8 894.5 614.4 890.4 613.0 C886.2 611.6 881.9 610.1 877.6 608.7 C873.3 607.2 868.8 605.8 864.5 604.2 C860.2 602.6 855.8 601.0 851.8 599.2 C847.7 597.4 843.8 595.5 840.1 593.5 C836.4 591.4 833.0 589.2 829.5 586.9 C826.1 584.6 822.9 582.2 819.6 579.7 C816.4 577.2 813.1 574.7 809.9 572.0 C806.6 569.4 803.3 566.6 800.1 563.8 C796.8 560.9 793.6 557.9 790.5 554.8 C787.4 551.6 784.4 548.4 781.6 545.0 C778.8 541.5 776.1 538.0 773.6 534.3 C771.2 530.6 769.0 526.7 767.0 522.8 C765.0 518.8 763.2 514.7 761.7 510.5 C760.2 506.3 758.9 502.0 757.9 497.6 C756.9 493.1 756.2 488.6 755.8 484.0 C755.4 479.4 755.3 474.6 755.6 470.0 C755.8 465.4 756.8 459.5 757.3 456.1 C757.8 452.7 757.8 452.8 758.8 449.5Z" fill="url(#gOrD)"/>
<g clip-path="url(#cOr)"><path d="M1037.5 642.5 C1036.3 640.7 1032.5 635.5 1030.1 631.9 C1027.6 628.4 1025.1 624.9 1022.8 621.2 C1020.6 617.4 1018.3 613.5 1016.4 609.4 C1014.5 605.3 1012.8 600.7 1011.4 596.4 C1010.1 592.1 1009.1 587.8 1008.3 583.6 C1007.6 579.4 1007.1 575.3 1006.9 571.2 C1006.7 567.1 1006.7 563.1 1007.0 559.1 C1007.3 555.0 1007.9 551.0 1008.6 547.0 C1009.4 543.0 1010.5 539.0 1011.7 535.0 C1013.0 531.1 1014.5 527.1 1016.2 523.1 C1017.9 519.2 1019.9 515.2 1021.9 511.3 C1024.0 507.5 1026.2 503.7 1028.5 499.9 C1030.9 496.2 1033.3 492.5 1035.8 488.8 C1038.3 485.2 1040.9 481.6 1043.5 477.9 C1046.2 474.3 1048.9 470.6 1051.6 467.0 C1054.4 463.4 1057.2 459.8 1060.1 456.4 C1063.1 452.9 1066.1 449.5 1069.3 446.4 C1072.6 443.3 1076.0 440.3 1079.6 437.6 C1083.2 434.9 1087.0 432.5 1090.9 430.1 C1094.9 427.8 1099.0 425.6 1103.2 423.5 C1107.3 421.4 1111.5 419.5 1115.6 417.5 C1119.8 415.6 1124.0 413.8 1128.2 412.0 C1132.4 410.2 1136.7 408.5 1140.9 406.9 C1145.2 405.3 1149.5 403.7 1153.9 402.3 C1158.2 401.0 1162.5 399.7 1166.9 398.6 C1171.3 397.5 1175.7 396.5 1180.1 395.8 C1184.5 395.0 1188.9 394.3 1193.3 393.9 C1197.7 393.4 1202.1 393.2 1206.6 393.1 C1211.1 393.0 1215.7 393.1 1220.2 393.5 C1224.8 393.8 1229.4 394.3 1233.9 395.2 C1238.5 396.0 1243.0 397.0 1247.4 398.3 C1251.8 399.6 1256.2 401.1 1260.5 402.9 C1264.8 404.6 1269.0 406.6 1273.1 408.8 C1277.1 410.9 1281.1 413.3 1284.9 415.8 C1288.6 418.4 1292.3 421.1 1295.7 424.1 C1299.1 427.0 1302.3 430.1 1305.2 433.4 C1308.1 436.7 1310.8 440.2 1313.2 443.8 C1315.6 447.5 1317.7 451.3 1319.7 455.3 C1321.8 459.3 1324.0 464.5 1325.4 467.7 C1326.7 470.8 1327.6 472.9 1328.0 474.0" stroke="#8a5e06" stroke-width="60" fill="none" opacity="0.280" filter="url(#blur18)"/></g>
<path d="M1037.5 642.5 C1036.3 640.7 1032.5 635.5 1030.1 631.9 C1027.6 628.4 1025.1 624.9 1022.8 621.2 C1020.6 617.4 1018.3 613.5 1016.4 609.4 C1014.5 605.3 1012.8 600.7 1011.4 596.4 C1010.1 592.1 1009.1 587.8 1008.3 583.6 C1007.6 579.4 1007.1 575.3 1006.9 571.2 C1006.7 567.1 1006.7 563.1 1007.0 559.1 C1007.3 555.0 1007.9 551.0 1008.6 547.0 C1009.4 543.0 1010.5 539.0 1011.7 535.0 C1013.0 531.1 1014.5 527.1 1016.2 523.1 C1017.9 519.2 1019.9 515.2 1021.9 511.3 C1024.0 507.5 1026.2 503.7 1028.5 499.9 C1030.9 496.2 1033.3 492.5 1035.8 488.8 C1038.3 485.2 1040.9 481.6 1043.5 477.9 C1046.2 474.3 1048.9 470.6 1051.6 467.0 C1054.4 463.4 1057.2 459.8 1060.1 456.4 C1063.1 452.9 1066.1 449.5 1069.3 446.4 C1072.6 443.3 1076.0 440.3 1079.6 437.6 C1083.2 434.9 1087.0 432.5 1090.9 430.1 C1094.9 427.8 1099.0 425.6 1103.2 423.5 C1107.3 421.4 1111.5 419.5 1115.6 417.5 C1119.8 415.6 1124.0 413.8 1128.2 412.0 C1132.4 410.2 1136.7 408.5 1140.9 406.9 C1145.2 405.3 1149.5 403.7 1153.9 402.3 C1158.2 401.0 1162.5 399.7 1166.9 398.6 C1171.3 397.5 1175.7 396.5 1180.1 395.8 C1184.5 395.0 1188.9 394.3 1193.3 393.9 C1197.7 393.4 1202.1 393.2 1206.6 393.1 C1211.1 393.0 1215.7 393.1 1220.2 393.5 C1224.8 393.8 1229.4 394.3 1233.9 395.2 C1238.5 396.0 1243.0 397.0 1247.4 398.3 C1251.8 399.6 1256.2 401.1 1260.5 402.9 C1264.8 404.6 1269.0 406.6 1273.1 408.8 C1277.1 410.9 1281.1 413.3 1284.9 415.8 C1288.6 418.4 1292.3 421.1 1295.7 424.1 C1299.1 427.0 1302.3 430.1 1305.2 433.4 C1308.1 436.7 1310.8 440.2 1313.2 443.8 C1315.6 447.5 1317.7 451.3 1319.7 455.3 C1321.8 459.3 1324.0 464.5 1325.4 467.7 C1326.7 470.8 1327.6 472.9 1328.0 474.0 L1250 560 Z" fill="url(#gNeck)"/>
<path d="M1287.5 455.0 C1285.8 455.2 1280.8 455.9 1277.1 456.4 C1273.4 457.0 1269.2 457.6 1265.1 458.3 C1260.9 459.1 1256.2 460.0 1251.9 461.0 C1247.7 462.0 1243.4 463.1 1239.4 464.3 C1235.4 465.5 1231.7 466.8 1227.8 468.1 C1224.0 469.5 1220.2 470.9 1216.4 472.4 C1212.6 474.0 1208.7 475.6 1204.9 477.2 C1201.0 478.9 1197.2 480.6 1193.4 482.4 C1189.6 484.2 1185.8 486.1 1182.1 488.0 C1178.3 490.0 1174.6 491.9 1170.9 494.0 C1167.2 496.1 1163.5 498.2 1159.9 500.4 C1156.2 502.5 1152.6 504.8 1149.0 507.1 C1145.4 509.4 1141.8 511.7 1138.3 514.1 C1134.8 516.5 1131.3 519.0 1127.9 521.5 C1124.4 524.1 1121.0 526.7 1117.6 529.4 C1114.2 532.1 1110.9 534.8 1107.6 537.5 C1104.3 540.3 1101.2 543.0 1098.0 545.7 C1094.9 548.4 1091.9 551.0 1088.7 553.8 C1085.6 556.6 1082.3 559.4 1079.2 562.3 C1076.0 565.2 1072.8 568.1 1069.7 571.1 C1066.7 574.1 1063.8 577.0 1061.1 580.2 C1058.3 583.4 1055.6 586.6 1053.2 590.0 C1050.7 593.5 1048.3 597.1 1046.2 600.8 C1044.1 604.5 1042.2 608.3 1040.7 612.2 C1039.3 616.1 1038.2 620.2 1037.7 624.3 C1037.2 628.4 1037.7 633.7 1037.8 636.8 C1038.0 639.9 1038.6 642.0 1038.7 643.0 L1043.8 643.8 C1045.8 644.1 1052.0 644.8 1056.2 645.3 C1060.3 645.7 1064.5 646.2 1068.8 646.5 C1073.1 646.9 1077.4 647.2 1081.7 647.4 C1086.1 647.6 1090.5 647.7 1094.9 647.8 C1099.3 647.8 1103.8 647.9 1108.3 647.8 C1112.7 647.8 1117.2 647.8 1121.7 647.7 C1126.1 647.6 1130.5 647.5 1134.8 647.3 C1139.1 647.2 1143.3 647.0 1147.5 646.8 C1151.7 646.5 1155.8 646.3 1159.9 646.0 C1164.1 645.7 1168.1 645.4 1172.3 645.0 C1176.4 644.7 1180.5 644.4 1184.7 644.0 C1188.8 643.6 1193.0 643.3 1197.1 642.9 C1201.3 642.5 1205.5 642.1 1209.7 641.7 C1213.9 641.3 1218.1 640.8 1222.2 640.4 C1226.2 640.0 1230.3 639.6 1234.2 639.2 C1238.2 638.7 1244.0 638.1 1246.0 637.9 L1245.0 638.0 C1246.9 636.8 1252.8 633.4 1256.6 630.9 C1260.5 628.3 1264.5 625.6 1268.1 622.8 C1271.7 619.9 1275.0 617.0 1278.2 613.9 C1281.3 610.9 1284.1 607.8 1286.9 604.5 C1289.7 601.2 1292.3 597.8 1294.9 594.2 C1297.5 590.6 1300.0 586.8 1302.3 583.0 C1304.7 579.1 1307.0 575.0 1309.1 571.0 C1311.2 566.9 1313.2 562.6 1315.1 558.4 C1316.9 554.2 1318.7 549.8 1320.2 545.5 C1321.8 541.3 1323.2 537.0 1324.4 532.8 C1325.6 528.6 1326.6 524.5 1327.4 520.5 C1328.1 516.4 1328.7 512.4 1329.0 508.3 C1329.2 504.3 1329.3 500.2 1329.0 496.1 C1328.7 492.1 1328.2 487.9 1327.0 484.0 C1325.8 480.0 1324.3 475.9 1321.8 472.4 C1319.4 468.9 1316.1 465.5 1312.5 462.9 C1309.0 460.4 1304.5 458.6 1300.4 457.3 C1296.2 456.0 1289.6 455.4 1287.5 455.0Z" fill="#111111"/>
<path d="M483.7 614.9 C484.4 612.9 486.4 607.0 487.8 603.1 C489.3 599.2 490.9 595.4 492.4 591.5 C494.0 587.6 495.6 583.7 497.2 579.6 C498.8 575.6 500.3 571.5 501.9 567.3 C503.4 563.1 504.9 558.9 506.4 554.6 C507.9 550.4 509.4 546.1 510.9 541.8 C512.5 537.5 514.0 533.2 515.6 528.9 C517.2 524.6 518.8 520.3 520.5 516.1 C522.2 511.9 523.9 507.6 525.8 503.5 C527.6 499.4 529.5 495.4 531.6 491.5 C533.6 487.6 535.7 483.8 538.0 480.0 C540.2 476.3 542.6 472.7 545.0 469.2 C547.4 465.7 550.0 462.3 552.5 458.9 C555.1 455.6 557.7 452.4 560.4 449.2 C563.1 445.9 565.8 442.8 568.6 439.6 C571.4 436.5 574.2 433.4 577.1 430.3 C580.0 427.2 582.9 424.1 585.9 421.1 C588.9 418.1 591.9 415.1 595.0 412.2 C598.1 409.2 601.3 406.4 604.4 403.6 C607.6 400.8 610.8 398.0 614.1 395.3 C617.4 392.6 620.8 389.9 624.2 387.2 C627.6 384.6 631.1 381.9 634.6 379.3 C638.1 376.7 641.7 374.1 645.3 371.6 C648.9 369.1 652.6 366.6 656.2 364.1 C659.9 361.6 663.6 359.2 667.3 356.8 C671.1 354.4 674.8 352.0 678.5 349.7 C682.2 347.4 685.9 345.1 689.6 342.9 C693.2 340.7 696.8 338.6 700.4 336.5 C704.0 334.4 707.5 332.3 711.2 330.3 C714.8 328.3 718.4 326.3 722.2 324.3 C725.9 322.4 729.7 320.4 733.5 318.5 C737.3 316.6 741.2 314.7 745.0 312.9 C748.9 311.1 752.8 309.3 756.7 307.5 C760.7 305.7 764.7 304.0 768.7 302.2 C772.7 300.5 776.8 298.7 780.8 297.0 C784.8 295.3 788.8 293.6 792.8 291.9 C796.7 290.2 800.6 288.6 804.5 286.9 C808.4 285.2 812.2 283.6 816.1 281.9 C819.9 280.3 823.7 278.6 827.5 277.0 C831.3 275.4 835.0 273.8 838.6 272.2 C842.3 270.7 845.9 269.2 849.5 267.8 C853.1 266.4 856.6 265.1 860.3 263.8 C863.9 262.5 867.5 261.3 871.3 260.1 C875.0 258.9 878.8 257.8 882.7 256.7 C886.5 255.5 890.5 254.5 894.5 253.5 C898.4 252.4 902.4 251.5 906.3 250.5 C910.2 249.6 914.1 248.7 917.9 247.8 C921.7 247.0 925.4 246.2 929.2 245.3 C933.1 244.5 936.9 243.7 940.8 242.9 C944.7 242.1 948.8 241.3 952.9 240.6 C956.9 239.8 961.1 239.0 965.3 238.3 C969.5 237.6 973.7 236.9 977.9 236.3 C982.0 235.6 986.1 235.0 990.2 234.4 C994.3 233.9 998.3 233.3 1002.4 232.8 C1006.4 232.3 1010.4 231.9 1014.5 231.4 C1018.6 230.9 1022.7 230.5 1026.9 230.1 C1031.0 229.6 1035.3 229.2 1039.5 228.8 C1043.8 228.4 1048.1 228.0 1052.4 227.6 C1056.6 227.3 1061.0 226.9 1065.3 226.5 C1069.6 226.2 1073.9 225.9 1078.1 225.6 C1082.4 225.3 1086.6 225.0 1090.9 224.7 C1095.1 224.4 1099.3 224.1 1103.5 223.9 C1107.8 223.6 1112.0 223.4 1116.3 223.2 C1120.5 222.9 1124.8 222.7 1129.1 222.5 C1133.4 222.3 1137.7 222.1 1142.0 221.9 C1146.3 221.7 1150.5 221.6 1154.6 221.4 C1158.8 221.3 1162.9 221.2 1166.9 221.0 C1171.0 220.9 1174.9 220.9 1178.9 220.8 C1182.9 220.7 1186.9 220.7 1191.0 220.7 C1195.1 220.7 1199.3 220.7 1203.5 220.8 C1207.8 220.9 1212.1 221.0 1216.4 221.2 C1220.6 221.4 1224.8 221.6 1228.9 221.9 C1233.0 222.2 1237.1 222.6 1241.2 223.0 C1245.2 223.4 1249.3 223.8 1253.4 224.3 C1257.5 224.8 1261.6 225.3 1265.7 225.8 C1269.8 226.3 1274.0 226.9 1278.2 227.4 C1282.3 228.0 1286.5 228.6 1290.7 229.2 C1295.0 229.9 1299.2 230.5 1303.4 231.3 C1307.6 232.0 1311.9 232.7 1316.0 233.5 C1320.2 234.4 1324.3 235.2 1328.4 236.2 C1332.6 237.1 1336.7 238.2 1340.8 239.3 C1344.9 240.5 1349.1 241.8 1353.2 243.1 C1357.3 244.5 1361.4 246.0 1365.4 247.5 C1369.4 249.1 1373.4 250.7 1377.3 252.3 C1381.2 254.0 1385.1 255.7 1388.9 257.5 C1392.7 259.2 1396.6 261.0 1400.4 262.9 C1404.2 264.8 1408.1 266.7 1411.9 268.6 C1415.7 270.6 1419.5 272.6 1423.2 274.6 C1427.0 276.7 1430.6 278.7 1434.3 280.9 C1438.0 283.0 1441.6 285.2 1445.2 287.4 C1448.9 289.7 1452.5 292.0 1456.2 294.4 C1459.8 296.9 1463.5 299.4 1467.0 301.9 C1470.5 304.5 1474.0 307.1 1477.4 309.9 C1480.7 312.6 1484.0 315.4 1487.2 318.2 C1490.3 321.1 1493.3 324.1 1496.2 327.1 C1499.1 330.2 1501.8 333.3 1504.5 336.6 C1507.1 339.9 1509.6 343.2 1511.9 346.7 C1514.3 350.2 1516.5 353.8 1518.6 357.5 C1520.6 361.2 1522.6 365.0 1524.3 368.9 C1526.0 372.8 1527.6 376.9 1528.9 381.0 C1530.3 385.1 1531.4 389.3 1532.3 393.5 C1533.2 397.8 1534.0 402.1 1534.5 406.5 C1535.0 410.9 1535.4 415.4 1535.6 419.8 C1535.7 424.3 1535.8 428.8 1535.6 433.3 C1535.5 437.8 1535.2 442.3 1534.7 446.7 C1534.2 451.1 1533.5 455.5 1532.6 459.7 C1531.7 464.0 1529.9 470.1 1529.3 472.1" stroke="#e6c6ee" stroke-width="1.2" fill="none" opacity="0.9"/>
<path d="M1529.3 472.1 C1528.6 474.1 1526.5 480.0 1524.8 483.9 C1523.2 487.7 1521.4 491.4 1519.5 495.2 C1517.6 498.9 1515.6 502.7 1513.4 506.4 C1511.3 510.1 1509.1 513.8 1506.7 517.5 C1504.4 521.2 1501.9 525.0 1499.3 528.6 C1496.8 532.2 1494.1 535.9 1491.4 539.4 C1488.7 542.9 1486.0 546.3 1483.2 549.6 C1480.4 552.9 1477.6 556.1 1474.6 559.2 C1471.7 562.3 1468.7 565.3 1465.6 568.1 C1462.5 571.0 1459.3 573.8 1456.1 576.5 C1452.8 579.3 1449.5 581.9 1446.0 584.5 C1442.6 587.1 1439.1 589.6 1435.5 592.0 C1431.9 594.4 1428.2 596.8 1424.4 599.1 C1420.7 601.4 1416.8 603.6 1413.0 605.8 C1409.1 608.1 1405.2 610.2 1401.4 612.4 C1397.6 614.6 1393.8 616.8 1390.1 618.9 C1386.3 621.1 1382.6 623.3 1378.8 625.4 C1375.0 627.6 1371.3 629.8 1367.5 631.8 C1363.7 633.9 1359.8 636.0 1355.9 638.0 C1352.0 639.9 1348.1 641.8 1344.1 643.6 C1340.1 645.4 1336.0 647.0 1331.9 648.6 C1327.8 650.1 1323.7 651.6 1319.5 653.0 C1315.4 654.4 1311.2 655.6 1307.1 656.9 C1302.9 658.2 1298.8 659.4 1294.6 660.6 C1290.4 661.8 1286.2 663.0 1282.0 664.1 C1277.8 665.3 1273.6 666.4 1269.4 667.5 C1265.2 668.6 1260.9 669.7 1256.8 670.7 C1252.6 671.7 1248.5 672.7 1244.4 673.6 C1240.2 674.6 1236.2 675.5 1232.0 676.3 C1227.9 677.1 1223.8 677.9 1219.6 678.7 C1215.4 679.4 1211.2 680.1 1206.9 680.7 C1202.7 681.3 1198.4 681.8 1194.1 682.3 C1189.8 682.7 1185.5 683.1 1181.2 683.5 C1176.8 683.8 1172.5 684.1 1168.1 684.4 C1163.7 684.6 1159.3 684.9 1154.9 685.1 C1150.5 685.3 1146.1 685.5 1141.8 685.7 C1137.4 685.8 1133.1 686.0 1128.9 686.1 C1124.6 686.3 1120.4 686.4 1116.2 686.5 C1112.0 686.6 1107.8 686.7 1103.6 686.8 C1099.5 686.8 1095.3 686.9 1091.2 686.9 C1087.0 686.9 1082.8 686.9 1078.6 686.9 C1074.5 686.9 1070.2 686.9 1066.0 686.8 C1061.8 686.8 1057.6 686.7 1053.3 686.6 C1049.1 686.5 1044.9 686.4 1040.7 686.3 C1036.4 686.1 1032.3 686.0 1028.1 685.8 C1023.9 685.6 1019.8 685.4 1015.6 685.2 C1011.5 684.9 1007.3 684.6 1003.1 684.3 C999.0 684.0 994.8 683.7 990.7 683.3 C986.5 682.9 982.4 682.5 978.3 682.0 C974.2 681.6 970.1 681.1 966.0 680.6 C961.9 680.1 957.8 679.6 953.7 679.1 C949.5 678.5 945.4 677.9 941.2 677.3 C937.1 676.7 932.9 676.1 928.8 675.4 C924.6 674.8 920.5 674.1 916.3 673.4 C912.2 672.7 908.0 672.0 903.9 671.2 C899.8 670.5 895.7 669.7 891.5 668.9 C887.4 668.2 883.2 667.4 879.1 666.6 C874.9 665.8 870.8 665.1 866.6 664.3 C862.4 663.6 858.2 662.9 854.0 662.3 C849.8 661.6 845.6 661.0 841.4 660.3 C837.1 659.7 832.9 659.1 828.6 658.5 C824.4 658.0 820.1 657.4 815.8 656.8 C811.6 656.2 807.3 655.6 803.1 655.0 C798.9 654.4 794.8 653.8 790.6 653.2 C786.5 652.6 782.4 651.9 778.3 651.3 C774.1 650.7 770.0 650.1 765.8 649.5 C761.7 648.9 757.4 648.3 753.2 647.8 C749.0 647.2 744.7 646.7 740.5 646.2 C736.2 645.7 731.9 645.3 727.7 644.9 C723.4 644.4 719.1 644.0 714.8 643.6 C710.5 643.3 706.2 642.9 701.9 642.5 C697.6 642.2 693.3 641.9 689.0 641.6 C684.8 641.3 680.6 641.0 676.4 640.8 C672.2 640.5 668.1 640.3 663.9 640.2 C659.7 640.0 655.5 639.8 651.3 639.8 C647.2 639.7 643.0 639.6 638.9 639.6 C634.8 639.6 630.8 639.7 626.7 639.8 C622.6 639.9 618.5 640.0 614.4 640.2 C610.2 640.4 606.0 640.6 601.8 640.8 C597.6 641.1 593.3 641.4 589.1 641.8 C584.8 642.1 580.6 642.6 576.4 643.1 C572.3 643.7 568.1 644.3 564.1 645.1 C560.0 645.9 556.0 646.8 552.2 647.8 C548.4 648.8 543.9 650.1 541.2 650.9 C538.5 651.7 536.9 652.2 536.0 652.5" stroke="#55c6ba" stroke-width="2" fill="none" opacity="1"/>
<path d="M758.8 449.5 C759.4 447.4 761.3 440.9 762.9 436.8 C764.4 432.7 766.3 428.7 768.2 424.8 C770.1 420.8 772.3 416.8 774.5 413.0 C776.7 409.1 779.1 405.2 781.5 401.5 C783.9 397.9 786.4 394.3 788.9 390.9 C791.5 387.5 794.1 384.3 796.9 381.1 C799.6 378.0 802.5 375.0 805.4 372.0 C808.4 369.1 811.4 366.2 814.5 363.4 C817.6 360.7 820.7 358.0 823.9 355.3 C827.0 352.7 830.2 350.1 833.5 347.5 C836.8 344.9 840.2 342.4 843.6 339.9 C847.0 337.4 850.6 334.9 854.1 332.5 C857.6 330.1 861.1 327.8 864.6 325.6 C868.1 323.4 871.6 321.3 875.1 319.2 C878.6 317.1 882.1 315.2 885.7 313.2 C889.2 311.3 892.8 309.4 896.5 307.6 C900.2 305.8 904.0 304.0 907.8 302.3 C911.7 300.6 915.6 298.9 919.5 297.4 C923.4 295.9 927.3 294.4 931.2 293.1 C935.1 291.7 939.0 290.5 943.0 289.3 C946.9 288.1 950.9 286.9 955.0 285.8 C959.0 284.7 963.1 283.6 967.2 282.6 C971.3 281.5 975.5 280.5 979.6 279.5 C983.8 278.5 987.9 277.6 992.0 276.6 C996.1 275.7 1000.2 274.7 1004.2 273.8 C1008.3 272.9 1012.4 272.0 1016.5 271.1 C1020.5 270.3 1024.6 269.4 1028.7 268.6 C1032.7 267.7 1036.7 266.9 1040.8 266.2 C1044.8 265.4 1048.8 264.6 1052.9 263.9 C1057.0 263.2 1061.2 262.5 1065.3 261.8 C1069.4 261.1 1073.7 260.5 1077.8 259.8 C1082.0 259.2 1086.1 258.6 1090.2 258.0 C1094.2 257.4 1098.2 256.9 1102.3 256.3 C1106.4 255.8 1110.4 255.2 1114.5 254.7 C1118.6 254.2 1122.7 253.6 1126.9 253.1 C1131.1 252.6 1135.3 252.1 1139.4 251.7 C1143.6 251.2 1147.8 250.8 1151.9 250.4 C1156.0 250.0 1160.1 249.6 1164.1 249.3 C1168.2 249.0 1172.2 248.7 1176.2 248.5 C1180.3 248.2 1184.3 248.0 1188.4 247.9 C1192.4 247.7 1196.5 247.6 1200.5 247.5 C1204.5 247.5 1208.5 247.4 1212.4 247.5 C1216.3 247.5 1220.2 247.6 1224.1 247.7 C1228.0 247.9 1231.9 248.1 1235.9 248.5 C1239.8 248.8 1243.7 249.2 1247.7 249.6 C1251.7 250.1 1255.7 250.7 1259.8 251.4 C1263.8 252.0 1267.9 252.8 1272.0 253.6 C1276.1 254.4 1280.3 255.3 1284.5 256.3 C1288.6 257.3 1292.9 258.4 1297.1 259.4 C1301.3 260.5 1305.6 261.7 1309.7 262.9 C1313.9 264.0 1318.0 265.2 1322.0 266.4 C1326.1 267.6 1330.0 268.8 1333.9 270.0 C1337.8 271.2 1341.7 272.4 1345.6 273.7 C1349.5 275.0 1353.5 276.4 1357.4 277.8 C1361.3 279.2 1365.3 280.6 1369.1 282.1 C1372.9 283.6 1376.5 285.1 1380.1 286.7 C1383.7 288.3 1387.1 289.9 1390.6 291.6 C1394.0 293.3 1397.5 295.0 1401.0 296.9 C1404.5 298.8 1408.1 300.9 1411.7 303.0 C1415.2 305.1 1418.8 307.4 1422.3 309.7 C1425.8 312.0 1429.2 314.4 1432.6 316.9 C1435.9 319.3 1439.2 321.9 1442.5 324.5 C1445.7 327.1 1448.8 329.9 1451.8 332.6 C1454.9 335.4 1457.8 338.3 1460.6 341.3 C1463.4 344.2 1466.1 347.3 1468.6 350.5 C1471.1 353.7 1473.5 357.0 1475.8 360.5 C1478.0 364.1 1480.1 367.8 1482.1 371.7 C1484.0 375.6 1485.8 379.9 1487.3 384.1 C1488.8 388.4 1490.1 392.9 1491.1 397.4 C1492.2 401.8 1492.9 406.3 1493.4 410.7 C1493.9 415.2 1494.1 419.6 1494.2 423.9 C1494.2 428.2 1494.0 432.4 1493.7 436.6 C1493.5 440.8 1493.0 444.9 1492.4 448.9 C1491.9 453.0 1490.8 459.0 1490.4 461.0" stroke="#c04a9a" stroke-width="1.6" fill="none" opacity="1"/>
<path d="M1490.4 461.0 C1490.0 463.0 1488.7 468.9 1487.6 472.8 C1486.5 476.7 1485.2 480.5 1483.7 484.3 C1482.2 488.0 1480.5 491.8 1478.6 495.4 C1476.7 499.1 1474.5 502.8 1472.2 506.3 C1469.9 509.8 1467.4 513.3 1464.9 516.7 C1462.3 520.1 1459.6 523.4 1456.9 526.6 C1454.1 529.8 1451.3 532.9 1448.3 536.0 C1445.4 539.1 1442.3 542.1 1439.1 545.1 C1435.9 548.1 1432.5 551.1 1429.1 554.0 C1425.7 556.9 1422.1 559.8 1418.6 562.5 C1415.1 565.3 1411.5 567.9 1408.0 570.5 C1404.5 573.1 1400.9 575.6 1397.4 578.0 C1393.8 580.4 1390.2 582.8 1386.6 585.1 C1382.9 587.4 1379.2 589.6 1375.6 591.8 C1371.9 593.9 1368.2 595.9 1364.5 597.9 C1360.8 599.9 1357.1 601.8 1353.4 603.7 C1349.6 605.6 1345.8 607.4 1342.0 609.2 C1338.1 611.0 1334.3 612.7 1330.3 614.4 C1326.3 616.1 1322.2 617.7 1318.0 619.3 C1313.9 620.9 1309.6 622.5 1305.4 623.9 C1301.2 625.4 1297.0 626.8 1292.9 628.0 C1288.7 629.3 1284.7 630.5 1280.7 631.5 C1276.7 632.6 1272.9 633.5 1269.0 634.3 C1265.1 635.1 1261.3 635.7 1257.5 636.3 C1253.7 636.9 1247.9 637.6 1246.0 637.9" stroke="#b8cc98" stroke-width="1.3" fill="none" opacity="0.8"/>
<path d="M1246.0 637.9 C1244.0 638.1 1238.2 638.7 1234.2 639.2 C1230.3 639.6 1226.2 640.0 1222.2 640.4 C1218.1 640.8 1213.9 641.3 1209.7 641.7 C1205.5 642.1 1201.3 642.5 1197.1 642.9 C1193.0 643.3 1188.8 643.6 1184.7 644.0 C1180.5 644.4 1176.4 644.7 1172.3 645.0 C1168.1 645.4 1164.1 645.7 1159.9 646.0 C1155.8 646.3 1151.7 646.5 1147.5 646.8 C1143.3 647.0 1139.1 647.2 1134.8 647.3 C1130.5 647.5 1126.1 647.6 1121.7 647.7 C1117.2 647.8 1112.7 647.8 1108.3 647.8 C1103.8 647.9 1099.3 647.8 1094.9 647.8 C1090.5 647.7 1086.1 647.6 1081.7 647.4 C1077.4 647.2 1073.1 646.9 1068.8 646.5 C1064.5 646.2 1060.3 645.7 1056.2 645.3 C1052.0 644.8 1045.8 644.1 1043.8 643.8" stroke="#a8e6e2" stroke-width="1.2" fill="none" opacity="0.9"/>
<path d="M1043.8 643.8 C1041.6 643.6 1035.4 642.8 1031.1 642.3 C1026.9 641.8 1022.5 641.3 1018.1 640.8 C1013.8 640.3 1009.5 639.8 1005.2 639.3 C1000.9 638.7 996.7 638.2 992.4 637.6 C988.1 637.0 983.8 636.3 979.5 635.6 C975.2 634.9 970.8 634.2 966.5 633.4 C962.1 632.6 957.7 631.7 953.3 630.8 C948.9 629.8 944.5 628.8 940.2 627.8 C935.8 626.7 931.5 625.7 927.3 624.5 C923.1 623.4 919.0 622.3 915.0 621.0 C910.9 619.8 906.8 618.5 902.7 617.2 C898.6 615.8 894.5 614.4 890.4 613.0 C886.2 611.6 881.9 610.1 877.6 608.7 C873.3 607.2 868.8 605.8 864.5 604.2 C860.2 602.6 855.8 601.0 851.8 599.2 C847.7 597.4 843.8 595.5 840.1 593.5 C836.4 591.4 833.0 589.2 829.5 586.9 C826.1 584.6 822.9 582.2 819.6 579.7 C816.4 577.2 813.1 574.7 809.9 572.0 C806.6 569.4 803.3 566.6 800.1 563.8 C796.8 560.9 793.6 557.9 790.5 554.8 C787.4 551.6 784.4 548.4 781.6 545.0 C778.8 541.5 776.1 538.0 773.6 534.3 C771.2 530.6 769.0 526.7 767.0 522.8 C765.0 518.8 763.2 514.7 761.7 510.5 C760.2 506.3 758.9 502.0 757.9 497.6 C756.9 493.1 755.6 492.0 755.8 484.0 C755.9 476.0 758.3 455.3 758.8 449.5" stroke="#55c6ba" stroke-width="1.8" fill="none" opacity="1"/>
<path d="M1011.7 535.0 C1012.5 533.1 1014.5 527.1 1016.2 523.1 C1017.9 519.2 1019.9 515.2 1021.9 511.3 C1024.0 507.5 1026.2 503.7 1028.5 499.9 C1030.9 496.2 1033.3 492.5 1035.8 488.8 C1038.3 485.2 1040.9 481.6 1043.5 477.9 C1046.2 474.3 1048.9 470.6 1051.6 467.0 C1054.4 463.4 1057.2 459.8 1060.1 456.4 C1063.1 452.9 1066.1 449.5 1069.3 446.4 C1072.6 443.3 1076.0 440.3 1079.6 437.6 C1083.2 434.9 1087.0 432.5 1090.9 430.1 C1094.9 427.8 1099.0 425.6 1103.2 423.5 C1107.3 421.4 1111.5 419.5 1115.6 417.5 C1119.8 415.6 1124.0 413.8 1128.2 412.0 C1132.4 410.2 1136.7 408.5 1140.9 406.9 C1145.2 405.3 1149.5 403.7 1153.9 402.3 C1158.2 401.0 1162.5 399.7 1166.9 398.6 C1171.3 397.5 1175.7 396.5 1180.1 395.8 C1184.5 395.0 1188.9 394.3 1193.3 393.9 C1197.7 393.4 1202.1 393.2 1206.6 393.1 C1211.1 393.0 1215.7 393.1 1220.2 393.5 C1224.8 393.8 1229.4 394.3 1233.9 395.2 C1238.5 396.0 1243.0 397.0 1247.4 398.3 C1251.8 399.6 1256.2 401.1 1260.5 402.9 C1264.8 404.6 1269.0 406.6 1273.1 408.8 C1277.1 410.9 1281.1 413.3 1284.9 415.8 C1288.6 418.4 1292.3 421.1 1295.7 424.1 C1299.1 427.0 1302.3 430.1 1305.2 433.4 C1308.1 436.7 1310.8 440.2 1313.2 443.8 C1315.6 447.5 1317.7 451.3 1319.7 455.3 C1321.8 459.3 1324.0 464.5 1325.4 467.7 C1326.7 470.8 1327.6 472.9 1328.0 474.0" stroke="#b070c8" stroke-width="1.6" fill="none" opacity="1"/>
<path d="M1037.5 642.5 C1036.3 640.7 1032.5 635.5 1030.1 631.9 C1027.6 628.4 1025.1 624.9 1022.8 621.2 C1020.6 617.4 1018.3 613.5 1016.4 609.4 C1014.5 605.3 1012.8 600.7 1011.4 596.4 C1010.1 592.1 1009.1 587.8 1008.3 583.6 C1007.6 579.4 1007.1 575.3 1006.9 571.2 C1006.7 567.1 1006.7 563.1 1007.0 559.1 C1007.3 555.0 1007.9 551.0 1008.6 547.0 C1009.4 543.0 1011.2 537.0 1011.7 535.0" stroke="#55c6ba" stroke-width="1.5" fill="none" opacity="1"/>
<path d="M1038.7 579.0 C1039.8 577.1 1043.2 571.3 1045.6 567.4 C1047.9 563.5 1050.4 559.6 1052.8 555.8 C1055.2 552.0 1057.5 548.3 1060.1 544.6 C1062.6 541.0 1065.3 537.2 1068.0 533.7 C1070.7 530.1 1073.6 526.6 1076.5 523.3 C1079.3 519.9 1082.2 516.7 1085.2 513.5 C1088.3 510.3 1091.4 507.1 1094.7 504.0 C1097.9 500.9 1101.3 497.8 1104.8 494.8 C1108.2 491.8 1111.7 489.0 1115.3 486.2 C1118.9 483.4 1122.6 480.7 1126.3 478.1 C1130.1 475.5 1133.9 472.9 1137.7 470.5 C1141.6 468.1 1145.3 465.8 1149.2 463.6 C1153.2 461.5 1157.1 459.4 1161.2 457.6 C1165.4 455.8 1169.8 454.1 1174.2 452.7 C1178.5 451.2 1183.0 450.1 1187.4 448.9 C1191.8 447.8 1196.1 446.7 1200.4 445.6 C1204.8 444.5 1209.1 443.2 1213.5 442.2 C1217.8 441.2 1222.1 440.2 1226.6 439.7 C1231.1 439.2 1235.7 439.0 1240.4 439.3 C1245.1 439.7 1250.0 440.6 1254.8 441.8 C1259.5 442.9 1264.4 444.7 1268.9 446.4 C1273.4 448.1 1278.6 450.7 1281.7 452.1 C1284.8 453.5 1286.5 454.5 1287.5 455.0" stroke="#a070a8" stroke-width="1.8" fill="none" opacity="0.9"/>
<path d="M1287.5 455.0 C1285.8 455.2 1280.8 455.9 1277.1 456.4 C1273.4 457.0 1269.2 457.6 1265.1 458.3 C1260.9 459.1 1256.2 460.0 1251.9 461.0 C1247.7 462.0 1243.4 463.1 1239.4 464.3 C1235.4 465.5 1231.7 466.8 1227.8 468.1 C1224.0 469.5 1220.2 470.9 1216.4 472.4 C1212.6 474.0 1208.7 475.6 1204.9 477.2 C1201.0 478.9 1197.2 480.6 1193.4 482.4 C1189.6 484.2 1185.8 486.1 1182.1 488.0 C1178.3 490.0 1174.6 491.9 1170.9 494.0 C1167.2 496.1 1163.5 498.2 1159.9 500.4 C1156.2 502.5 1152.6 504.8 1149.0 507.1 C1145.4 509.4 1141.8 511.7 1138.3 514.1 C1134.8 516.5 1131.3 519.0 1127.9 521.5 C1124.4 524.1 1121.0 526.7 1117.6 529.4 C1114.2 532.1 1110.9 534.8 1107.6 537.5 C1104.3 540.3 1101.2 543.0 1098.0 545.7 C1094.9 548.4 1091.9 551.0 1088.7 553.8 C1085.6 556.6 1082.3 559.4 1079.2 562.3 C1076.0 565.2 1072.8 568.1 1069.7 571.1 C1066.7 574.1 1062.5 578.7 1061.1 580.2" stroke="#96709a" stroke-width="2.2" fill="none" opacity="0.9"/>
<path d="M908.0 250.0 C911.0 257.3 923.0 286.7 926.0 294.0" stroke="#c04a9a" stroke-width="1.8" fill="none" opacity="1"/>
<path d="M926.0 294.0 C938.3 306.3 975.5 343.5 1000.0 368.0 C1024.5 392.5 1060.8 428.8 1073.0 441.0" stroke="#c04a9a" stroke-width="1.6" fill="none" opacity="1"/>
<path d="M1195.0 220.0 C1192.8 224.7 1184.2 243.3 1182.0 248.0" stroke="#c04a9a" stroke-width="1.8" fill="none" opacity="1"/>
<path d="M1182.0 248.0 C1183.3 260.0 1186.0 296.0 1190.0 320.0 C1194.0 344.0 1203.3 380.0 1206.0 392.0" stroke="#c04a9a" stroke-width="1.6" fill="none" opacity="1"/>
<path d="M1206.0 392.0 C1210.3 399.5 1227.7 429.5 1232.0 437.0" stroke="#c070c0" stroke-width="1.6" fill="none" opacity="1"/>
<path d="M598.0 408.0 C593.7 418.3 579.4 450.3 572.0 470.0 C564.6 489.7 556.8 516.7 553.7 526.0" stroke="#c04a9a" stroke-width="1.5" fill="none" opacity="1"/>
<path d="M757.5 449.0 C747.9 451.1 717.9 456.9 700.0 461.7 C682.1 466.4 666.7 471.1 650.0 477.5 C633.3 483.9 616.0 491.9 600.0 500.0 C584.0 508.1 561.4 521.7 553.7 526.0" stroke="#aab2f4" stroke-width="1.8" fill="none" opacity="0.9"/>
<path d="M553.7 526.0 C547.2 531.7 527.1 544.3 515.0 560.0 C502.9 575.7 486.7 610.0 481.0 620.0" stroke="#aab2f4" stroke-width="1.6" fill="none" opacity="0.8"/>
<path d="M553.7 526.0 C552.2 536.7 548.0 568.9 545.0 590.0 C542.0 611.1 537.5 642.1 536.0 652.5" stroke="#55c6ba" stroke-width="1.6" fill="none" opacity="1"/>
<path d="M845.0 597.5 C837.9 607.1 809.6 645.4 802.5 655.0" stroke="#6ab0d8" stroke-width="1.6" fill="none" opacity="1"/>
<path d="M802.5 655.0 C808.5 659.8 832.7 679.2 838.7 684.0" stroke="#55c6ba" stroke-width="1.6" fill="none" opacity="1"/>
<path d="M536.0 652.5 C546.2 654.4 587.2 662.1 597.5 664.0" stroke="#55c6ba" stroke-width="1.5" fill="none" opacity="1"/>
<path d="M757.5 449.0 C771.2 451.3 812.9 456.2 840.0 463.0 C867.1 469.8 891.5 478.0 920.0 490.0 C948.5 502.0 995.8 527.5 1011.0 535.0" stroke="#dccca4" stroke-width="2" fill="none" opacity="0.85"/>
<path d="M845.0 597.5 C857.5 600.1 895.8 608.9 920.0 613.0 C944.2 617.1 972.3 619.8 990.0 622.0 C1007.7 624.2 1020.0 625.3 1026.0 626.0" stroke="#c8b468" stroke-width="1.8" fill="none" opacity="0.8"/>
<path d="M1491.0 461.0 C1475.8 465.4 1423.5 478.9 1400.0 487.5 C1376.5 496.1 1362.5 505.0 1350.0 512.5 C1337.5 520.0 1329.2 529.2 1325.0 532.5" stroke="#e2bc94" stroke-width="2" fill="none" opacity="0.85"/>
<path d="M1491.0 461.0 C1497.8 462.0 1525.2 466.0 1532.0 467.0" stroke="#a8b8f0" stroke-width="1.6" fill="none" opacity="1"/>
<path d="M1011.0 535.0 C1015.7 542.3 1034.3 571.7 1039.0 579.0" stroke="#ffffff" stroke-width="1.8" fill="none" opacity="0.9"/>
<path d="M1039.0 579.0 C1038.0 583.3 1033.3 594.8 1033.0 605.0 C1032.7 615.2 1036.3 634.2 1037.0 640.0" stroke="#55c6ba" stroke-width="1.3" fill="none" opacity="0.9"/>
<path d="M1076.0 648.0 C1075.4 654.5 1073.1 680.5 1072.5 687.0" stroke="#55c6ba" stroke-width="1.8" fill="none" opacity="1"/>
<path d="M1435.0 594.0 C1440.5 602.9 1462.5 638.6 1468.0 647.5" stroke="#e8e8f0" stroke-width="1.6" fill="none" opacity="1"/>
<path d="M1470.0 560.0 C1470.2 562.0 1471.1 567.8 1471.5 571.9 C1471.9 575.9 1472.4 580.1 1472.6 584.3 C1472.9 588.5 1473.1 592.9 1473.1 597.2 C1473.1 601.5 1472.9 605.8 1472.7 610.0 C1472.4 614.2 1472.1 618.4 1471.6 622.6 C1471.1 626.7 1470.5 630.8 1469.8 634.9 C1469.1 639.0 1467.8 645.0 1467.4 647.0" stroke="#b868b8" stroke-width="1.5" fill="none" opacity="1"/>
<path d="M1467.4 647.0 C1466.9 649.0 1465.4 655.0 1464.2 658.9 C1463.0 662.9 1461.7 666.8 1460.3 670.7 C1458.8 674.6 1457.2 678.6 1455.5 682.4 C1453.8 686.3 1451.9 690.2 1450.0 694.0 C1448.0 697.7 1445.9 701.5 1443.8 705.2 C1441.7 708.8 1439.4 712.4 1437.2 716.0 C1434.9 719.6 1432.5 723.1 1430.2 726.6 C1427.8 730.2 1425.4 733.7 1423.0 737.3 C1420.5 740.9 1418.0 744.6 1415.5 748.2 C1413.0 751.8 1410.4 755.4 1407.7 758.8 C1405.1 762.3 1402.3 765.7 1399.5 768.9 C1396.6 772.1 1393.6 775.2 1390.5 778.1 C1387.4 781.0 1384.1 783.7 1380.8 786.4 C1377.5 789.0 1374.0 791.5 1370.5 793.9 C1367.0 796.3 1363.4 798.6 1359.8 800.9 C1356.1 803.1 1352.4 805.2 1348.7 807.3 C1344.9 809.5 1341.1 811.5 1337.2 813.5 C1333.4 815.6 1329.5 817.6 1325.5 819.5 C1321.5 821.4 1317.5 823.3 1313.5 825.2 C1309.4 827.0 1305.3 828.8 1301.2 830.5 C1297.0 832.2 1292.9 833.9 1288.7 835.5 C1284.5 837.1 1280.4 838.6 1276.2 840.0 C1272.0 841.5 1267.7 842.8 1263.5 844.1 C1259.3 845.4 1255.1 846.6 1250.8 847.7 C1246.6 848.9 1242.4 849.9 1238.2 850.9 C1234.1 851.8 1229.9 852.7 1225.8 853.5 C1221.6 854.3 1217.5 855.0 1213.4 855.5 C1209.2 856.0 1205.1 856.4 1200.9 856.7 C1196.7 857.0 1192.5 857.1 1188.4 857.0 C1184.2 857.0 1180.0 856.7 1175.8 856.4 C1171.6 856.1 1167.4 855.6 1163.1 855.1 C1158.9 854.6 1154.7 854.0 1150.4 853.3 C1146.2 852.6 1142.0 851.8 1137.7 850.9 C1133.5 850.1 1129.3 849.2 1125.1 848.1 C1120.9 847.0 1116.7 845.9 1112.6 844.5 C1108.5 843.2 1104.3 841.7 1100.3 840.1 C1096.3 838.4 1092.3 836.6 1088.4 834.7 C1084.5 832.8 1080.7 830.7 1077.0 828.5 C1073.3 826.3 1069.6 823.9 1066.0 821.4 C1062.5 818.9 1059.0 816.3 1055.7 813.5 C1052.3 810.7 1049.1 807.7 1046.0 804.6 C1043.0 801.5 1040.0 798.3 1037.2 794.9 C1034.4 791.6 1031.7 788.1 1029.0 784.5 C1026.4 780.9 1023.9 777.1 1021.4 773.3 C1019.0 769.5 1016.6 765.5 1014.3 761.5 C1011.9 757.5 1009.7 753.5 1007.5 749.4 C1005.3 745.3 1003.1 741.1 1000.9 737.1 C998.6 733.0 996.4 728.9 994.1 724.9 C991.8 721.0 988.9 716.1 987.2 713.2 C985.5 710.3 984.3 708.5 983.7 707.5" stroke="#55c6ba" stroke-width="1.8" fill="none" opacity="1"/>
<path d="M983.7 707.5 C991.0 705.8 1012.7 700.9 1027.5 697.5 C1042.3 694.1 1065.0 688.8 1072.5 687.0" stroke="#62b0a8" stroke-width="1.5" fill="none" opacity="1"/>
<path d="M1072.5 687.0 C1079.2 696.5 1101.2 727.0 1112.5 743.7 C1123.8 760.5 1128.6 768.5 1140.0 787.5 C1151.4 806.5 1174.2 845.8 1181.0 857.5" stroke="#55c6ba" stroke-width="1.8" fill="none" opacity="1"/>
<path d="M983.7 707.5 C992.4 712.5 1021.2 725.6 1036.0 737.5 C1050.8 749.4 1066.4 771.8 1072.5 778.7" stroke="#62b0a8" stroke-width="1.6" fill="none" opacity="1"/>
<path d="M983.7 707.5 C992.4 712.5 1021.6 731.7 1036.0 737.5 C1050.4 743.3 1057.2 741.5 1070.0 742.5 C1082.8 743.5 1095.8 744.3 1112.5 743.7 C1129.2 743.1 1147.9 743.9 1170.0 738.7 C1192.1 733.5 1222.1 722.7 1245.0 712.5 C1267.9 702.3 1290.8 688.8 1307.5 677.5 C1324.2 666.2 1338.8 650.4 1345.0 645.0" stroke="#62b0a8" stroke-width="1.5" fill="none" opacity="1"/>
<path d="M983.7 707.5 C989.8 714.2 1005.2 735.6 1020.0 747.5 C1034.8 759.4 1052.5 772.0 1072.5 778.7 C1092.5 785.4 1119.6 786.9 1140.0 787.5 C1160.4 788.1 1173.3 787.5 1195.0 782.5 C1216.7 777.5 1245.0 770.4 1270.0 757.5 C1295.0 744.6 1323.7 724.1 1345.0 705.0 C1366.3 685.9 1386.3 659.2 1398.0 643.0 C1409.7 626.8 1412.2 613.8 1415.0 608.0" stroke="#62b0a8" stroke-width="1.5" fill="none" opacity="1"/>
<path d="M983.7 707.5 C981.7 706.9 975.7 705.1 971.6 704.0 C967.4 702.9 962.9 701.7 958.6 700.7 C954.2 699.7 949.8 698.7 945.4 697.9 C941.1 697.1 936.8 696.4 932.6 695.7 C928.5 695.0 924.3 694.4 920.3 693.8 C916.3 693.3 912.4 692.8 908.5 692.2 C904.5 691.7 900.6 691.3 896.5 690.8 C892.4 690.3 888.2 689.8 884.0 689.3 C879.7 688.7 875.2 688.2 870.8 687.7 C866.3 687.1 861.8 686.6 857.3 686.0 C852.8 685.5 848.4 684.9 843.9 684.3 C839.4 683.7 834.8 683.1 830.3 682.4 C825.8 681.7 821.2 680.9 816.8 680.2 C812.4 679.4 808.3 678.6 804.0 677.8 C799.7 677.0 795.6 676.2 791.3 675.3 C787.0 674.4 782.6 673.6 778.2 672.7 C773.9 671.8 769.5 670.9 765.2 670.0 C761.0 669.1 756.8 668.3 752.5 667.4 C748.3 666.5 744.2 665.7 740.0 664.8 C735.8 664.0 731.7 663.2 727.5 662.4 C723.3 661.6 719.1 660.8 714.9 660.1 C710.7 659.4 706.4 658.7 702.1 658.1 C697.9 657.5 693.6 656.9 689.4 656.3 C685.2 655.8 681.0 655.3 676.8 654.9 C672.6 654.5 668.5 654.2 664.3 654.0 C660.1 653.8 655.8 653.7 651.7 653.7 C647.5 653.7 643.3 653.9 639.2 654.2 C635.0 654.6 630.9 655.1 626.7 655.9 C622.6 656.6 618.3 657.6 614.3 658.7 C610.3 659.7 605.6 661.2 602.8 662.0 C600.0 662.8 598.4 663.4 597.5 663.7" stroke="#55c6ba" stroke-width="1.6" fill="none" opacity="1"/>
<path d="M536.0 652.5 C534.3 653.5 529.4 656.2 525.8 658.3 C522.2 660.4 518.2 662.7 514.4 665.1 C510.5 667.6 506.5 670.2 502.9 672.9 C499.3 675.6 495.8 678.4 492.7 681.4 C489.6 684.4 486.7 687.4 484.2 690.8 C481.7 694.1 479.4 697.7 477.6 701.4 C475.7 705.2 474.3 709.3 473.2 713.5 C472.0 717.6 471.3 721.9 470.8 726.2 C470.3 730.5 470.1 734.9 470.0 739.3 C469.9 743.7 470.1 748.1 470.3 752.6 C470.5 757.0 470.9 761.6 471.4 766.0 C471.8 770.4 472.3 774.7 473.0 778.9 C473.6 783.2 474.2 787.2 475.0 791.3 C475.8 795.4 476.6 799.4 477.6 803.4 C478.5 807.5 479.5 811.6 480.6 815.8 C481.7 819.9 482.9 824.2 484.2 828.5 C485.5 832.8 486.9 837.2 488.4 841.4 C489.9 845.6 491.4 849.8 493.1 853.8 C494.9 857.8 496.8 861.7 498.9 865.4 C501.1 869.1 504.8 874.2 506.0 876.0" stroke="#55c6ba" stroke-width="2" fill="none" opacity="1"/>
<path d="M506.0 876.0 C509.6 875.2 519.2 873.0 527.5 871.0 C535.8 869.0 551.2 864.9 556.0 863.7" stroke="#55c6ba" stroke-width="1.6" fill="none" opacity="1"/>
<path d="M556.0 863.7 C555.1 862.5 552.3 859.3 550.5 856.5 C548.7 853.7 546.8 850.4 545.2 846.8 C543.6 843.3 542.0 839.2 540.7 835.3 C539.4 831.3 538.3 827.2 537.4 823.2 C536.4 819.1 535.6 815.0 534.8 810.9 C534.0 806.8 533.3 802.7 532.7 798.6 C532.0 794.4 531.4 790.3 530.9 786.1 C530.5 781.8 530.1 777.5 530.0 773.1 C529.8 768.7 529.8 764.2 530.0 759.6 C530.2 755.1 530.7 750.4 531.3 746.0 C531.9 741.6 532.7 737.0 533.5 733.0 C534.4 729.0 535.3 725.3 536.5 721.7 C537.7 718.2 539.0 715.2 540.7 711.8 C542.4 708.4 544.3 704.9 546.7 701.3 C549.1 697.7 551.8 693.8 554.9 690.3 C558.0 686.7 561.4 683.3 565.2 680.3 C569.0 677.2 573.4 674.5 577.7 672.2 C582.0 669.8 587.7 667.6 591.0 666.2 C594.3 664.8 596.4 664.1 597.5 663.7" stroke="#55c6ba" stroke-width="2.2" fill="none" opacity="1"/>
<path d="M471.0 721.0 C481.8 721.0 525.2 721.0 536.0 721.0" stroke="#55c6ba" stroke-width="1.6" fill="none" opacity="1"/>
<path d="M477.5 803.7 C486.9 803.9 524.3 804.8 533.7 805.0" stroke="#55c6ba" stroke-width="1.6" fill="none" opacity="1"/>
<path d="M555.0 692.0 C555.8 697.3 559.2 718.4 560.0 723.7" stroke="#b0c0e8" stroke-width="1.4" fill="none" opacity="1"/>
<path d="M560.0 723.7 C555.6 737.2 538.1 791.5 533.7 805.0" stroke="#55c6ba" stroke-width="1.6" fill="none" opacity="1"/>
<path d="M560.0 723.7 C562.8 740.4 574.2 807.0 577.0 823.7" stroke="#b8bcf0" stroke-width="1.6" fill="none" opacity="1"/>
<g clip-path="url(#cRim)"><circle cx="483" cy="620" r="7" fill="#8fb2f6"/><circle cx="517" cy="530" r="6" fill="#c3cdf3"/></g>
<g fill="#7ba6f7"><circle cx="908" cy="250" r="7"/><circle cx="1195" cy="220" r="7"/><circle cx="926" cy="294" r="7"/><circle cx="1182" cy="248" r="7"/><circle cx="598" cy="408" r="6.5"/><circle cx="758" cy="449" r="7"/><circle cx="1073" cy="441" r="7"/><circle cx="1206" cy="392" r="7"/><circle cx="1232" cy="437" r="6.5"/><circle cx="1287" cy="455" r="6.5"/><circle cx="1491" cy="461" r="7"/><circle cx="1532" cy="467" r="7"/><circle cx="553" cy="526" r="6"/><circle cx="1011" cy="535" r="7"/><circle cx="1325" cy="532" r="6.5"/><circle cx="1039" cy="579" r="6.5"/><circle cx="845" cy="598" r="7"/><circle cx="1026" cy="626" r="6.5"/><circle cx="536" cy="653" r="7.5"/><circle cx="598" cy="664" r="6.5"/><circle cx="802" cy="655" r="7.5"/><circle cx="838" cy="684" r="6.5"/><circle cx="1076" cy="648" r="7.5"/><circle cx="1072" cy="687" r="7.5"/><circle cx="1468" cy="648" r="6.5"/><circle cx="985" cy="707" r="6"/><circle cx="471" cy="720" r="7"/><circle cx="537" cy="721" r="6.5"/><circle cx="559" cy="723" r="6"/><circle cx="590" cy="742" r="6"/><circle cx="1036" cy="737" r="6"/><circle cx="1112" cy="744" r="6.5"/><circle cx="1072" cy="779" r="6.5"/><circle cx="1140" cy="787" r="7"/><circle cx="478" cy="803" r="7"/><circle cx="533" cy="804" r="7"/><circle cx="577" cy="824" r="6.5"/><circle cx="1181" cy="858" r="7"/><circle cx="506" cy="876" r="7"/><circle cx="556" cy="864" r="6.5"/></g>
</svg>
<div class="tb" style="left:279px;top:20.5px"><svg viewBox="0 0 34 34" fill="none" stroke="#dedede" stroke-width="1.5" stroke-linecap="round" stroke-linejoin="round"><path d="M8.500 27.500 C12 22 15 21.500 19.500 19.500 C24 17.500 27.500 13 28.500 8.500" stroke-width="2"/><circle cx="20" cy="19" r="2.600" fill="#333" stroke-width="1.600"/><path d="M7 13 V7 H9.500 a1.800 1.800 0 0 1 0 3.600 H7" stroke="#8a8a8a" stroke-width="1.200"/><path d="M12.500 12 h3 v-2" stroke="#8a8a8a" stroke-width="1"/></svg></div>

<div class="tl" style="left:296px;top:61px">+Vertex</div>
<div class="tb" style="left:325px;top:20.5px"><svg viewBox="0 0 34 34" fill="none" stroke="#dedede" stroke-width="1.5" stroke-linecap="round" stroke-linejoin="round"><path d="M6.500 6.500 V23 L13 26.500 M27.500 6.500 V23 L21 26.500 M6.500 6.500 L13 10 M27.500 6.500 L21 10" stroke="#8a8a8a" stroke-width="1.200"/><path d="M17 12.500 V22.500" stroke-width="1.800"/><circle cx="17" cy="10.200" r="2.500" fill="#333"/><circle cx="17" cy="25" r="2.500" fill="#333"/></svg></div>

<div class="tl" style="left:342px;top:61px">+Edge</div>
<div class="tb" style="left:365px;top:20.5px"><svg viewBox="0 0 34 34" fill="none" stroke="#dedede" stroke-width="1.5" stroke-linecap="round" stroke-linejoin="round"><rect x="7" y="6.500" width="20" height="21" stroke="#8a8a8a" stroke-width="1" stroke-dasharray="1.500 1.200"/><path d="M9 17 H25 M17 9 V25" stroke-width="1.600"/><circle cx="17" cy="6.500" r="2.300" fill="#333"/><circle cx="17" cy="27.500" r="2.300" fill="#333"/><circle cx="6.500" cy="17" r="2.300" fill="#333"/><circle cx="27.500" cy="17" r="2.300" fill="#333"/><circle cx="17" cy="17" r="1.600" fill="#333" stroke-width="1.200"/></svg></div>

<div class="tl" style="left:382px;top:61px">Split</div>
<div class="tb" style="left:404px;top:20.5px"><svg viewBox="0 0 34 34" fill="none" stroke="#dedede" stroke-width="1.5" stroke-linecap="round" stroke-linejoin="round"><path d="M8 12 L17 7 L26 12 L17 16.500Z M8 12 V15 M26 12 V15 M8 20.500 V23.500 L17 28 L26 23.500 V20.500 M17 22 V28" stroke="#8a8a8a" stroke-width="1.300" fill="#555"/><path d="M5 16.500 C9 14.500 12 20.500 17 21 C22 20.500 25 14.500 29.500 16.500" stroke-width="2"/></svg></div>

<div class="tl" style="left:421px;top:61px">Carve</div>
<div class="tb dim" style="left:443px;top:20.5px"><svg viewBox="0 0 34 34" fill="none" stroke="#484848" stroke-width="1.5" stroke-linecap="round" stroke-linejoin="round"><path d="M9 10.500 L25.500 7.500 L25.500 27 L9 24Z"/><path d="M12.500 13 L22.500 11.500 L22.500 23 L12.500 21.500Z" stroke-width="1"/><circle cx="9" cy="10" r="2" fill="#1c1c1c"/><circle cx="26" cy="7.500" r="2" fill="#1c1c1c"/><circle cx="26" cy="27" r="2" fill="#1c1c1c"/><circle cx="9" cy="24.500" r="2" fill="#1c1c1c"/></svg></div>

<div class="tl" style="left:460px;top:61px;color:#a0a0a0">Offset</div>
<div class="tb" style="left:519px;top:20.5px"><svg viewBox="0 0 34 34" fill="none" stroke="#dedede" stroke-width="1.5" stroke-linecap="round" stroke-linejoin="round"><rect x="9.500" y="9" width="6" height="6" fill="#4a4a4a" stroke="none"/><rect x="19.500" y="9" width="6" height="6" fill="#4a4a4a" stroke="none"/><rect x="9.500" y="19" width="6" height="6" fill="#4a4a4a" stroke="none"/><rect x="19.500" y="19" width="6" height="6" fill="#4a4a4a" stroke="none"/><path d="M17.500 8 V26 M8 17 H27" stroke="#8a8a8a" stroke-width="1" stroke-dasharray="2 1.500"/><rect x="7" y="6.500" width="21" height="21" stroke-width="2" stroke-linejoin="miter"/><circle cx="17.500" cy="6.500" r="1.400" fill="#333" stroke="#8a8a8a" stroke-width="0.800"/><circle cx="17.500" cy="27.500" r="1.400" fill="#333" stroke="#8a8a8a" stroke-width="0.800"/><circle cx="7" cy="17" r="1.400" fill="#333" stroke="#8a8a8a" stroke-width="0.800"/><circle cx="28" cy="17" r="1.400" fill="#333" stroke="#8a8a8a" stroke-width="0.800"/></svg></div>

<div class="tl" style="left:536px;top:61px">Dissolve</div>
<div class="tb dim" style="left:569px;top:20.5px"><svg viewBox="0 0 34 34" fill="none" stroke="#484848" stroke-width="1.6" stroke-linecap="round" stroke-linejoin="round"><circle cx="17" cy="17.500" r="8.500"/><path d="M13.500 14 L20.500 21 M20.500 14 L13.500 21"/></svg></div>
<div class="ul" style="left:572px;top:50px;background:linear-gradient(90deg,#bcaa2a 0,#bcaa2a 62%,#cfcfcf 62%)"></div>
<div class="tl" style="left:586px;top:61px;color:#a0a0a0">Delete</div>
<div class="tb" style="left:612px;top:20.5px"><svg viewBox="0 0 34 34" fill="none" stroke="#dedede" stroke-width="1.5" stroke-linecap="round" stroke-linejoin="round"><path d="M17 9 V27" stroke-width="2.400"/><circle cx="17" cy="8" r="1.800" fill="#dedede" stroke-width="1"/><path d="M12.500 13 H21.500" stroke-width="1.800"/><path d="M7.500 20 C9 25.500 13 27.500 17 27.500 C21 27.500 25 25.500 26.500 20" stroke-width="2.400"/><path d="M5.500 22.500 L7.300 18.500 L10.500 21.500Z M28.500 22.500 L26.700 18.500 L23.500 21.500Z" fill="#dedede" stroke-width="1"/></svg></div>

<div class="tl" style="left:629px;top:61px">Fix</div>
<div class="tb" style="left:680px;top:20.5px"><svg viewBox="0 0 34 34" fill="none" stroke="#dedede" stroke-width="1.5" stroke-linecap="round" stroke-linejoin="round"><ellipse cx="17" cy="24.500" rx="10" ry="3.800" stroke="#8a8a8a" stroke-width="1.400"/><path d="M9 16 H25 M17 7.500 V24" stroke-width="1.800"/><path d="M14 10 L17 6.500 L20 10 M14 21.500 L17 25 L20 21.500 M11.500 13 L8 16 L11.500 19 M22.500 13 L26 16 L22.500 19" stroke-width="1.800"/></svg></div>

<div class="tl" style="left:697px;top:61px">Move</div>
<div class="tb" style="left:719px;top:20.5px"><svg viewBox="0 0 34 34" fill="none" stroke="#dedede" stroke-width="1.5" stroke-linecap="round" stroke-linejoin="round"><rect x="7" y="6.500" width="21" height="21" stroke="#8a8a8a" stroke-width="1.200" stroke-dasharray="1.600 1.400"/><rect x="7" y="17.500" width="10" height="10" fill="#f5c22e" stroke="none"/><path d="M19.500 15 L24.500 10 M20 9.500 H25 V14.500" stroke-width="1.800"/></svg></div>

<div class="tl" style="left:736px;top:61px">Scale</div>
<div class="tb dim" style="left:760px;top:20.5px"><svg viewBox="0 0 34 34" fill="none" stroke="#3c3c3c" stroke-width="1.5" stroke-linecap="round" stroke-linejoin="round"><circle cx="17" cy="12" r="3.600" stroke-width="2"/><path d="M11 20 l3 4 M14 20 l-3 4 M16 20 l1.500 2.500 M19 20 l-2.500 5 M21 20 h3 l-3 4 h3" stroke-width="1.200"/></svg></div>
<div class="ul" style="left:763px;top:50px;background:#bdbdbd"></div>
<div class="tl" style="left:777px;top:61px;color:#a0a0a0">Place</div>
<div class="tb" style="left:836px;top:20.5px"><svg viewBox="0 0 34 34" fill="none" stroke="#dedede" stroke-width="1.5" stroke-linecap="round" stroke-linejoin="round"><path d="M5.500 21.500 L17 15 L28.500 21.500 L17 28Z" stroke="#eee" stroke-width="1.800" fill="#333"/><path d="M10.500 21 L17 17.300 L23.500 21 L17 24.700Z" fill="#d9a520" stroke="none"/><path d="M13 19 L17 16.500 L21 19 L17 21.500Z" fill="#f7d35a" stroke="none"/><path d="M17 13.500 V9" stroke-width="1.600"/><path d="M14.500 9.500 L17 6.500 L19.500 9.500Z" fill="#dedede" stroke-width="1"/></svg></div>
<div class="ul" style="left:839px;top:50px;background:#d2c87a"></div>
<div class="tl" style="left:853px;top:61px">Popout</div>
<div class="tb dim" style="left:881px;top:20.5px"><svg viewBox="0 0 34 34" fill="none" stroke="#4c4c4c" stroke-width="1.6" stroke-linecap="round" stroke-linejoin="round"><ellipse cx="17" cy="14" rx="9" ry="3.800"/><path d="M8 14 V21.500 C8 26.500 26 26.500 26 21.500 V14" /><ellipse cx="17" cy="14.300" rx="5" ry="1.800" fill="#7a6420" stroke="none"/><path d="M17 5.500 V10 M17 25.500 V29.500"/></svg></div>

<div class="tl" style="left:898px;top:61px;color:#a0a0a0">Hole</div>
<div class="tb dim" style="left:924px;top:20.5px"><svg viewBox="0 0 34 34" fill="none" stroke="#dedede" stroke-width="1.5" stroke-linecap="round" stroke-linejoin="round"><path d="M8.500 26 C8.500 16 13 9.500 20.500 8.500 C24.500 8.500 25.500 11 25.500 14 V26" stroke="#5e5426" stroke-width="2.400"/></svg></div>
<div class="ul" style="left:927px;top:50px;background:#bdbdbd"></div>
<div class="tl" style="left:941px;top:61px;color:#a0a0a0">Bridge</div>
<div class="tb" style="left:999px;top:20.5px"><svg viewBox="0 0 34 34" fill="none" stroke="#dedede" stroke-width="1.5" stroke-linecap="round" stroke-linejoin="round"><path d="M5 17 L16.500 10 L28.500 17 L16.500 24Z" stroke-width="2" fill="#3c3c3c"/></svg></div>

<div class="tl" style="left:1016px;top:61px">Flatten</div>
<div class="tb dim" style="left:1044px;top:20.5px"><svg viewBox="0 0 34 34" fill="none" stroke="#3e3e3e" stroke-width="1.4" stroke-linecap="round" stroke-linejoin="round"><path d="M11 18.500 H22"/><circle cx="9" cy="18.500" r="2.200"/><circle cx="24.500" cy="18.500" r="2.200"/><path d="M10 15 C13 11.500 20 11.500 23.500 15" stroke-width="1"/></svg></div>
<div class="ul" style="left:1047px;top:50px;background:#bdbdbd"></div>
<div class="tl" style="left:1061px;top:61px;color:#a0a0a0">Linear</div>
<div class="tb dim" style="left:1093px;top:20.5px"><svg viewBox="0 0 34 34" fill="none" stroke="#404040" stroke-width="1.5" stroke-linecap="round" stroke-linejoin="round"><path d="M17 8.500 C23 8.500 26 13 25.500 18 C25 23.500 21 26.500 16.500 26 C11.500 25.500 8.500 21 10 16 C11 12.500 13.500 9 17 8.500Z"/><circle cx="17" cy="8.500" r="1.600"/><circle cx="11" cy="21.500" r="1.600"/><path d="M17 12 V23" stroke-width="1"/></svg></div>
<div class="ul" style="left:1096px;top:50px;background:#bdbdbd"></div>
<div class="tl" style="left:1110px;top:61px;color:#a0a0a0">Circular</div>
<div class="tb" style="left:1142px;top:20.5px"><svg viewBox="0 0 34 34" fill="none" stroke="#dedede" stroke-width="1.5" stroke-linecap="round" stroke-linejoin="round"><rect x="10" y="8.500" width="10" height="11" rx="1" fill="#333"/><rect x="13" y="11.500" width="10" height="11" rx="1" fill="#333"/><rect x="16" y="14.500" width="10" height="11.500" rx="1" fill="#333"/></svg></div>
<div class="ul" style="left:1145px;top:50px;background:#c4b22a"></div>
<div class="tl" style="left:1159px;top:61px">Copy</div>
<div class="tb dim" style="left:1221px;top:20.5px"><svg viewBox="0 0 34 34" fill="none" stroke="#dedede" stroke-width="1.5" stroke-linecap="round" stroke-linejoin="round"><path d="M10 25.500 C11 19 13 13.500 18.500 8 M12.500 21 C15 14 20.500 10 27 9.500" stroke="#47453a" stroke-width="1.600"/></svg></div>
<div class="ul" style="left:1224px;top:50px;background:#bdbdbd"></div>
<div class="tl" style="left:1238px;top:61px;color:#a0a0a0">Tangent</div>
<div class="tb" style="left:1277px;top:20.5px"><svg viewBox="0 0 34 34" fill="none" stroke="#dedede" stroke-width="1.5" stroke-linecap="round" stroke-linejoin="round"><path d="M9 24.500 L13.500 12.500 M13.500 12.500 C19 13.500 24 18 26 24" stroke="#c8c8c8" stroke-width="1.500"/><circle cx="13.500" cy="11.500" r="1.900" fill="#333" stroke-width="1.300"/><circle cx="9" cy="25" r="1.900" fill="#333" stroke-width="1.300"/><circle cx="26.500" cy="25" r="1.900" fill="#333" stroke-width="1.300"/></svg></div>
<div class="ul" style="left:1280px;top:50px;background:#c4b22a"></div>
<div class="tl" style="left:1294px;top:61px">Smooth</div>
<div class="tb" style="left:1355px;top:20.5px"><svg viewBox="0 0 34 34" fill="none" stroke="#dedede" stroke-width="1.5" stroke-linecap="round" stroke-linejoin="round"><path d="M17.500 7.500 V27" stroke="#8a8a8a" stroke-width="1.500" stroke-dasharray="2 1.500"/><path d="M10.500 12 L14.500 14 V20 L10.500 22 L6.500 20 V14Z" fill="#d0d0d0" stroke="none"/><path d="M10.500 17 V22 L14.500 20 V14Z" fill="#8e8e8e" stroke="none"/><path d="M24.500 12 L28.500 14 V20 L24.500 22 L20.500 20 V14Z" fill="#f5c22e" stroke="none"/><path d="M24.500 17 V22 L20.500 20 V14Z" fill="#b58a14" stroke="none"/></svg></div>
<div class="ul" style="left:1358px;top:50px;background:#9c9c9c"></div>
<div class="tl" style="left:1372px;top:61px">Mirror</div>
<div class="tb" style="left:1411px;top:20.5px"><svg viewBox="0 0 34 34" fill="none" stroke="#dedede" stroke-width="1.5" stroke-linecap="round" stroke-linejoin="round"><path d="M7 17.500 H27" stroke="#8a8a8a" stroke-width="1.500"/><path d="M14.500 8 L21.500 11 V27 L14.500 23Z" fill="#f5c22e" stroke="none"/><path d="M17 13 L21.500 11 V27 L19 25.500Z" fill="#c89a18" stroke="none"/><path d="M16 17.500 H24" stroke="#b0b0b0" stroke-width="1.500"/></svg></div>
<div class="ul" style="left:1414px;top:50px;background:#c4b22a"></div>
<div class="tl" style="left:1428px;top:61px">Symmetry</div>
<div class="tb" style="left:1503px;top:20.5px"><svg viewBox="0 0 34 34" fill="none" stroke="#dedede" stroke-width="1.5" stroke-linecap="round" stroke-linejoin="round"><path d="M26.9 15.4 L26.9 18.6 L24.6 18.8 L23.6 21.1 L25.1 22.9 L22.9 25.1 L21.1 23.6 L18.8 24.6 L18.6 26.9 L15.4 26.9 L15.2 24.6 L12.9 23.6 L11.1 25.1 L8.9 22.9 L10.4 21.1 L9.4 18.8 L7.1 18.6 L7.1 15.4 L9.4 15.2 L10.4 12.9 L8.9 11.1 L11.1 8.9 L12.9 10.4 L15.2 9.4 L15.4 7.1 L18.6 7.1 L18.8 9.4 L21.1 10.4 L22.9 8.9 L25.1 11.1 L23.6 12.9 L24.6 15.2Z" stroke-width="1.600"/><circle cx="17" cy="17" r="3.800" stroke-width="1.600"/></svg></div>
<div class="ul" style="left:1506px;top:50px;background:#c4b22a"></div>
<div class="tl" style="left:1520px;top:61px">Settings</div>
<div class="tb" style="left:1554px;top:20.5px"><svg viewBox="0 0 34 34" fill="none" stroke="#dedede" stroke-width="1.5" stroke-linecap="round" stroke-linejoin="round"><circle cx="14" cy="13.500" r="6.300" stroke-width="2"/><path d="M18.800 18.300 L26.500 26" stroke-width="2.400"/><path d="M11.500 13 a3 3 0 0 1 3 -2.600" stroke="#8a8a8a" stroke-width="1"/></svg></div>

<div class="tl" style="left:1571px;top:61px">Search</div>
<div class="dot" style="left:1291.5px;top:8.0px"></div>
<div class="tb" style="left:1812px;top:26px"><svg viewBox="0 0 34 34" fill="none" stroke="#dedede" stroke-width="1.5" stroke-linecap="round" stroke-linejoin="round"><circle cx="17" cy="17" r="9.500" stroke-width="1.500"/><path d="M15.500 15.500 H17.800 V22 M15 22.300 H20" stroke-width="1.800" stroke-linecap="butt"/><circle cx="17.200" cy="12.300" r="1.400" fill="#dedede" stroke="none"/></svg></div>
<svg style="position:absolute;left:11px;top:18.5px" width="50" height="50" viewBox="0 0 50 50">
<defs><linearGradient id="pg1" x1="0" y1="0" x2="1" y2="0"><stop offset="0" stop-color="#f4f4f4"/><stop offset="0.450" stop-color="#a8a8a8"/><stop offset="1" stop-color="#5e5e5e"/></linearGradient>
<linearGradient id="pg2" x1="0.500" y1="0" x2="0.700" y2="1"><stop offset="0" stop-color="#4a4a4a"/><stop offset="0.500" stop-color="#b0b0b0"/><stop offset="1" stop-color="#ffffff"/></linearGradient></defs>
<circle cx="25" cy="25" r="24.500" fill="#050505"/>
<path d="M25 1.500 A23.500 23.500 0 0 0 25 48.500 C23 40 23.500 10 25 1.500Z" fill="url(#pg1)"/>
<path d="M25 1.500 C35 1.500 48.500 10 48.500 25 C48.500 38 38 48.500 27 48.500 C23.500 42 23.500 32 25 28.500 C33 28.500 37 22 37 15.500 C37 8 31 3 25 1.500Z" fill="url(#pg2)"/>
</svg>
<div class="tb" style="left:19px;top:112px"><svg viewBox="0 0 34 34" fill="none" stroke="#dedede" stroke-width="1.5" stroke-linecap="round" stroke-linejoin="round"><path d="M9.500 12.500 A9 9 0 1 1 9 22" stroke-width="1.800"/><path d="M8 7 V13 H14" stroke-width="1.800"/></svg></div>
<div class="tb dim" style="left:19px;top:156px"><svg viewBox="0 0 34 34" fill="none" stroke="#3a3a3a" stroke-width="1.5" stroke-linecap="round" stroke-linejoin="round"><path d="M24.500 12.500 A9 9 0 1 0 25 22" stroke-width="1.800"/><path d="M26 7 V13 H20" stroke-width="1.800"/></svg></div>
<div class="tb" style="left:19px;top:233px"><svg viewBox="0 0 34 34" fill="none" stroke="#dedede" stroke-width="1.5" stroke-linecap="round" stroke-linejoin="round"><path d="M8 15.500 A9.200 9.200 0 0 1 25 11.500 M26 18.500 A9.200 9.200 0 0 1 9 22.500" stroke-width="1.800"/><path d="M25.500 6.500 V12 H20 M8.500 27.500 V22 H14" stroke-width="1.800"/></svg></div>
<div class="tb" style="left:19px;top:277px"><svg viewBox="0 0 34 34" fill="none" stroke="#dedede" stroke-width="1.5" stroke-linecap="round" stroke-linejoin="round"><path d="M13 8 H7.500 V27 H27 V8 H21.500" stroke-width="1.800" stroke-linejoin="miter"/><path d="M17.300 5.500 V15 M13.500 11.500 L17.300 15.500 L21 11.500" stroke-width="1.800"/><rect x="13" y="18.500" width="8.500" height="5" fill="#f5c22e" stroke="none"/></svg></div>
<div class="tb" style="left:19px;top:320px"><svg viewBox="0 0 34 34" fill="none" stroke="#dedede" stroke-width="1.5" stroke-linecap="round" stroke-linejoin="round"><path d="M7.500 7 H23 L27 11 V27.500 H7.500Z" stroke-width="1.800" stroke-linejoin="miter"/><path d="M12 7 V12.500 H21 V7" stroke-width="1.600"/><path d="M11.500 18 H23 M11.500 22.500 H23" stroke-width="1.600"/></svg></div>
<div class="tb" style="left:19px;top:364px"><svg viewBox="0 0 34 34" fill="none" stroke="#dedede" stroke-width="1.5" stroke-linecap="round" stroke-linejoin="round"><path d="M17 5 L28 11 V23.500 L17 29.500 L6.500 23.500 V11Z" fill="#5fae4c" stroke="none"/><path d="M17 5 L28 11 L22.500 14 L17 11 L11.500 14 L6.500 11Z" fill="#7cc868" stroke="none"/><path d="M17 11.500 L22.500 14.500 V20.500 L17 23.500 L11.500 20.500 V14.500Z" fill="#333" stroke="none"/><path d="M6 17.500 H18 M14.500 13.500 L18.500 17.500 L14.500 21.500" stroke="#fff" stroke-width="2.200"/></svg></div>
<div class="tb" style="left:19px;top:408px"><svg viewBox="0 0 34 34" fill="none" stroke="#dedede" stroke-width="1.5" stroke-linecap="round" stroke-linejoin="round"><path d="M27 12 V7.500 H7.500 V27.500 H27 V23" stroke-width="1.800" stroke-linejoin="miter"/><path d="M13 17.500 H25 M21 13 L25.500 17.500 L21 22" stroke-width="1.800"/></svg></div>
<div class="tb" style="left:19px;top:485px"><svg viewBox="0 0 34 34" fill="none" stroke="#dedede" stroke-width="1.5" stroke-linecap="round" stroke-linejoin="round"><path d="M12.500 11 H21.500 M17 6.500 V15.500" stroke-width="1.600"/><text x="17" y="25.500" text-anchor="middle" font-family="Liberation Sans,sans-serif" font-weight="bold" font-size="8.500" fill="#dedede" stroke="none" letter-spacing="0.300">REF</text></svg></div>
<div class="ul" style="left:22px;top:514.5px;background:#bdbdbd"></div>
<div class="tb" style="left:19px;top:530px"><svg viewBox="0 0 34 34" fill="none" stroke="#dedede" stroke-width="1.5" stroke-linecap="round" stroke-linejoin="round"><path d="M13.500 10 H20.500 M17 6.500 V13.500" stroke-width="1.500"/><path d="M8 16.500 H26.500 M8 23.500 H26.500 M11 14 V26.500 M23.500 14 V26.500 M11 23.500 L23.500 16.500" stroke-width="1.600"/></svg></div>
<div class="ul" style="left:22px;top:559.5px;background:#bdbdbd"></div>
<div class="tb" style="left:19px;top:608px"><svg viewBox="0 0 34 34" fill="none" stroke="#dedede" stroke-width="1.5" stroke-linecap="round" stroke-linejoin="round"><rect x="5" y="5" width="24" height="24" rx="3" fill="#f5c22e" stroke="none"/></svg></div>
<div class="tb" style="left:19px;top:651px"><svg viewBox="0 0 34 34" fill="none" stroke="#dedede" stroke-width="1.5" stroke-linecap="round" stroke-linejoin="round"><circle cx="17" cy="13" r="7" fill="#e8506a" stroke="none"/><circle cx="12" cy="20.500" r="7" fill="#e8b830" stroke="none" opacity="0.920"/><circle cx="22" cy="20.500" r="7" fill="#4a88e0" stroke="none" opacity="0.920"/><path d="M17 15 a7 7 0 0 1 2 5.500 a7 7 0 0 1 -2 5 a7 7 0 0 1 -2 -5 a7 7 0 0 1 2 -5.500z" fill="#355a30" stroke="none"/></svg></div>
<div class="tb" style="left:19px;top:695px"><svg viewBox="0 0 34 34" fill="none" stroke="#dedede" stroke-width="1.5" stroke-linecap="round" stroke-linejoin="round"><circle cx="17.500" cy="17" r="10" fill="#f5c22e" stroke="none"/><path d="M9 23 A10 10 0 0 1 23.500 9 Z" fill="#333" stroke="none"/><path d="M8 21 A10 10 0 0 1 22 8 M10 13 Q15 15 17 21 M15 8 Q16 14 22 17 M11 10 L20 19 M8 27 L26 8.500" stroke-width="1.100"/></svg></div>
<div class="tb" style="left:19px;top:738px"><svg viewBox="0 0 34 34" fill="none" stroke="#dedede" stroke-width="1.5" stroke-linecap="round" stroke-linejoin="round"><path d="M17 6 L27 11.500 V22.500 L17 28.500 L7 22.500 V11.500Z M17 17 L27 11.500 M17 17 L7 11.500 M17 17 V28.500" stroke-width="1.600"/><path d="M17 6 V17 M7 22.500 L17 17 L27 22.500" stroke="#c9a83a" stroke-width="1"/></svg></div>
<div class="tb" style="left:19px;top:816px"><svg viewBox="0 0 34 34" fill="none" stroke="#dedede" stroke-width="1.5" stroke-linecap="round" stroke-linejoin="round"><path d="M13.500 22.500 C13.500 19.500 10 18 10 13.500 A7 7 0 0 1 24 13.500 C24 18 20.500 19.500 20.500 22.500Z M14 25 H20 M15 27.500 H19" stroke="#ecd23c" stroke-width="1.500"/><path d="M15.500 15 L17 17.500 L18.500 15 M17 17.500 V22" stroke="#ecd23c" stroke-width="1"/></svg></div>
<div class="tb" style="left:19px;top:860px"><svg viewBox="0 0 34 34" fill="none" stroke="#dedede" stroke-width="1.5" stroke-linecap="round" stroke-linejoin="round"><rect x="7" y="10" width="20.500" height="15" stroke-width="1.700"/><path d="M7 10 L17.200 19 L27.500 10 M7 25 L14.500 17 M27.500 25 L20 17" stroke-width="1.400"/></svg></div>
<div class="tb" style="left:647px;top:936px"><svg viewBox="0 0 34 34" fill="none" stroke="#dedede" stroke-width="1.5" stroke-linecap="round" stroke-linejoin="round"><path d="M17 6.500 L26.500 10.500 V23 L17 27.500 L7.500 23 V10.500Z M7.500 10.500 L17 15 L26.500 10.500 M17 15 V27.500" stroke-width="1" stroke-dasharray="1.800 1.300"/><circle cx="17" cy="6.5" r="1.500" fill="#dedede" stroke="none"/><circle cx="26.5" cy="10.5" r="1.500" fill="#dedede" stroke="none"/><circle cx="26.5" cy="23" r="1.500" fill="#dedede" stroke="none"/><circle cx="17" cy="27.5" r="1.500" fill="#dedede" stroke="none"/><circle cx="7.5" cy="23" r="1.500" fill="#dedede" stroke="none"/><circle cx="7.5" cy="10.5" r="1.500" fill="#dedede" stroke="none"/><circle cx="17" cy="15" r="1.500" fill="#dedede" stroke="none"/></svg></div>
<div class="dot" style="left:661.5px;top:976.0px"></div>
<div class="tb" style="left:691px;top:936px"><svg viewBox="0 0 34 34" fill="none" stroke="#dedede" stroke-width="1.5" stroke-linecap="round" stroke-linejoin="round"><path d="M17 6 L27 10.500 V23 L17 28 L7 23 V10.500Z M7 10.500 L17 15.500 L27 10.500 M17 15.500 V28" stroke-width="1.800"/></svg></div>
<div class="dot" style="left:705.5px;top:976.0px"></div>
<div class="tb" style="left:735px;top:936px"><svg viewBox="0 0 34 34" fill="none" stroke="#dedede" stroke-width="1.5" stroke-linecap="round" stroke-linejoin="round"><path d="M17 8 L26.500 12.500 L17 17 L7.500 12.500Z" fill="#8a8a8a" stroke="none"/><path d="M7.500 12.500 L17 17 V28 L7.500 23.500Z" fill="#6a6a6a" stroke="none"/><path d="M26.500 12.500 L17 17 V28 L26.500 23.500Z" fill="#787878" stroke="none"/></svg></div>
<div class="dot" style="left:749.5px;top:976.0px"></div>
<div class="tb" style="left:798px;top:936px"><svg viewBox="0 0 34 34" fill="none" stroke="#dedede" stroke-width="1.5" stroke-linecap="round" stroke-linejoin="round"><path d="M17 7 V19 L27 25" stroke="#8a8a8a" stroke-width="1.300"/><path d="M17 19 L8.500 24" stroke-width="1.500"/><path d="M4 24 l4 4.500 M8 24 l-4 4.500" stroke-width="1.500"/></svg></div>
<div class="tb" style="left:841px;top:936px"><svg viewBox="0 0 34 34" fill="none" stroke="#dedede" stroke-width="1.5" stroke-linecap="round" stroke-linejoin="round"><path d="M17 7 V19 L7 25" stroke="#8a8a8a" stroke-width="1.300"/><path d="M17 19 L23.500 23" stroke-width="1.500"/><path d="M25 23.500 l2.300 4.500 M29.800 23.500 l-3.800 8" stroke-width="1.500"/></svg></div>
<div class="tb" style="left:885px;top:936px"><svg viewBox="0 0 34 34" fill="none" stroke="#dedede" stroke-width="1.5" stroke-linecap="round" stroke-linejoin="round"><path d="M17 19 L7 25 M17 19 L27 25" stroke="#8a8a8a" stroke-width="1.300"/><path d="M17 11.500 V19" stroke-width="1.600"/><path d="M15 4 h4 l-4 4.800 h4" stroke-width="1.400"/></svg></div>
<div class="tb" style="left:929px;top:936px"><svg viewBox="0 0 34 34" fill="none" stroke="#dedede" stroke-width="1.5" stroke-linecap="round" stroke-linejoin="round"><circle cx="14.500" cy="14.500" r="8" stroke-width="1.600"/><path d="M20.500 20.500 L28 28" stroke-width="1.800"/><path d="M10.500 14.500 H18.500 M14.500 10.500 V18.500" stroke-width="1.600"/></svg></div>
<div class="tb dim" style="left:973px;top:936px"><svg viewBox="0 0 34 34" fill="none" stroke="#3c3c3c" stroke-width="1.4" stroke-linecap="round" stroke-linejoin="round"><path d="M8 8 L16 11 V27 L8 23Z M16 11 L20 9"/><path d="M21 11 a4 4 0 0 1 5 3 M21 19 l4 -4 m-3 0 h3 v3"/></svg></div>
<div class="tb" style="left:1017px;top:936px"><svg viewBox="0 0 34 34" fill="none" stroke="#dedede" stroke-width="1.5" stroke-linecap="round" stroke-linejoin="round"><path d="M9 20 H21.500 M15.200 13.500 V26.500" stroke-width="1.800"/><path d="M20 11 a5 5 0 0 1 8 0 M22 13 a2.500 2.500 0 0 1 4 0" stroke-width="1.300"/></svg></div>
<div class="tb" style="left:1079px;top:936px"><svg viewBox="0 0 34 34" fill="none" stroke="#dedede" stroke-width="1.5" stroke-linecap="round" stroke-linejoin="round"><path d="M17 6 V17 M17 19 L6.500 25.500 M17 19 L27.500 25.500" stroke-width="1.700"/><path d="M17 14 L21 16.500 V21 L17 23.500 L13 21 V16.500Z" fill="#555" stroke="#8a8a8a" stroke-width="1"/></svg></div>
<div class="tb" style="left:1123px;top:936px"><svg viewBox="0 0 34 34" fill="none" stroke="#dedede" stroke-width="1.5" stroke-linecap="round" stroke-linejoin="round"><path d="M7 24 L17 19.500 L27 24 L17 28.500Z" fill="#c89c1c" stroke="none"/><path d="M17 6 L24 9.500 V18 L17 21.500 L10 18 V9.500Z" fill="#333" stroke-width="1.600"/><path d="M10 9.500 L17 13 L24 9.500 M17 13 V21.500" stroke-width="1.600"/></svg></div>
<div class="tb" style="left:1167px;top:936px"><svg viewBox="0 0 34 34" fill="none" stroke="#777" stroke-width="0.9" stroke-linecap="round" stroke-linejoin="round"><path d="M9.0 9 V26 M9 9.0 H26" /><path d="M11.7 9 V26 M9 11.8 H26" /><path d="M14.4 9 V26 M9 14.6 H26" /><path d="M17.1 9 V26 M9 17.4 H26" /><path d="M19.8 9 V26 M9 20.2 H26" /><path d="M22.5 9 V26 M9 23.0 H26" /><path d="M25.2 9 V26 M9 25.8 H26" /></svg></div>
<div class="ul" style="left:1170px;top:965.5px;background:#9c9c9c"></div>
<div class="tb" style="left:1210px;top:936px"><svg viewBox="0 0 34 34" fill="none" stroke="#dedede" stroke-width="1.5" stroke-linecap="round" stroke-linejoin="round"><path d="M8.500 14 L17 9 L25.500 13 V24 L17 28 L8.500 24Z" fill="#5a6472" stroke="none"/><path d="M8.500 14 L17 9 L25.500 13 L17 17.500Z" fill="#8a94a0" stroke="none"/><path d="M17 17.500 L25.500 13 V24 L17 28Z" fill="#f5c22e" stroke="none"/><path d="M18 24 L23 15.500 M20.500 25.500 L25 18 M17.500 20 L20 16" stroke="#6a5410" stroke-width="1.200"/></svg></div>
<div class="ul" style="left:1213px;top:965.5px;background:#9c9c9c"></div>
<div class="tb" style="left:1254px;top:936px"><svg viewBox="0 0 34 34" fill="none" stroke="#dedede" stroke-width="1.5" stroke-linecap="round" stroke-linejoin="round"><text x="17" y="14.500" text-anchor="middle" font-family="Liberation Sans,sans-serif" font-weight="bold" font-size="10.500" fill="#dedede" stroke="none" letter-spacing="0.600">xyz</text><path d="M11 21.500 H23 M19.500 18 L23.500 21.500 L19.500 25" stroke-width="2"/></svg></div>
<div class="ul" style="left:1257px;top:965.5px;background:#bdbdbd"></div>
<div class="vef">[ V: 0 E: 0 F: 6 ]</div>
<div class="fname">Carafe Concepts.phi</div>
<div class="copy">© 2022 Phenometry PC</div>
</div>
<div id="tabs">
<div class="addtab"></div>
<svg style="position:absolute;left:11px;top:8px" width="18" height="18" viewBox="0 0 18 18" stroke="#555" stroke-width="3" fill="none"><path d="M0.500 9 H17.500 M9 0.500 V17.500"/></svg>
<div class="tab" style="left:48px;width:207.5px"></div>
<svg class="ti" style="left:61.5px;top:5px" width="22" height="22" viewBox="0 0 22 22" fill="#fff" stroke="#2a2a2a" stroke-width="1.300" stroke-linejoin="round"><path d="M9.500 3.500 L13 1.200 H19 Q20.500 1.200 20.500 2.700 V18.500 L17.500 20.800 H10.500 V5 Q10.500 3.500 9.500 3.500Z"/><path d="M10.500 20.800 V5.500 Q10.500 3.800 12 3.800 H16 Q17.500 3.800 17.500 5.300 V20.800 M17.500 5 L20.300 2.300" fill="none"/><path d="M1 9.500 L3.500 7.200 H8.500 Q10 7.200 10 8.700 V19 L7.500 20.800 H2.500 Q1 20.800 1 19.300Z"/><path d="M1.200 10.500 Q1.200 9.500 2.500 9.500 H6 Q7.500 9.500 7.500 11 V20.800 M7.500 10.500 L9.800 8" fill="none"/></svg>
<div class="tt" style="left:88.5px;letter-spacing:0.2px">Carafe Concepts_phi</div>
<div class="tab" style="left:257px;width:243.5px"></div>
<svg class="ti" style="left:271px;top:5px" width="22" height="22" viewBox="0 0 22 22" fill="#fff" stroke="#2a2a2a" stroke-width="1.300" stroke-linejoin="round"><path d="M9.500 3.500 L13 1.200 H19 Q20.500 1.200 20.500 2.700 V18.500 L17.500 20.800 H10.500 V5 Q10.500 3.500 9.500 3.500Z"/><path d="M10.500 20.800 V5.500 Q10.500 3.800 12 3.800 H16 Q17.500 3.800 17.500 5.300 V20.800 M17.500 5 L20.300 2.300" fill="none"/><path d="M1 9.500 L3.500 7.200 H8.500 Q10 7.200 10 8.700 V19 L7.500 20.800 H2.500 Q1 20.800 1 19.300Z"/><path d="M1.200 10.500 Q1.200 9.500 2.500 9.500 H6 Q7.500 9.500 7.500 11 V20.800 M7.500 10.500 L9.800 8" fill="none"/></svg>
<div class="tt" style="left:297.7px;letter-spacing:0.33px">jug-short with pour spo...</div>
<div class="tab" style="left:502px;width:153px"></div>
<svg class="ti" style="left:517px;top:5px" width="22" height="22" viewBox="0 0 22 22" fill="#fff" stroke="#2a2a2a" stroke-width="1.300" stroke-linejoin="round"><path d="M9.500 3.500 L13 1.200 H19 Q20.500 1.200 20.500 2.700 V18.500 L17.500 20.800 H10.500 V5 Q10.500 3.500 9.500 3.500Z"/><path d="M10.500 20.800 V5.500 Q10.500 3.800 12 3.800 H16 Q17.500 3.800 17.500 5.300 V20.800 M17.500 5 L20.300 2.300" fill="none"/><path d="M1 9.500 L3.500 7.200 H8.500 Q10 7.200 10 8.700 V19 L7.500 20.800 H2.500 Q1 20.800 1 19.300Z"/><path d="M1.200 10.500 Q1.200 9.500 2.500 9.500 H6 Q7.500 9.500 7.500 11 V20.800 M7.500 10.500 L9.800 8" fill="none"/></svg>
<div class="tt" style="left:542.7px;letter-spacing:0.45px">jug-short_phi</div>
<div class="tab active" style="left:656px;width:161.5px"></div>
<svg class="ti" style="left:669px;top:4.5px" width="23" height="23" viewBox="0 0 50 50"><defs><linearGradient id="p3a" x1="0" y1="0" x2="1" y2="0"><stop offset="0" stop-color="#9a9a9a"/><stop offset="0.500" stop-color="#3a3a3a"/><stop offset="1" stop-color="#0a0a0a"/></linearGradient><linearGradient id="p3b" x1="0.500" y1="0" x2="0.800" y2="1"><stop offset="0" stop-color="#111"/><stop offset="0.600" stop-color="#777"/><stop offset="1" stop-color="#aab"/></linearGradient></defs><circle cx="25" cy="25" r="24.500" fill="#fff"/><path d="M25 0.500 A24.500 24.500 0 0 0 25 49.500 C23 40 23.500 10 25 0.500Z" fill="url(#p3a)"/><path d="M25 0.500 C36 0.500 49.500 10 49.500 25 C49.500 39 38 49.500 27 49.500 C23.500 42 23.500 32 25 28.500 C33 28.500 37 22 37 15.500 C37 8 31 2.500 25 0.500Z" fill="url(#p3b)"/></svg>
<div class="tt act" style="left:697.7px;letter-spacing:0px">Phi Staging (1)</div>
<div class="tab" style="left:819px;width:76.5px"></div>
<div style="position:absolute;left:830.5px;top:3px;width:25px;height:26px;background:#fff"></div>
<svg class="ti" style="left:831.5px;top:4.5px" width="23" height="23" viewBox="0 0 50 50"><defs><linearGradient id="p4a" x1="0" y1="0" x2="1" y2="0"><stop offset="0" stop-color="#9a9a9a"/><stop offset="0.500" stop-color="#3a3a3a"/><stop offset="1" stop-color="#0a0a0a"/></linearGradient><linearGradient id="p4b" x1="0.500" y1="0" x2="0.800" y2="1"><stop offset="0" stop-color="#111"/><stop offset="0.600" stop-color="#777"/><stop offset="1" stop-color="#aab"/></linearGradient></defs><circle cx="25" cy="25" r="24.500" fill="#fff"/><path d="M25 0.500 A24.500 24.500 0 0 0 25 49.500 C23 40 23.500 10 25 0.500Z" fill="url(#p4a)"/><path d="M25 0.500 C36 0.500 49.500 10 49.500 25 C49.500 39 38 49.500 27 49.500 C23.500 42 23.500 32 25 28.500 C33 28.500 37 22 37 15.500 C37 8 31 2.500 25 0.500Z" fill="url(#p4b)"/></svg>
<div class="tt" style="left:859.3px;letter-spacing:0px">Phi</div>
<div class="tab" style="left:897px;width:140.5px"></div>
<svg class="ti" style="left:910px;top:4.5px" width="23" height="23" viewBox="0 0 23 23" fill="none" stroke="#333" stroke-width="1.200" stroke-linejoin="round"><path d="M1 4 L5 1 H21.500 V17.500 L18 21.500 H1Z" fill="#fff"/><path d="M1 4 H18 V21.500 M18 4 L21.500 1"/><path d="M3.500 7 L6 5 H15 V12.500 L12.500 15 H3.500Z" fill="#777" stroke="#555"/><path d="M3.500 7 H12.500 V15 M12.500 7 L15 5" stroke="#444"/></svg>
<div class="tt" style="left:937.7px;letter-spacing:0.3px">Assembly 1</div>
<div class="tab" style="left:1039px;width:148.5px"></div>
<svg class="ti" style="left:1052.5px;top:6px" width="22" height="20" viewBox="0 0 22 20" fill="#fff" stroke="#333" stroke-width="1.500" stroke-linejoin="round"><path d="M1 2.500 Q1 1.500 2 1.500 H7.500 L9.500 4 H20 Q21 4 21 5 V17.500 Q21 18.500 20 18.500 H2 Q1 18.500 1 17.500Z"/></svg>
<div class="tt" style="left:1079.3px;letter-spacing:0.25px">CAD Imports</div>
<div class="tab" style="left:1189px;width:116.5px"></div>
<svg class="ti" style="left:1202px;top:6px" width="22" height="20" viewBox="0 0 22 20" fill="#fff" stroke="#333" stroke-width="1.500" stroke-linejoin="round"><path d="M1 2.500 Q1 1.500 2 1.500 H7.500 L9.500 4 H20 Q21 4 21 5 V17.500 Q21 18.500 20 18.500 H2 Q1 18.500 1 17.500Z"/></svg>
<div class="tt" style="left:1229px;letter-spacing:0.2px">Phi Files</div>
<div class="tab" style="left:1307px;width:227.5px"></div>
<svg class="ti" style="left:1320px;top:5px" width="22" height="22" viewBox="0 0 22 22" fill="#fff" stroke="#222" stroke-width="1.500"><rect x="1" y="1" width="20" height="20" rx="3.500"/><path d="M5 6.500 H17 M5 10 H17 M5 13.500 H17 M5 17 H17" stroke-width="1.300"/></svg>
<div class="tt" style="left:1347.7px;letter-spacing:0.25px">_cube_with_hole.as.phi</div>
<div class="tab" style="left:1536px;width:176.5px"></div>
<svg class="ti" style="left:1549px;top:5px" width="22" height="22" viewBox="0 0 22 22" fill="#fff" stroke="#222" stroke-width="1.500"><rect x="1" y="1" width="20" height="20" rx="3.500"/><path d="M5 6.500 H17 M5 10 H17 M5 13.500 H17 M5 17 H17" stroke-width="1.300"/></svg>
<div class="tt" style="left:1576px;letter-spacing:0.3px">_jug-short.as.phi</div>
<div class="tab" style="left:1714px;width:137px"></div>
<svg class="ti" style="left:1727.5px;top:5px" width="22" height="22" viewBox="0 0 22 22" fill="#fff" stroke="#222" stroke-width="1.500"><rect x="1" y="1" width="20" height="20" rx="3.500"/><path d="M5 6.500 H17 M5 10 H17 M5 13.500 H17 M5 17 H17" stroke-width="1.300"/></svg>
<div class="tt" style="left:1755px;letter-spacing:0.3px">_jug-short.as.phi</div>
<div class="tabnav"></div>
<svg style="position:absolute;left:1814px;top:7px" width="50" height="20" viewBox="1863 1049 50 20" fill="none" stroke-width="2.600" stroke-linecap="round" stroke-linejoin="round"><path d="M1873.500 1051.500 L1866.500 1059 L1873.500 1066.500" stroke="#b0b0b0" stroke-width="2"/><path d="M1896.500 1051.500 L1904 1059 L1896.500 1066.500" stroke="#444"/></svg>
<div class="tabfoot1"></div><div class="tabfoot2"></div>
</div>
</div>
</body></html>
